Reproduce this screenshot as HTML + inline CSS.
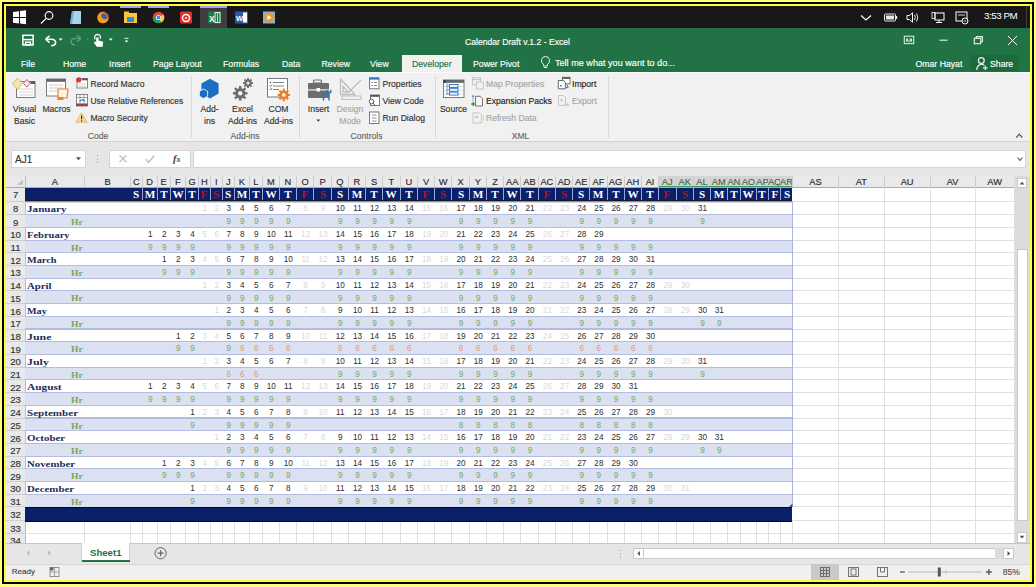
<!DOCTYPE html><html><head><meta charset="utf-8"><style>
html,body{margin:0;padding:0;width:1036px;height:587px;overflow:hidden;background:#fdfd82;position:relative}
div{line-height:1.15}
</style></head><body>
<div style="position:absolute;left:2px;top:2px;width:1032px;height:582px;background:#000"></div>
<div style="position:absolute;left:4px;top:4px;width:1028px;height:578px;background:#fcfc3a"></div>
<div style="position:absolute;left:6px;top:6px;width:1024px;height:574px;background:#f0f0f0;overflow:hidden"></div>
<div style="position:absolute;left:6px;top:6px;width:1024px;height:22px;background:#1a1719"></div>
<div style="position:absolute;left:200px;top:6px;width:27px;height:22px;background:#3f3d42"></div>
<div style="position:absolute;left:120px;top:6px;width:21px;height:1.6px;background:#9ea4e6"></div>
<div style="position:absolute;left:148px;top:6px;width:21px;height:1.6px;background:#9ea4e6"></div>
<div style="position:absolute;left:200px;top:6px;width:27px;height:1.6px;background:#9ea4e6"></div>

<svg style="position:absolute;left:0;top:0" width="1036" height="30">
 <!-- windows logo -->
 <g fill="#fff"><polygon points="13,12 19,11.2 19,17 13,17"/><polygon points="20,11 26,10.2 26,17 20,17"/><polygon points="13,18 19,18 19,23.5 13,22.8"/><polygon points="20,18 26,18 26,24.2 20,23.6"/></g>
 <!-- search -->
 <circle cx="49" cy="15.5" r="3.8" fill="none" stroke="#fff" stroke-width="1.2"/><line x1="46.2" y1="18.3" x2="41" y2="23.5" stroke="#fff" stroke-width="1.2"/>
 <!-- notepad-ish -->
 <polygon points="72,11 81,11 81,24 70,24" fill="#a9d4ea"/><polygon points="72,11 74,11 72,24 70,24" fill="#6aaed0"/>
 <!-- firefox -->
 <circle cx="103" cy="17.5" r="5.8" fill="#e8641c"/><circle cx="103.5" cy="17" r="3.3" fill="#3d5db5"/><path d="M97.5,17 Q99,11 105,11.7 Q101,13 101,16 Q103,21 108.6,18.5 Q107,23.5 102,23.3 Q97,22.5 97.5,17Z" fill="#f39c1e"/>
 <!-- folder -->
 <rect x="124" y="13" width="13" height="10" fill="#f5c842"/><rect x="124" y="11.5" width="5" height="2" fill="#f5c842"/><rect x="127" y="17" width="7" height="5" fill="#2f8fd6"/>
 <!-- chrome -->
 <circle cx="158.5" cy="17.5" r="5.8" fill="#dd4b39"/><path d="M158.5,17.5 L152.7,17.5 A5.8,5.8 0 0,0 161.4,22.5Z" fill="#1ea362"/><path d="M158.5,17.5 L161.4,22.5 A5.8,5.8 0 0,0 163.5,14.6Z" fill="#fcc934"/><circle cx="158.5" cy="17.5" r="2.6" fill="#fff"/><circle cx="158.5" cy="17.5" r="1.9" fill="#4285f4"/>
 <!-- red app -->
 <rect x="180" y="11.5" width="12" height="12" rx="1.5" fill="#e2312a"/><circle cx="186" cy="18" r="3.5" fill="none" stroke="#fff" stroke-width="1.4"/><circle cx="186" cy="18" r="1" fill="#fff"/>
 <!-- excel -->
 <rect x="208" y="11.5" width="13" height="12" fill="#1d7a45"/><text x="209" y="21.5" font-family="Liberation Sans" font-weight="700" font-size="8.5" fill="#fff">X</text><rect x="215" y="12.5" width="5" height="10" fill="none" stroke="#fff" stroke-width="0.9"/><line x1="217.5" y1="12.5" x2="217.5" y2="22.5" stroke="#fff" stroke-width="0.7"/>
 <!-- word -->
 <rect x="235" y="11.5" width="13" height="12" fill="#2b5aa8"/><text x="236" y="21" font-family="Liberation Sans" font-weight="700" font-size="7.5" fill="#fff">W</text><rect x="243" y="12.5" width="4" height="10" fill="#fff"/>
 <!-- media -->
 <rect x="263" y="11.5" width="12" height="12" fill="#8aaecc"/><circle cx="269" cy="17.5" r="4.5" fill="#f39a1d"/><polygon points="267.5,15 267.5,20 271.5,17.5" fill="#fff"/>
 <!-- tray -->
 <polyline points="861,15.5 866,20 871,15.5" fill="none" stroke="#fff" stroke-width="1.2"/>
 <rect x="884.5" y="14" width="11" height="7" rx="1" fill="none" stroke="#e8e8e8" stroke-width="1"/><rect x="886" y="15.5" width="8" height="4" fill="#e8e8e8"/><rect x="896" y="16" width="1.2" height="3" fill="#e8e8e8"/>
 <polygon points="907,15.5 909.5,15.5 912.5,12.8 912.5,22.2 909.5,19.5 907,19.5" fill="none" stroke="#fff" stroke-width="1"/><path d="M914.5,15 Q916,17.5 914.5,20 M916.5,13.5 Q919,17.5 916.5,21.5" fill="none" stroke="#fff" stroke-width="0.9"/>
 <rect x="935" y="13" width="9" height="7" fill="none" stroke="#fff" stroke-width="1"/><line x1="939" y1="20" x2="939" y2="22.5" stroke="#fff"/><line x1="936" y1="22.5" x2="942" y2="22.5" stroke="#fff"/><rect x="932" y="12.5" width="3" height="6" fill="none" stroke="#fff" stroke-width="0.8"/>
 <rect x="956" y="12" width="11" height="9" fill="none" stroke="#fff" stroke-width="1"/><line x1="958" y1="15" x2="965" y2="15" stroke="#fff" stroke-width="0.8"/><circle cx="965" cy="21" r="3" fill="#1a1719" stroke="#fff" stroke-width="1"/><line x1="963.5" y1="21" x2="966.5" y2="21" stroke="#fff" stroke-width="0.8"/>
 <line x1="1026.5" y1="6" x2="1026.5" y2="28" stroke="#555" stroke-width="0.6"/>
</svg>
<div style="position:absolute;left:984px;top:9.9px;white-space:nowrap;font-family:'Liberation Sans';font-size:9.8px;letter-spacing:-0.45px;color:#fff;">3:53 PM</div>
<div style="position:absolute;left:6px;top:28px;width:1024px;height:44px;background:#217346"></div>
<svg style="position:absolute;left:0;top:0" width="1036" height="80">
  <!-- save -->
 <g fill="none" stroke="#fff" stroke-width="1.5"><rect x="22.9" y="35.3" width="10.2" height="9.6"/><line x1="22.9" y1="39.6" x2="33.1" y2="39.6"/><rect x="25.6" y="42.2" width="4.8" height="2.7"/></g>
 <!-- undo -->
 <path d="M45.6,39.2 L49.6,35.8 M45.6,39.2 L49.6,42.6 M45.6,39.2 L51.5,39.2 Q55.6,39.4 55.6,42.6 Q55.3,45.6 51.2,45.6" fill="none" stroke="#fff" stroke-width="1.6"/>
 <polygon points="58.8,38.6 62.6,38.6 60.7,40.8" fill="#fff"/>
 <!-- redo (dim) -->
 <path d="M81,38.5 L77,35.3 M81,38.5 L77,41.7 M81,38.5 L75,38.5 Q71,38.7 71,41.9 Q71.3,44.9 75.2,44.9" fill="none" stroke="#5a9c74" stroke-width="1.5"/>
 <polygon points="86.5,38.6 88.9,38.6 87.7,40.2" fill="#5a9c74"/>
 <!-- touch -->
 <path d="M95,39.3 Q93.8,35 97.3,34.3 Q100.8,34.4 100.4,38.6" fill="none" stroke="#fff" stroke-width="1.3"/><path d="M96.2,37.5 L96.2,42.5 L94.6,41.2 L93.9,42.8 L96.8,46.8 L102.6,46.8 L103.2,41.8 L98.6,40.4 L98.6,37.5Z" fill="#fff"/>
 <polygon points="108.8,38.6 112.6,38.6 110.7,40.8" fill="#fff"/>
 <!-- customize -->
 <line x1="124.5" y1="38.3" x2="128.5" y2="38.3" stroke="#fff" stroke-width="0.9"/><polygon points="124.6,40.5 128.4,40.5 126.5,42.6" fill="#fff"/>
 <!-- window buttons -->
 <rect x="904.3" y="36.2" width="9.4" height="7.4" fill="none" stroke="#d8ecdf" stroke-width="1.1"/><rect x="906" y="38.6" width="6" height="3" fill="#d8ecdf"/><polygon points="907.3,40.6 910.7,40.6 909,38.3" fill="#217346"/>
 <line x1="939.5" y1="40.2" x2="947.5" y2="40.2" stroke="#e8f3ec" stroke-width="1.1"/>
 <rect x="974.3" y="38.3" width="6.4" height="5.4" fill="none" stroke="#e8f3ec" stroke-width="1.1"/><polyline points="976.3,38.3 976.3,36.6 982.4,36.6 982.4,41.8 980.7,41.8" fill="none" stroke="#e8f3ec" stroke-width="1.1"/>
 <path d="M1008,36 L1017,45 M1017,36 L1008,45" stroke="#fff" stroke-width="1"/>
 <!-- lightbulb -->
 <path d="M543.5,66 L543.5,64.5 Q541,62.5 541.5,59.8 Q542.3,56.5 545.5,56.5 Q548.7,56.5 549.5,59.8 Q550,62.5 547.5,64.5 L547.5,66 Z" fill="none" stroke="#fff" stroke-width="0.9"/><line x1="543.8" y1="67.5" x2="547.2" y2="67.5" stroke="#fff" stroke-width="0.9"/>

</svg>
<div style="position:absolute;left:465px;top:37.7px;white-space:nowrap;font-family:'Liberation Sans';-webkit-text-stroke:0.15px currentColor;font-size:8.6px;color:#fff;">Calendar Draft v.1.2 - Excel</div>
<div style="position:absolute;left:402px;top:55px;width:60px;height:17.5px;background:#f1f1f1"></div>
<div style="position:absolute;left:21px;top:58.6px;white-space:nowrap;font-family:'Liberation Sans';-webkit-text-stroke:0.15px currentColor;font-size:8.7px;color:#fff;">File</div>
<div style="position:absolute;left:63px;top:58.6px;white-space:nowrap;font-family:'Liberation Sans';-webkit-text-stroke:0.15px currentColor;font-size:8.7px;color:#fff;">Home</div>
<div style="position:absolute;left:109px;top:58.6px;white-space:nowrap;font-family:'Liberation Sans';-webkit-text-stroke:0.15px currentColor;font-size:8.7px;color:#fff;">Insert</div>
<div style="position:absolute;left:153px;top:58.6px;white-space:nowrap;font-family:'Liberation Sans';-webkit-text-stroke:0.15px currentColor;font-size:8.7px;color:#fff;">Page Layout</div>
<div style="position:absolute;left:223px;top:58.6px;white-space:nowrap;font-family:'Liberation Sans';-webkit-text-stroke:0.15px currentColor;font-size:8.7px;color:#fff;">Formulas</div>
<div style="position:absolute;left:282px;top:58.6px;white-space:nowrap;font-family:'Liberation Sans';-webkit-text-stroke:0.15px currentColor;font-size:8.7px;color:#fff;">Data</div>
<div style="position:absolute;left:321.5px;top:58.6px;white-space:nowrap;font-family:'Liberation Sans';-webkit-text-stroke:0.15px currentColor;font-size:8.7px;color:#fff;">Review</div>
<div style="position:absolute;left:370px;top:58.6px;white-space:nowrap;font-family:'Liberation Sans';-webkit-text-stroke:0.15px currentColor;font-size:8.7px;color:#fff;">View</div>
<div style="position:absolute;left:473px;top:58.6px;white-space:nowrap;font-family:'Liberation Sans';-webkit-text-stroke:0.15px currentColor;font-size:8.7px;color:#fff;">Power Pivot</div>
<div style="position:absolute;left:555px;top:58.4px;white-space:nowrap;font-family:'Liberation Sans';-webkit-text-stroke:0.15px currentColor;font-size:9.1px;color:#fff;">Tell me what you want to do...</div>
<div style="position:absolute;left:412px;top:58.6px;white-space:nowrap;font-family:'Liberation Sans';-webkit-text-stroke:0.15px currentColor;font-size:8.7px;color:#217346;">Developer</div>
<div style="position:absolute;left:915.5px;top:58.6px;white-space:nowrap;font-family:'Liberation Sans';-webkit-text-stroke:0.15px currentColor;font-size:8.7px;color:#fff;">Omar Hayat</div>
<div style="position:absolute;left:971px;top:55px;width:47px;height:16px;background:#1a6a3c"></div>
<div style="position:absolute;left:0;top:0"></div>
<div style="position:absolute;left:990px;top:58.6px;white-space:nowrap;font-family:'Liberation Sans';-webkit-text-stroke:0.15px currentColor;font-size:8.7px;color:#fff;">Share</div>
<svg style="position:absolute;left:0;top:0" width="1036" height="80"><circle cx="981.3" cy="60.6" r="2.9" fill="none" stroke="#e8f3ec" stroke-width="1.3"/><path d="M976.6,69.8 Q977.5,64.8 981.6,64.2 Q983.3,64.4 984.2,65.4" fill="none" stroke="#e8f3ec" stroke-width="1.3"/><path d="M983,67.8 L987.6,67.8 M985.3,65.5 L985.3,70.1" stroke="#e8f3ec" stroke-width="1.2"/></svg>
<div style="position:absolute;left:6px;top:72px;width:1024px;height:69.5px;background:#f1f1f1"></div>
<div style="position:absolute;left:6px;top:72px;width:1024px;height:1px;background:#fafafa"></div>
<div style="position:absolute;left:6px;top:141.3px;width:1024px;height:1px;background:#d4d4d4"></div>
<div style="position:absolute;left:190.8px;top:76px;width:1px;height:62px;background:#dadada"></div>
<div style="position:absolute;left:299.2px;top:76px;width:1px;height:62px;background:#dadada"></div>
<div style="position:absolute;left:434.6px;top:76px;width:1px;height:62px;background:#dadada"></div>
<div style="position:absolute;left:607.7px;top:76px;width:1px;height:62px;background:#dadada"></div>
<div style="position:absolute;left:-5.50px;top:105.3px;width:60px;text-align:center;white-space:nowrap;font-family:'Liberation Sans';-webkit-text-stroke:0.15px currentColor;font-size:8.6px;color:#333;">Visual</div>
<div style="position:absolute;left:-5.50px;top:117.3px;width:60px;text-align:center;white-space:nowrap;font-family:'Liberation Sans';-webkit-text-stroke:0.15px currentColor;font-size:8.6px;color:#333;">Basic</div>
<div style="position:absolute;left:26.50px;top:105.3px;width:60px;text-align:center;white-space:nowrap;font-family:'Liberation Sans';-webkit-text-stroke:0.15px currentColor;font-size:8.6px;color:#333;">Macros</div>
<div style="position:absolute;left:90.5px;top:79.5px;white-space:nowrap;font-family:'Liberation Sans';-webkit-text-stroke:0.15px currentColor;font-size:8.6px;color:#333;">Record Macro</div>
<div style="position:absolute;left:90.5px;top:96.5px;white-space:nowrap;font-family:'Liberation Sans';-webkit-text-stroke:0.15px currentColor;font-size:8.6px;color:#333;font-size:8.4px;">Use Relative References</div>
<div style="position:absolute;left:90.5px;top:113.5px;white-space:nowrap;font-family:'Liberation Sans';-webkit-text-stroke:0.15px currentColor;font-size:8.6px;color:#333;">Macro Security</div>
<div style="position:absolute;left:68.00px;top:131.8px;width:60px;text-align:center;white-space:nowrap;font-family:'Liberation Sans';-webkit-text-stroke:0.15px currentColor;font-size:8.6px;color:#666;">Code</div>
<div style="position:absolute;left:179.50px;top:105.3px;width:60px;text-align:center;white-space:nowrap;font-family:'Liberation Sans';-webkit-text-stroke:0.15px currentColor;font-size:8.6px;color:#333;">Add-</div>
<div style="position:absolute;left:179.50px;top:117.3px;width:60px;text-align:center;white-space:nowrap;font-family:'Liberation Sans';-webkit-text-stroke:0.15px currentColor;font-size:8.6px;color:#333;">ins</div>
<div style="position:absolute;left:212.50px;top:105.3px;width:60px;text-align:center;white-space:nowrap;font-family:'Liberation Sans';-webkit-text-stroke:0.15px currentColor;font-size:8.6px;color:#333;">Excel</div>
<div style="position:absolute;left:212.50px;top:117.3px;width:60px;text-align:center;white-space:nowrap;font-family:'Liberation Sans';-webkit-text-stroke:0.15px currentColor;font-size:8.6px;color:#333;">Add-ins</div>
<div style="position:absolute;left:248.50px;top:105.3px;width:60px;text-align:center;white-space:nowrap;font-family:'Liberation Sans';-webkit-text-stroke:0.15px currentColor;font-size:8.6px;color:#333;">COM</div>
<div style="position:absolute;left:248.50px;top:117.3px;width:60px;text-align:center;white-space:nowrap;font-family:'Liberation Sans';-webkit-text-stroke:0.15px currentColor;font-size:8.6px;color:#333;">Add-ins</div>
<div style="position:absolute;left:215.00px;top:131.8px;width:60px;text-align:center;white-space:nowrap;font-family:'Liberation Sans';-webkit-text-stroke:0.15px currentColor;font-size:8.6px;color:#666;">Add-ins</div>
<div style="position:absolute;left:288.50px;top:105.3px;width:60px;text-align:center;white-space:nowrap;font-family:'Liberation Sans';-webkit-text-stroke:0.15px currentColor;font-size:8.6px;color:#333;">Insert</div>
<div style="position:absolute;left:320.00px;top:105.3px;width:60px;text-align:center;white-space:nowrap;font-family:'Liberation Sans';-webkit-text-stroke:0.15px currentColor;font-size:8.6px;color:#a6a6a6;">Design</div>
<div style="position:absolute;left:320.00px;top:117.3px;width:60px;text-align:center;white-space:nowrap;font-family:'Liberation Sans';-webkit-text-stroke:0.15px currentColor;font-size:8.6px;color:#a6a6a6;">Mode</div>
<div style="position:absolute;left:382.5px;top:79.5px;white-space:nowrap;font-family:'Liberation Sans';-webkit-text-stroke:0.15px currentColor;font-size:8.6px;color:#333;">Properties</div>
<div style="position:absolute;left:382.5px;top:96.5px;white-space:nowrap;font-family:'Liberation Sans';-webkit-text-stroke:0.15px currentColor;font-size:8.6px;color:#333;">View Code</div>
<div style="position:absolute;left:382.5px;top:113.5px;white-space:nowrap;font-family:'Liberation Sans';-webkit-text-stroke:0.15px currentColor;font-size:8.6px;color:#333;">Run Dialog</div>
<div style="position:absolute;left:336.50px;top:131.8px;width:60px;text-align:center;white-space:nowrap;font-family:'Liberation Sans';-webkit-text-stroke:0.15px currentColor;font-size:8.6px;color:#666;">Controls</div>
<div style="position:absolute;left:423.50px;top:105.3px;width:60px;text-align:center;white-space:nowrap;font-family:'Liberation Sans';-webkit-text-stroke:0.15px currentColor;font-size:8.6px;color:#333;">Source</div>
<div style="position:absolute;left:486px;top:79.5px;white-space:nowrap;font-family:'Liberation Sans';-webkit-text-stroke:0.15px currentColor;font-size:8.6px;color:#a6a6a6;">Map Properties</div>
<div style="position:absolute;left:486px;top:96.5px;white-space:nowrap;font-family:'Liberation Sans';-webkit-text-stroke:0.15px currentColor;font-size:8.6px;color:#333;color:#222;">Expansion Packs</div>
<div style="position:absolute;left:486px;top:113.5px;white-space:nowrap;font-family:'Liberation Sans';-webkit-text-stroke:0.15px currentColor;font-size:8.6px;color:#a6a6a6;">Refresh Data</div>
<div style="position:absolute;left:572px;top:80px;white-space:nowrap;font-family:'Liberation Sans';-webkit-text-stroke:0.15px currentColor;font-size:8.6px;color:#333;color:#222;">Import</div>
<div style="position:absolute;left:572px;top:96.5px;white-space:nowrap;font-family:'Liberation Sans';-webkit-text-stroke:0.15px currentColor;font-size:8.6px;color:#a6a6a6;">Export</div>
<div style="position:absolute;left:490.50px;top:131.8px;width:60px;text-align:center;white-space:nowrap;font-family:'Liberation Sans';-webkit-text-stroke:0.15px currentColor;font-size:8.6px;color:#666;">XML</div>
<svg style="position:absolute;left:0;top:0" width="1036" height="150">
 <!-- Visual Basic -->
 <rect x="16.5" y="81.5" width="18.5" height="16" fill="#fff" stroke="#7a7a7a" stroke-width="1"/>
 <rect x="30.5" y="81.5" width="4.5" height="2.5" fill="#555"/>
 <g stroke="#c8c8c8" stroke-width="0.8"><line x1="19" y1="89" x2="33" y2="89"/><line x1="19" y1="92" x2="33" y2="92"/><line x1="19" y1="95" x2="33" y2="95"/></g>
 <polygon points="17.5,78 22.5,83.5 17.5,89.5 12.5,83.5" fill="#f5e3b8" stroke="#e3b85c" stroke-width="1"/>
 <polygon points="26.8,79.5 30.3,83.3 26.8,87.3 23.3,83.3" fill="#fbe0ea" stroke="#d9578a" stroke-width="1"/>
 <!-- Macros -->
 <rect x="46.5" y="79" width="19" height="17" fill="#fff" stroke="#7a7a7a" stroke-width="1"/>
 <rect x="46.5" y="79" width="19" height="2.8" fill="#666"/>
 <g stroke="#bcbcbc" stroke-width="0.8"><line x1="49" y1="85" x2="63" y2="85"/><line x1="49" y1="88" x2="63" y2="88"/><line x1="49" y1="91" x2="57" y2="91"/></g>
 <path d="M58,89 L68,89 L67,98 L58,98 Z" fill="#fff3e6" stroke="#e9852f" stroke-width="1.2"/><rect x="57.5" y="97" width="6" height="3" fill="#e9852f"/>
 <!-- Record Macro -->
 <rect x="77" y="78.5" width="10.5" height="9.5" fill="#fff" stroke="#7a7a7a" stroke-width="0.9"/><rect x="82" y="78.5" width="5.5" height="1.8" fill="#555"/>
 <g stroke="#c0c0c0" stroke-width="0.7"><line x1="78.5" y1="84" x2="86" y2="84"/><line x1="78.5" y1="86.3" x2="86" y2="86.3"/></g>
 <circle cx="78.8" cy="79.8" r="2.6" fill="#d9372a"/>
 <!-- Use relative -->
 <rect x="76.5" y="94.5" width="11" height="11.5" fill="#fff" stroke="#7a7a7a" stroke-width="0.9"/>
 <rect x="76.5" y="103.5" width="11" height="2.5" fill="#a4373a"/>
 <g stroke="#7a7a7a" stroke-width="0.7"><line x1="80" y1="94.5" x2="80" y2="106"/><line x1="84" y1="94.5" x2="84" y2="106"/><line x1="76.5" y1="97.5" x2="87.5" y2="97.5"/></g>
 <path d="M79.5,101.5 Q82,98.5 85,101" fill="none" stroke="#2e75c6" stroke-width="1.1"/>
 <!-- warning -->
 <polygon points="81.5,112.8 87.3,122.3 75.7,122.3" fill="#f3d9a0" stroke="#e2b55a" stroke-width="0.8"/>
 <rect x="81" y="115.5" width="1.2" height="3.8" fill="#333"/><rect x="81" y="120.2" width="1.2" height="1.2" fill="#333"/>
 <!-- Add-ins hexes -->
 <polygon points="210,78.7 218.6,83.5 218.6,93.5 210,98.5 201.4,93.5 201.4,83.5" fill="#1b6ec2"/>
 <polygon points="203.5,89 207.6,91.3 207.6,96.2 203.5,98.5 199.4,96.2 199.4,91.3" fill="#1b6ec2" stroke="#f1f1f1" stroke-width="0.9"/>
 <!-- gears -->
 <g fill="#6d6d6d">
  <circle cx="240.2" cy="93.3" r="5.2"/>
  <g stroke="#6d6d6d" stroke-width="2.4"><line x1="240.2" y1="86" x2="240.2" y2="100.6"/><line x1="232.9" y1="93.3" x2="247.5" y2="93.3"/><line x1="235" y1="88.1" x2="245.4" y2="98.5"/><line x1="245.4" y1="88.1" x2="235" y2="98.5"/></g>
  <circle cx="248" cy="83" r="3.5"/>
  <g stroke="#6d6d6d" stroke-width="1.8"><line x1="248" y1="78" x2="248" y2="88"/><line x1="243" y1="83" x2="253" y2="83"/><line x1="244.5" y1="79.5" x2="251.5" y2="86.5"/><line x1="251.5" y1="79.5" x2="244.5" y2="86.5"/></g>
 </g>
 <circle cx="240.2" cy="93.3" r="2.2" fill="#f1f1f1"/><circle cx="248" cy="83" r="1.5" fill="#f1f1f1"/>
 <!-- COM -->
 <rect x="267.5" y="78.5" width="20" height="18.5" fill="#fff" stroke="#7a7a7a" stroke-width="1"/>
 <g stroke="#666" stroke-width="0.8"><line x1="273" y1="82.5" x2="284" y2="82.5"/><line x1="273" y1="86" x2="284" y2="86"/><line x1="273" y1="89.5" x2="279" y2="89.5"/></g>
 <g fill="none" stroke="#555" stroke-width="0.8"><path d="M269.5,85.5 L270.5,86.5 L272,84.5"/><path d="M269.5,89 L270.5,90 L272,88"/></g><circle cx="270.5" cy="82.5" r="0.8" fill="#555"/>
 <g fill="#e8832a"><circle cx="283.8" cy="94.9" r="4.5"/><g stroke="#e8832a" stroke-width="2.2"><line x1="283.8" y1="88.7" x2="283.8" y2="101.1"/><line x1="277.6" y1="94.9" x2="290" y2="94.9"/><line x1="279.4" y1="90.5" x2="288.2" y2="99.3"/><line x1="288.2" y1="90.5" x2="279.4" y2="99.3"/></g></g>
 <circle cx="283.8" cy="94.9" r="1.8" fill="#fff"/>
 <!-- Insert briefcase -->
 <rect x="313.5" y="80" width="8" height="3" rx="1" fill="none" stroke="#6d6d6d" stroke-width="1.2"/>
 <rect x="308" y="83" width="21" height="15" rx="1" fill="#6d6d6d"/>
 <rect x="308" y="89.3" width="21" height="1.2" fill="#f1f1f1"/>
 <rect x="316.5" y="88" width="3.5" height="3.5" fill="#fff"/>
 <g stroke="#2e75c6" stroke-width="1.5" fill="none"><line x1="323.5" y1="92" x2="323.5" y2="100.5"/><line x1="329" y1="92" x2="329" y2="100.5"/><path d="M327.3,90 L327.3,92.5 L330.7,92.5 L330.7,90"/></g>
 <!-- Design Mode -->
 <g fill="none" stroke="#bdbdbd" stroke-width="1.3"><polygon points="340.5,79 340.5,94.5 355,94.5"/><polygon points="343,86.5 343,92 348.5,92"/><line x1="348" y1="93" x2="361" y2="80"/></g>
 <rect x="342" y="96" width="19" height="3.5" fill="none" stroke="#bdbdbd" stroke-width="1"/>
 <!-- Properties -->
 <rect x="369.5" y="77.8" width="9.5" height="11" fill="#fff" stroke="#6d6d6d" stroke-width="0.9"/><rect x="369.5" y="77.8" width="9.5" height="1.8" fill="#2e75c6"/>
 <g stroke="#666" stroke-width="0.8"><line x1="371.5" y1="82.5" x2="373" y2="82.5"/><line x1="374" y1="82.5" x2="377" y2="82.5"/><line x1="371.5" y1="85.5" x2="373" y2="85.5"/><line x1="374" y1="85.5" x2="377" y2="85.5"/></g>
 <!-- View code -->
 <rect x="370.5" y="95" width="9" height="10.5" fill="#fff" stroke="#6d6d6d" stroke-width="0.9"/><rect x="370.5" y="95" width="9" height="1.8" fill="#555"/>
 <circle cx="371.5" cy="101.5" r="2.3" fill="#fff" stroke="#555" stroke-width="0.9"/><line x1="373.2" y1="103.2" x2="375" y2="105.5" stroke="#555" stroke-width="1"/>
 <!-- Run dialog -->
 <rect x="369.5" y="112" width="9.5" height="11.5" fill="#fff" stroke="#6d6d6d" stroke-width="0.9"/>
 <g stroke="#777" stroke-width="0.8"><line x1="372" y1="115" x2="376.5" y2="115"/><line x1="372" y1="118" x2="376.5" y2="118"/><line x1="372" y1="121" x2="376.5" y2="121"/></g>
 <!-- insert dropdown -->
 <polygon points="316.3,119.6 320.3,119.6 318.3,121.8" fill="#444"/>
 <!-- Source -->
 <rect x="443.5" y="80" width="20.5" height="17.5" fill="#fff" stroke="#7a7a7a" stroke-width="1"/><rect x="443.5" y="80" width="20.5" height="2.8" fill="#666"/><rect x="443.5" y="80" width="2" height="2.8" fill="#333"/>
 <g stroke="#c8c8c8" stroke-width="0.7"><line x1="443.5" y1="86.5" x2="464" y2="86.5"/><line x1="443.5" y1="90.5" x2="464" y2="90.5"/><line x1="443.5" y1="94" x2="464" y2="94"/></g>
 <path d="M447,82.8 L447,95 M447,86 L449.5,86 M447,89.8 L449.5,89.8 M447,93.6 L449.5,93.6" fill="none" stroke="#5b9bd5" stroke-width="0.9"/>
 <g fill="#eaf2fb" stroke="#2e75c6" stroke-width="0.9"><rect x="449.5" y="84.5" width="8.5" height="3"/><rect x="449.5" y="88.3" width="8.5" height="3"/><rect x="449.5" y="92.1" width="8.5" height="3"/></g>
 <!-- Map props (grey) -->
 <g fill="#f1f1f1" stroke="#c0c0c0" stroke-width="0.9"><rect x="472.5" y="77.8" width="8" height="7"/><rect x="476.5" y="82" width="7" height="7"/></g>
 <line x1="472.5" y1="79.6" x2="480.5" y2="79.6" stroke="#c0c0c0" stroke-width="0.9"/>
 <!-- Expansion packs -->
 <path d="M475.5,96.3 L480.3,96.3 L482.5,98.5 L482.5,106 L475.5,106 Z" fill="#f4f4f4" stroke="#666" stroke-width="0.9"/>
 <path d="M473,96.5 L473,101" stroke="#555" stroke-width="0.8" stroke-dasharray="1,0.8"/><rect x="472" y="95.5" width="2" height="1.2" fill="#2e75c6"/>
 <path d="M471.2,104 L475,104 M473.1,102.1 L473.1,105.9" stroke="#2a9a56" stroke-width="1.3"/>
 <!-- Refresh (grey) -->
 <path d="M473,112.8 L479.5,112.8 L481.5,114.8 L481.5,123 L473,123 Z" fill="none" stroke="#c4c4c4" stroke-width="0.9"/><line x1="483.3" y1="115" x2="483.3" y2="121" stroke="#c4c4c4" stroke-width="1" stroke-dasharray="1.2,0.8"/><rect x="475" y="116" width="3" height="2" fill="#c4c4c4"/>
 <!-- Import -->
 <rect x="562.5" y="77.3" width="7.5" height="6.5" fill="#fff" stroke="#666" stroke-width="0.9"/><rect x="562.5" y="77.3" width="7.5" height="1.6" fill="#555"/>
 <path d="M558.3,80.5 L563.5,80.5 L565.3,82.3 L565.3,88.8 L558.3,88.8 Z" fill="#fff" stroke="#666" stroke-width="1"/>
 <rect x="560" y="85" width="1.6" height="1.4" fill="#2e75c6"/>
 <path d="M567.3,84.5 L567.3,88 M565.8,86.6 L567.3,88.2 L568.8,86.6" fill="none" stroke="#2a9a56" stroke-width="1"/>
 <!-- Export (grey) -->
 <path d="M558.5,95.5 L563.5,95.5 L565.5,97.5 L565.5,105.5 L558.5,105.5 Z" fill="none" stroke="#c4c4c4" stroke-width="0.9"/><rect x="560.5" y="99" width="2" height="2" fill="#c8c8c8"/>
 <path d="M564,104.8 L568.5,104.8 M567,103.2 L568.6,104.8 L567,106.4" fill="none" stroke="#c4c4c4" stroke-width="1"/>
 <!-- collapse ribbon -->
 <polyline points="1016.3,137.5 1019.3,134.2 1022.3,137.5" fill="none" stroke="#555" stroke-width="1.2"/>
</svg>
<div style="position:absolute;left:6px;top:142.3px;width:1024px;height:34.2px;background:#e6e6e6"></div>
<div style="position:absolute;left:10.5px;top:149.9px;width:75.5px;height:18.4px;background:#fff;border:1px solid #d6d6d6;box-sizing:border-box"></div>
<div style="position:absolute;left:15px;top:153.5px;white-space:nowrap;font-family:'Liberation Sans';-webkit-text-stroke:0.15px currentColor;font-size:10px;color:#333;">AJ1</div>
<div style="position:absolute;left:109px;top:149.9px;width:82.4px;height:18.4px;background:#fff;border:1px solid #d6d6d6;box-sizing:border-box"></div>
<div style="position:absolute;left:193.1px;top:149.9px;width:833.4px;height:18.4px;background:#fff;border:1px solid #d6d6d6;box-sizing:border-box"></div>
<svg style="position:absolute;left:0;top:0" width="1036" height="180">
 <polygon points="75.9,157.3 81.1,157.3 78.5,160.3" fill="#555"/>
 <g fill="#999"><rect x="97" y="155" width="1" height="1"/><rect x="97" y="158.5" width="1" height="1"/><rect x="97" y="162" width="1" height="1"/></g>
 <path d="M119.5,155.3 L126.5,162.3 M126.5,155.3 L119.5,162.3" stroke="#c4c4c4" stroke-width="1.4"/>
 <polyline points="145.7,159.3 148.6,162.3 154.3,155.6" fill="none" stroke="#c4c4c4" stroke-width="1.6"/>
 <polyline points="1017.5,157.5 1020,160.3 1022.5,157.5" fill="none" stroke="#555" stroke-width="1.1"/>
</svg>
<div style="position:absolute;left:173px;top:152.6px;white-space:nowrap;font-family:'Liberation Serif';font-weight:700;font-size:10.5px;color:#444;"><i>f</i><i style='font-size:8px'>x</i></div>
<div style="position:absolute;left:25.3px;top:187.2px;width:988.9000000000001px;height:355.8px;background:#fff"></div>
<div style="position:absolute;left:6px;top:176.4px;width:1008.2px;height:10.8px;background:#e9e9e9"></div>
<div style="position:absolute;left:658.6px;top:176.4px;width:133.79999999999995px;height:10.8px;background:#d4d4d4"></div>
<div style="position:absolute;left:6px;top:187.2px;width:19.3px;height:355.8px;background:#e9e9e9"></div>
<div style="position:absolute;left:25.30px;top:176.5px;width:59.3px;text-align:center;white-space:nowrap;font-family:'Liberation Sans';-webkit-text-stroke:0.15px currentColor;font-size:9.3px;color:#2a2a2a;">A</div>
<div style="position:absolute;left:84.1px;top:176.4px;width:1px;height:10.8px;background:#cdcdcd"></div>
<div style="position:absolute;left:84.60px;top:176.5px;width:45.80000000000001px;text-align:center;white-space:nowrap;font-family:'Liberation Sans';-webkit-text-stroke:0.15px currentColor;font-size:9.3px;color:#2a2a2a;">B</div>
<div style="position:absolute;left:129.9px;top:176.4px;width:1px;height:10.8px;background:#cdcdcd"></div>
<div style="position:absolute;left:121.30px;top:176.5px;width:30px;text-align:center;white-space:nowrap;font-family:'Liberation Sans';-webkit-text-stroke:0.15px currentColor;font-size:9.3px;color:#2a2a2a;">C</div>
<div style="position:absolute;left:141.7px;top:176.4px;width:1px;height:10.8px;background:#cdcdcd"></div>
<div style="position:absolute;left:134.70px;top:176.5px;width:30px;text-align:center;white-space:nowrap;font-family:'Liberation Sans';-webkit-text-stroke:0.15px currentColor;font-size:9.3px;color:#2a2a2a;">D</div>
<div style="position:absolute;left:156.7px;top:176.4px;width:1px;height:10.8px;background:#cdcdcd"></div>
<div style="position:absolute;left:148.70px;top:176.5px;width:30px;text-align:center;white-space:nowrap;font-family:'Liberation Sans';-webkit-text-stroke:0.15px currentColor;font-size:9.3px;color:#2a2a2a;">E</div>
<div style="position:absolute;left:169.7px;top:176.4px;width:1px;height:10.8px;background:#cdcdcd"></div>
<div style="position:absolute;left:162.90px;top:176.5px;width:30px;text-align:center;white-space:nowrap;font-family:'Liberation Sans';-webkit-text-stroke:0.15px currentColor;font-size:9.3px;color:#2a2a2a;">F</div>
<div style="position:absolute;left:185.1px;top:176.4px;width:1px;height:10.8px;background:#cdcdcd"></div>
<div style="position:absolute;left:177.00px;top:176.5px;width:30px;text-align:center;white-space:nowrap;font-family:'Liberation Sans';-webkit-text-stroke:0.15px currentColor;font-size:9.3px;color:#2a2a2a;">G</div>
<div style="position:absolute;left:197.9px;top:176.4px;width:1px;height:10.8px;background:#cdcdcd"></div>
<div style="position:absolute;left:189.25px;top:176.5px;width:30px;text-align:center;white-space:nowrap;font-family:'Liberation Sans';-webkit-text-stroke:0.15px currentColor;font-size:9.3px;color:#2a2a2a;">H</div>
<div style="position:absolute;left:209.6px;top:176.4px;width:1px;height:10.8px;background:#cdcdcd"></div>
<div style="position:absolute;left:201.25px;top:176.5px;width:30px;text-align:center;white-space:nowrap;font-family:'Liberation Sans';-webkit-text-stroke:0.15px currentColor;font-size:9.3px;color:#2a2a2a;">I</div>
<div style="position:absolute;left:221.9px;top:176.4px;width:1px;height:10.8px;background:#cdcdcd"></div>
<div style="position:absolute;left:213.35px;top:176.5px;width:30px;text-align:center;white-space:nowrap;font-family:'Liberation Sans';-webkit-text-stroke:0.15px currentColor;font-size:9.3px;color:#2a2a2a;">J</div>
<div style="position:absolute;left:233.8px;top:176.4px;width:1px;height:10.8px;background:#cdcdcd"></div>
<div style="position:absolute;left:226.85px;top:176.5px;width:30px;text-align:center;white-space:nowrap;font-family:'Liberation Sans';-webkit-text-stroke:0.15px currentColor;font-size:9.3px;color:#2a2a2a;">K</div>
<div style="position:absolute;left:248.9px;top:176.4px;width:1px;height:10.8px;background:#cdcdcd"></div>
<div style="position:absolute;left:240.85px;top:176.5px;width:30px;text-align:center;white-space:nowrap;font-family:'Liberation Sans';-webkit-text-stroke:0.15px currentColor;font-size:9.3px;color:#2a2a2a;">L</div>
<div style="position:absolute;left:261.8px;top:176.4px;width:1px;height:10.8px;background:#cdcdcd"></div>
<div style="position:absolute;left:255.80px;top:176.5px;width:30px;text-align:center;white-space:nowrap;font-family:'Liberation Sans';-webkit-text-stroke:0.15px currentColor;font-size:9.3px;color:#2a2a2a;">M</div>
<div style="position:absolute;left:278.8px;top:176.4px;width:1px;height:10.8px;background:#cdcdcd"></div>
<div style="position:absolute;left:272.85px;top:176.5px;width:30px;text-align:center;white-space:nowrap;font-family:'Liberation Sans';-webkit-text-stroke:0.15px currentColor;font-size:9.3px;color:#2a2a2a;">N</div>
<div style="position:absolute;left:295.9px;top:176.4px;width:1px;height:10.8px;background:#cdcdcd"></div>
<div style="position:absolute;left:290.15px;top:176.5px;width:30px;text-align:center;white-space:nowrap;font-family:'Liberation Sans';-webkit-text-stroke:0.15px currentColor;font-size:9.3px;color:#2a2a2a;">O</div>
<div style="position:absolute;left:313.4px;top:176.4px;width:1px;height:10.8px;background:#cdcdcd"></div>
<div style="position:absolute;left:307.60px;top:176.5px;width:30px;text-align:center;white-space:nowrap;font-family:'Liberation Sans';-webkit-text-stroke:0.15px currentColor;font-size:9.3px;color:#2a2a2a;">P</div>
<div style="position:absolute;left:330.8px;top:176.4px;width:1px;height:10.8px;background:#cdcdcd"></div>
<div style="position:absolute;left:324.85px;top:176.5px;width:30px;text-align:center;white-space:nowrap;font-family:'Liberation Sans';-webkit-text-stroke:0.15px currentColor;font-size:9.3px;color:#2a2a2a;">Q</div>
<div style="position:absolute;left:347.9px;top:176.4px;width:1px;height:10.8px;background:#cdcdcd"></div>
<div style="position:absolute;left:341.95px;top:176.5px;width:30px;text-align:center;white-space:nowrap;font-family:'Liberation Sans';-webkit-text-stroke:0.15px currentColor;font-size:9.3px;color:#2a2a2a;">R</div>
<div style="position:absolute;left:365.0px;top:176.4px;width:1px;height:10.8px;background:#cdcdcd"></div>
<div style="position:absolute;left:359.10px;top:176.5px;width:30px;text-align:center;white-space:nowrap;font-family:'Liberation Sans';-webkit-text-stroke:0.15px currentColor;font-size:9.3px;color:#2a2a2a;">S</div>
<div style="position:absolute;left:382.2px;top:176.4px;width:1px;height:10.8px;background:#cdcdcd"></div>
<div style="position:absolute;left:376.35px;top:176.5px;width:30px;text-align:center;white-space:nowrap;font-family:'Liberation Sans';-webkit-text-stroke:0.15px currentColor;font-size:9.3px;color:#2a2a2a;">T</div>
<div style="position:absolute;left:399.5px;top:176.4px;width:1px;height:10.8px;background:#cdcdcd"></div>
<div style="position:absolute;left:393.75px;top:176.5px;width:30px;text-align:center;white-space:nowrap;font-family:'Liberation Sans';-webkit-text-stroke:0.15px currentColor;font-size:9.3px;color:#2a2a2a;">U</div>
<div style="position:absolute;left:417.0px;top:176.4px;width:1px;height:10.8px;background:#cdcdcd"></div>
<div style="position:absolute;left:411.00px;top:176.5px;width:30px;text-align:center;white-space:nowrap;font-family:'Liberation Sans';-webkit-text-stroke:0.15px currentColor;font-size:9.3px;color:#2a2a2a;">V</div>
<div style="position:absolute;left:434.0px;top:176.4px;width:1px;height:10.8px;background:#cdcdcd"></div>
<div style="position:absolute;left:428.20px;top:176.5px;width:30px;text-align:center;white-space:nowrap;font-family:'Liberation Sans';-webkit-text-stroke:0.15px currentColor;font-size:9.3px;color:#2a2a2a;">W</div>
<div style="position:absolute;left:451.4px;top:176.4px;width:1px;height:10.8px;background:#cdcdcd"></div>
<div style="position:absolute;left:445.55px;top:176.5px;width:30px;text-align:center;white-space:nowrap;font-family:'Liberation Sans';-webkit-text-stroke:0.15px currentColor;font-size:9.3px;color:#2a2a2a;">X</div>
<div style="position:absolute;left:468.7px;top:176.4px;width:1px;height:10.8px;background:#cdcdcd"></div>
<div style="position:absolute;left:462.80px;top:176.5px;width:30px;text-align:center;white-space:nowrap;font-family:'Liberation Sans';-webkit-text-stroke:0.15px currentColor;font-size:9.3px;color:#2a2a2a;">Y</div>
<div style="position:absolute;left:485.9px;top:176.4px;width:1px;height:10.8px;background:#cdcdcd"></div>
<div style="position:absolute;left:480.00px;top:176.5px;width:30px;text-align:center;white-space:nowrap;font-family:'Liberation Sans';-webkit-text-stroke:0.15px currentColor;font-size:9.3px;color:#2a2a2a;">Z</div>
<div style="position:absolute;left:503.1px;top:176.4px;width:1px;height:10.8px;background:#cdcdcd"></div>
<div style="position:absolute;left:497.20px;top:176.5px;width:30px;text-align:center;white-space:nowrap;font-family:'Liberation Sans';-webkit-text-stroke:0.15px currentColor;font-size:9.3px;color:#2a2a2a;">AA</div>
<div style="position:absolute;left:520.3px;top:176.4px;width:1px;height:10.8px;background:#cdcdcd"></div>
<div style="position:absolute;left:514.50px;top:176.5px;width:30px;text-align:center;white-space:nowrap;font-family:'Liberation Sans';-webkit-text-stroke:0.15px currentColor;font-size:9.3px;color:#2a2a2a;">AB</div>
<div style="position:absolute;left:537.7px;top:176.4px;width:1px;height:10.8px;background:#cdcdcd"></div>
<div style="position:absolute;left:531.90px;top:176.5px;width:30px;text-align:center;white-space:nowrap;font-family:'Liberation Sans';-webkit-text-stroke:0.15px currentColor;font-size:9.3px;color:#2a2a2a;">AC</div>
<div style="position:absolute;left:555.1px;top:176.4px;width:1px;height:10.8px;background:#cdcdcd"></div>
<div style="position:absolute;left:549.15px;top:176.5px;width:30px;text-align:center;white-space:nowrap;font-family:'Liberation Sans';-webkit-text-stroke:0.15px currentColor;font-size:9.3px;color:#2a2a2a;">AD</div>
<div style="position:absolute;left:572.2px;top:176.4px;width:1px;height:10.8px;background:#cdcdcd"></div>
<div style="position:absolute;left:566.25px;top:176.5px;width:30px;text-align:center;white-space:nowrap;font-family:'Liberation Sans';-webkit-text-stroke:0.15px currentColor;font-size:9.3px;color:#2a2a2a;">AE</div>
<div style="position:absolute;left:589.3px;top:176.4px;width:1px;height:10.8px;background:#cdcdcd"></div>
<div style="position:absolute;left:583.40px;top:176.5px;width:30px;text-align:center;white-space:nowrap;font-family:'Liberation Sans';-webkit-text-stroke:0.15px currentColor;font-size:9.3px;color:#2a2a2a;">AF</div>
<div style="position:absolute;left:606.5px;top:176.4px;width:1px;height:10.8px;background:#cdcdcd"></div>
<div style="position:absolute;left:600.55px;top:176.5px;width:30px;text-align:center;white-space:nowrap;font-family:'Liberation Sans';-webkit-text-stroke:0.15px currentColor;font-size:9.3px;color:#2a2a2a;">AG</div>
<div style="position:absolute;left:623.6px;top:176.4px;width:1px;height:10.8px;background:#cdcdcd"></div>
<div style="position:absolute;left:617.80px;top:176.5px;width:30px;text-align:center;white-space:nowrap;font-family:'Liberation Sans';-webkit-text-stroke:0.15px currentColor;font-size:9.3px;color:#2a2a2a;">AH</div>
<div style="position:absolute;left:641.0px;top:176.4px;width:1px;height:10.8px;background:#cdcdcd"></div>
<div style="position:absolute;left:635.05px;top:176.5px;width:30px;text-align:center;white-space:nowrap;font-family:'Liberation Sans';-webkit-text-stroke:0.15px currentColor;font-size:9.3px;color:#2a2a2a;">AI</div>
<div style="position:absolute;left:658.1px;top:176.4px;width:1px;height:10.8px;background:#cdcdcd"></div>
<div style="position:absolute;left:652.30px;top:176.5px;width:30px;text-align:center;white-space:nowrap;font-family:'Liberation Sans';-webkit-text-stroke:0.15px currentColor;font-size:9.3px;color:#3a6b4b;">AJ</div>
<div style="position:absolute;left:675.5px;top:176.4px;width:1px;height:10.8px;background:#cdcdcd"></div>
<div style="position:absolute;left:669.70px;top:176.5px;width:30px;text-align:center;white-space:nowrap;font-family:'Liberation Sans';-webkit-text-stroke:0.15px currentColor;font-size:9.3px;color:#3a6b4b;">AK</div>
<div style="position:absolute;left:692.9px;top:176.4px;width:1px;height:10.8px;background:#cdcdcd"></div>
<div style="position:absolute;left:686.95px;top:176.5px;width:30px;text-align:center;white-space:nowrap;font-family:'Liberation Sans';-webkit-text-stroke:0.15px currentColor;font-size:9.3px;color:#3a6b4b;">AL</div>
<div style="position:absolute;left:710.0px;top:176.4px;width:1px;height:10.8px;background:#cdcdcd"></div>
<div style="position:absolute;left:703.85px;top:176.5px;width:30px;text-align:center;white-space:nowrap;font-family:'Liberation Sans';-webkit-text-stroke:0.15px currentColor;font-size:9.3px;color:#3a6b4b;">AM</div>
<div style="position:absolute;left:726.7px;top:176.4px;width:1px;height:10.8px;background:#cdcdcd"></div>
<div style="position:absolute;left:718.85px;top:176.5px;width:30px;text-align:center;white-space:nowrap;font-family:'Liberation Sans';-webkit-text-stroke:0.15px currentColor;font-size:9.3px;color:#3a6b4b;">AN</div>
<div style="position:absolute;left:740.0px;top:176.4px;width:1px;height:10.8px;background:#cdcdcd"></div>
<div style="position:absolute;left:733.35px;top:176.5px;width:30px;text-align:center;white-space:nowrap;font-family:'Liberation Sans';-webkit-text-stroke:0.15px currentColor;font-size:9.3px;color:#3a6b4b;">AO</div>
<div style="position:absolute;left:755.7px;top:176.4px;width:1px;height:10.8px;background:#cdcdcd"></div>
<div style="position:absolute;left:747.45px;top:176.5px;width:30px;text-align:center;white-space:nowrap;font-family:'Liberation Sans';-webkit-text-stroke:0.15px currentColor;font-size:9.3px;color:#3a6b4b;">AP</div>
<div style="position:absolute;left:768.2px;top:176.4px;width:1px;height:10.8px;background:#cdcdcd"></div>
<div style="position:absolute;left:759.65px;top:176.5px;width:30px;text-align:center;white-space:nowrap;font-family:'Liberation Sans';-webkit-text-stroke:0.15px currentColor;font-size:9.3px;color:#3a6b4b;">AQ</div>
<div style="position:absolute;left:780.1px;top:176.4px;width:1px;height:10.8px;background:#cdcdcd"></div>
<div style="position:absolute;left:771.50px;top:176.5px;width:30px;text-align:center;white-space:nowrap;font-family:'Liberation Sans';-webkit-text-stroke:0.15px currentColor;font-size:9.3px;color:#3a6b4b;">AR</div>
<div style="position:absolute;left:791.9px;top:176.4px;width:1px;height:10.8px;background:#cdcdcd"></div>
<div style="position:absolute;left:792.40px;top:176.5px;width:46.200000000000045px;text-align:center;white-space:nowrap;font-family:'Liberation Sans';-webkit-text-stroke:0.15px currentColor;font-size:9.3px;color:#2a2a2a;">AS</div>
<div style="position:absolute;left:838.1px;top:176.4px;width:1px;height:10.8px;background:#cdcdcd"></div>
<div style="position:absolute;left:838.60px;top:176.5px;width:45.69999999999993px;text-align:center;white-space:nowrap;font-family:'Liberation Sans';-webkit-text-stroke:0.15px currentColor;font-size:9.3px;color:#2a2a2a;">AT</div>
<div style="position:absolute;left:883.8px;top:176.4px;width:1px;height:10.8px;background:#cdcdcd"></div>
<div style="position:absolute;left:884.30px;top:176.5px;width:45.700000000000045px;text-align:center;white-space:nowrap;font-family:'Liberation Sans';-webkit-text-stroke:0.15px currentColor;font-size:9.3px;color:#2a2a2a;">AU</div>
<div style="position:absolute;left:929.5px;top:176.4px;width:1px;height:10.8px;background:#cdcdcd"></div>
<div style="position:absolute;left:930.00px;top:176.5px;width:45.200000000000045px;text-align:center;white-space:nowrap;font-family:'Liberation Sans';-webkit-text-stroke:0.15px currentColor;font-size:9.3px;color:#2a2a2a;">AV</div>
<div style="position:absolute;left:974.7px;top:176.4px;width:1px;height:10.8px;background:#cdcdcd"></div>
<div style="position:absolute;left:975.20px;top:176.5px;width:39.0px;text-align:center;white-space:nowrap;font-family:'Liberation Sans';-webkit-text-stroke:0.15px currentColor;font-size:9.3px;color:#2a2a2a;">AW</div>
<div style="position:absolute;left:1013.7px;top:176.4px;width:1px;height:10.8px;background:#cdcdcd"></div>
<div style="position:absolute;left:24.8px;top:176.4px;width:1px;height:10.8px;background:#bdbdbd"></div>
<div style="position:absolute;left:6px;top:186.7px;width:1008.2px;height:0.9px;background:#ababab"></div>
<div style="position:absolute;left:658.6px;top:185.8px;width:133.79999999999995px;height:1.6px;background:#3c9a63"></div>
<div style="position:absolute;left:24.8px;top:187.2px;width:1px;height:355.8px;background:#bdbdbd"></div>
<svg style="position:absolute;left:0;top:0" width="40" height="190"><polygon points="22.8,179.9 22.8,184.8 17,184.8" fill="#bdbdbd"/></svg>
<div style="position:absolute;left:6px;top:200.7px;width:19.3px;height:1px;background:#cfcfcf"></div>
<div style="position:absolute;left:6.10px;top:189.1px;width:19px;text-align:center;white-space:nowrap;font-family:'Liberation Sans';-webkit-text-stroke:0.15px currentColor;font-size:9.6px;color:#333;">7</div>
<div style="position:absolute;left:6px;top:214.15px;width:19.3px;height:1px;background:#cfcfcf"></div>
<div style="position:absolute;left:6.10px;top:203.1px;width:19px;text-align:center;white-space:nowrap;font-family:'Liberation Sans';-webkit-text-stroke:0.15px currentColor;font-size:9.6px;color:#333;">8</div>
<div style="position:absolute;left:6px;top:226.86px;width:19.3px;height:1px;background:#cfcfcf"></div>
<div style="position:absolute;left:6.10px;top:216.55px;width:19px;text-align:center;white-space:nowrap;font-family:'Liberation Sans';-webkit-text-stroke:0.15px currentColor;font-size:9.6px;color:#333;">9</div>
<div style="position:absolute;left:6px;top:239.57px;width:19.3px;height:1px;background:#cfcfcf"></div>
<div style="position:absolute;left:6.10px;top:229.26000000000002px;width:19px;text-align:center;white-space:nowrap;font-family:'Liberation Sans';-webkit-text-stroke:0.15px currentColor;font-size:9.6px;color:#333;">10</div>
<div style="position:absolute;left:6px;top:252.28px;width:19.3px;height:1px;background:#cfcfcf"></div>
<div style="position:absolute;left:6.10px;top:241.97px;width:19px;text-align:center;white-space:nowrap;font-family:'Liberation Sans';-webkit-text-stroke:0.15px currentColor;font-size:9.6px;color:#333;">11</div>
<div style="position:absolute;left:6px;top:264.99px;width:19.3px;height:1px;background:#cfcfcf"></div>
<div style="position:absolute;left:6.10px;top:254.68px;width:19px;text-align:center;white-space:nowrap;font-family:'Liberation Sans';-webkit-text-stroke:0.15px currentColor;font-size:9.6px;color:#333;">12</div>
<div style="position:absolute;left:6px;top:277.7px;width:19.3px;height:1px;background:#cfcfcf"></div>
<div style="position:absolute;left:6.10px;top:267.39px;width:19px;text-align:center;white-space:nowrap;font-family:'Liberation Sans';-webkit-text-stroke:0.15px currentColor;font-size:9.6px;color:#333;">13</div>
<div style="position:absolute;left:6px;top:290.40999999999997px;width:19.3px;height:1px;background:#cfcfcf"></div>
<div style="position:absolute;left:6.10px;top:280.09999999999997px;width:19px;text-align:center;white-space:nowrap;font-family:'Liberation Sans';-webkit-text-stroke:0.15px currentColor;font-size:9.6px;color:#333;">14</div>
<div style="position:absolute;left:6px;top:303.12px;width:19.3px;height:1px;background:#cfcfcf"></div>
<div style="position:absolute;left:6.10px;top:292.80999999999995px;width:19px;text-align:center;white-space:nowrap;font-family:'Liberation Sans';-webkit-text-stroke:0.15px currentColor;font-size:9.6px;color:#333;">15</div>
<div style="position:absolute;left:6px;top:315.83000000000004px;width:19.3px;height:1px;background:#cfcfcf"></div>
<div style="position:absolute;left:6.10px;top:305.52px;width:19px;text-align:center;white-space:nowrap;font-family:'Liberation Sans';-webkit-text-stroke:0.15px currentColor;font-size:9.6px;color:#333;">16</div>
<div style="position:absolute;left:6px;top:328.54px;width:19.3px;height:1px;background:#cfcfcf"></div>
<div style="position:absolute;left:6.10px;top:318.23px;width:19px;text-align:center;white-space:nowrap;font-family:'Liberation Sans';-webkit-text-stroke:0.15px currentColor;font-size:9.6px;color:#333;">17</div>
<div style="position:absolute;left:6px;top:341.25px;width:19.3px;height:1px;background:#cfcfcf"></div>
<div style="position:absolute;left:6.10px;top:330.94px;width:19px;text-align:center;white-space:nowrap;font-family:'Liberation Sans';-webkit-text-stroke:0.15px currentColor;font-size:9.6px;color:#333;">18</div>
<div style="position:absolute;left:6px;top:353.96000000000004px;width:19.3px;height:1px;background:#cfcfcf"></div>
<div style="position:absolute;left:6.10px;top:343.65px;width:19px;text-align:center;white-space:nowrap;font-family:'Liberation Sans';-webkit-text-stroke:0.15px currentColor;font-size:9.6px;color:#333;">19</div>
<div style="position:absolute;left:6px;top:366.67px;width:19.3px;height:1px;background:#cfcfcf"></div>
<div style="position:absolute;left:6.10px;top:356.36px;width:19px;text-align:center;white-space:nowrap;font-family:'Liberation Sans';-webkit-text-stroke:0.15px currentColor;font-size:9.6px;color:#333;">20</div>
<div style="position:absolute;left:6px;top:379.38px;width:19.3px;height:1px;background:#cfcfcf"></div>
<div style="position:absolute;left:6.10px;top:369.07px;width:19px;text-align:center;white-space:nowrap;font-family:'Liberation Sans';-webkit-text-stroke:0.15px currentColor;font-size:9.6px;color:#333;">21</div>
<div style="position:absolute;left:6px;top:392.09000000000003px;width:19.3px;height:1px;background:#cfcfcf"></div>
<div style="position:absolute;left:6.10px;top:381.78px;width:19px;text-align:center;white-space:nowrap;font-family:'Liberation Sans';-webkit-text-stroke:0.15px currentColor;font-size:9.6px;color:#333;">22</div>
<div style="position:absolute;left:6px;top:404.8px;width:19.3px;height:1px;background:#cfcfcf"></div>
<div style="position:absolute;left:6.10px;top:394.49px;width:19px;text-align:center;white-space:nowrap;font-family:'Liberation Sans';-webkit-text-stroke:0.15px currentColor;font-size:9.6px;color:#333;">23</div>
<div style="position:absolute;left:6px;top:417.51px;width:19.3px;height:1px;background:#cfcfcf"></div>
<div style="position:absolute;left:6.10px;top:407.2px;width:19px;text-align:center;white-space:nowrap;font-family:'Liberation Sans';-webkit-text-stroke:0.15px currentColor;font-size:9.6px;color:#333;">24</div>
<div style="position:absolute;left:6px;top:430.22px;width:19.3px;height:1px;background:#cfcfcf"></div>
<div style="position:absolute;left:6.10px;top:419.90999999999997px;width:19px;text-align:center;white-space:nowrap;font-family:'Liberation Sans';-webkit-text-stroke:0.15px currentColor;font-size:9.6px;color:#333;">25</div>
<div style="position:absolute;left:6px;top:442.93px;width:19.3px;height:1px;background:#cfcfcf"></div>
<div style="position:absolute;left:6.10px;top:432.62px;width:19px;text-align:center;white-space:nowrap;font-family:'Liberation Sans';-webkit-text-stroke:0.15px currentColor;font-size:9.6px;color:#333;">26</div>
<div style="position:absolute;left:6px;top:455.64px;width:19.3px;height:1px;background:#cfcfcf"></div>
<div style="position:absolute;left:6.10px;top:445.33px;width:19px;text-align:center;white-space:nowrap;font-family:'Liberation Sans';-webkit-text-stroke:0.15px currentColor;font-size:9.6px;color:#333;">27</div>
<div style="position:absolute;left:6px;top:468.35px;width:19.3px;height:1px;background:#cfcfcf"></div>
<div style="position:absolute;left:6.10px;top:458.03999999999996px;width:19px;text-align:center;white-space:nowrap;font-family:'Liberation Sans';-webkit-text-stroke:0.15px currentColor;font-size:9.6px;color:#333;">28</div>
<div style="position:absolute;left:6px;top:481.06px;width:19.3px;height:1px;background:#cfcfcf"></div>
<div style="position:absolute;left:6.10px;top:470.75px;width:19px;text-align:center;white-space:nowrap;font-family:'Liberation Sans';-webkit-text-stroke:0.15px currentColor;font-size:9.6px;color:#333;">29</div>
<div style="position:absolute;left:6px;top:493.77000000000004px;width:19.3px;height:1px;background:#cfcfcf"></div>
<div style="position:absolute;left:6.10px;top:483.46px;width:19px;text-align:center;white-space:nowrap;font-family:'Liberation Sans';-webkit-text-stroke:0.15px currentColor;font-size:9.6px;color:#333;">30</div>
<div style="position:absolute;left:6px;top:506.48px;width:19.3px;height:1px;background:#cfcfcf"></div>
<div style="position:absolute;left:6.10px;top:496.17px;width:19px;text-align:center;white-space:nowrap;font-family:'Liberation Sans';-webkit-text-stroke:0.15px currentColor;font-size:9.6px;color:#333;">31</div>
<div style="position:absolute;left:6px;top:520.2px;width:19.3px;height:1px;background:#cfcfcf"></div>
<div style="position:absolute;left:6.10px;top:508.88px;width:19px;text-align:center;white-space:nowrap;font-family:'Liberation Sans';-webkit-text-stroke:0.15px currentColor;font-size:9.6px;color:#333;">32</div>
<div style="position:absolute;left:6px;top:533.0px;width:19.3px;height:1px;background:#cfcfcf"></div>
<div style="position:absolute;left:6.10px;top:522.6px;width:19px;text-align:center;white-space:nowrap;font-family:'Liberation Sans';-webkit-text-stroke:0.15px currentColor;font-size:9.6px;color:#333;">33</div>
<div style="position:absolute;left:6px;top:542.5px;width:19.3px;height:1px;background:#cfcfcf"></div>
<div style="position:absolute;left:6.10px;top:535.4px;width:19px;text-align:center;white-space:nowrap;font-family:'Liberation Sans';-webkit-text-stroke:0.15px currentColor;font-size:9.6px;color:#333;">34</div>
<div style="position:absolute;left:84.1px;top:520.6px;width:1px;height:22.399999999999977px;background:#e0e0e0"></div>
<div style="position:absolute;left:129.9px;top:520.6px;width:1px;height:22.399999999999977px;background:#e0e0e0"></div>
<div style="position:absolute;left:141.7px;top:520.6px;width:1px;height:22.399999999999977px;background:#e0e0e0"></div>
<div style="position:absolute;left:156.7px;top:520.6px;width:1px;height:22.399999999999977px;background:#e0e0e0"></div>
<div style="position:absolute;left:169.7px;top:520.6px;width:1px;height:22.399999999999977px;background:#e0e0e0"></div>
<div style="position:absolute;left:185.1px;top:520.6px;width:1px;height:22.399999999999977px;background:#e0e0e0"></div>
<div style="position:absolute;left:197.9px;top:520.6px;width:1px;height:22.399999999999977px;background:#e0e0e0"></div>
<div style="position:absolute;left:209.6px;top:520.6px;width:1px;height:22.399999999999977px;background:#e0e0e0"></div>
<div style="position:absolute;left:221.9px;top:520.6px;width:1px;height:22.399999999999977px;background:#e0e0e0"></div>
<div style="position:absolute;left:233.8px;top:520.6px;width:1px;height:22.399999999999977px;background:#e0e0e0"></div>
<div style="position:absolute;left:248.9px;top:520.6px;width:1px;height:22.399999999999977px;background:#e0e0e0"></div>
<div style="position:absolute;left:261.8px;top:520.6px;width:1px;height:22.399999999999977px;background:#e0e0e0"></div>
<div style="position:absolute;left:278.8px;top:520.6px;width:1px;height:22.399999999999977px;background:#e0e0e0"></div>
<div style="position:absolute;left:295.9px;top:520.6px;width:1px;height:22.399999999999977px;background:#e0e0e0"></div>
<div style="position:absolute;left:313.4px;top:520.6px;width:1px;height:22.399999999999977px;background:#e0e0e0"></div>
<div style="position:absolute;left:330.8px;top:520.6px;width:1px;height:22.399999999999977px;background:#e0e0e0"></div>
<div style="position:absolute;left:347.9px;top:520.6px;width:1px;height:22.399999999999977px;background:#e0e0e0"></div>
<div style="position:absolute;left:365.0px;top:520.6px;width:1px;height:22.399999999999977px;background:#e0e0e0"></div>
<div style="position:absolute;left:382.2px;top:520.6px;width:1px;height:22.399999999999977px;background:#e0e0e0"></div>
<div style="position:absolute;left:399.5px;top:520.6px;width:1px;height:22.399999999999977px;background:#e0e0e0"></div>
<div style="position:absolute;left:417.0px;top:520.6px;width:1px;height:22.399999999999977px;background:#e0e0e0"></div>
<div style="position:absolute;left:434.0px;top:520.6px;width:1px;height:22.399999999999977px;background:#e0e0e0"></div>
<div style="position:absolute;left:451.4px;top:520.6px;width:1px;height:22.399999999999977px;background:#e0e0e0"></div>
<div style="position:absolute;left:468.7px;top:520.6px;width:1px;height:22.399999999999977px;background:#e0e0e0"></div>
<div style="position:absolute;left:485.9px;top:520.6px;width:1px;height:22.399999999999977px;background:#e0e0e0"></div>
<div style="position:absolute;left:503.1px;top:520.6px;width:1px;height:22.399999999999977px;background:#e0e0e0"></div>
<div style="position:absolute;left:520.3px;top:520.6px;width:1px;height:22.399999999999977px;background:#e0e0e0"></div>
<div style="position:absolute;left:537.7px;top:520.6px;width:1px;height:22.399999999999977px;background:#e0e0e0"></div>
<div style="position:absolute;left:555.1px;top:520.6px;width:1px;height:22.399999999999977px;background:#e0e0e0"></div>
<div style="position:absolute;left:572.2px;top:520.6px;width:1px;height:22.399999999999977px;background:#e0e0e0"></div>
<div style="position:absolute;left:589.3px;top:520.6px;width:1px;height:22.399999999999977px;background:#e0e0e0"></div>
<div style="position:absolute;left:606.5px;top:520.6px;width:1px;height:22.399999999999977px;background:#e0e0e0"></div>
<div style="position:absolute;left:623.6px;top:520.6px;width:1px;height:22.399999999999977px;background:#e0e0e0"></div>
<div style="position:absolute;left:641.0px;top:520.6px;width:1px;height:22.399999999999977px;background:#e0e0e0"></div>
<div style="position:absolute;left:658.1px;top:520.6px;width:1px;height:22.399999999999977px;background:#e0e0e0"></div>
<div style="position:absolute;left:675.5px;top:520.6px;width:1px;height:22.399999999999977px;background:#e0e0e0"></div>
<div style="position:absolute;left:692.9px;top:520.6px;width:1px;height:22.399999999999977px;background:#e0e0e0"></div>
<div style="position:absolute;left:710.0px;top:520.6px;width:1px;height:22.399999999999977px;background:#e0e0e0"></div>
<div style="position:absolute;left:726.7px;top:520.6px;width:1px;height:22.399999999999977px;background:#e0e0e0"></div>
<div style="position:absolute;left:740.0px;top:520.6px;width:1px;height:22.399999999999977px;background:#e0e0e0"></div>
<div style="position:absolute;left:755.7px;top:520.6px;width:1px;height:22.399999999999977px;background:#e0e0e0"></div>
<div style="position:absolute;left:768.2px;top:520.6px;width:1px;height:22.399999999999977px;background:#e0e0e0"></div>
<div style="position:absolute;left:780.1px;top:520.6px;width:1px;height:22.399999999999977px;background:#e0e0e0"></div>
<div style="position:absolute;left:791.9px;top:520.6px;width:1px;height:22.399999999999977px;background:#e0e0e0"></div>
<div style="position:absolute;left:838.1px;top:520.6px;width:1px;height:22.399999999999977px;background:#e0e0e0"></div>
<div style="position:absolute;left:883.8px;top:520.6px;width:1px;height:22.399999999999977px;background:#e0e0e0"></div>
<div style="position:absolute;left:929.5px;top:520.6px;width:1px;height:22.399999999999977px;background:#e0e0e0"></div>
<div style="position:absolute;left:974.7px;top:520.6px;width:1px;height:22.399999999999977px;background:#e0e0e0"></div>
<div style="position:absolute;left:1013.7px;top:520.6px;width:1px;height:22.399999999999977px;background:#e0e0e0"></div>
<div style="position:absolute;left:838.1px;top:187.2px;width:1px;height:333.40000000000003px;background:#e0e0e0"></div>
<div style="position:absolute;left:883.8px;top:187.2px;width:1px;height:333.40000000000003px;background:#e0e0e0"></div>
<div style="position:absolute;left:929.5px;top:187.2px;width:1px;height:333.40000000000003px;background:#e0e0e0"></div>
<div style="position:absolute;left:974.7px;top:187.2px;width:1px;height:333.40000000000003px;background:#e0e0e0"></div>
<div style="position:absolute;left:1013.7px;top:187.2px;width:1px;height:333.40000000000003px;background:#e0e0e0"></div>
<div style="position:absolute;left:792.4px;top:200.7px;width:221.80000000000007px;height:1px;background:#e0e0e0"></div>
<div style="position:absolute;left:792.4px;top:214.15px;width:221.80000000000007px;height:1px;background:#e0e0e0"></div>
<div style="position:absolute;left:792.4px;top:226.86px;width:221.80000000000007px;height:1px;background:#e0e0e0"></div>
<div style="position:absolute;left:792.4px;top:239.57px;width:221.80000000000007px;height:1px;background:#e0e0e0"></div>
<div style="position:absolute;left:792.4px;top:252.28px;width:221.80000000000007px;height:1px;background:#e0e0e0"></div>
<div style="position:absolute;left:792.4px;top:264.99px;width:221.80000000000007px;height:1px;background:#e0e0e0"></div>
<div style="position:absolute;left:792.4px;top:277.7px;width:221.80000000000007px;height:1px;background:#e0e0e0"></div>
<div style="position:absolute;left:792.4px;top:290.40999999999997px;width:221.80000000000007px;height:1px;background:#e0e0e0"></div>
<div style="position:absolute;left:792.4px;top:303.12px;width:221.80000000000007px;height:1px;background:#e0e0e0"></div>
<div style="position:absolute;left:792.4px;top:315.83000000000004px;width:221.80000000000007px;height:1px;background:#e0e0e0"></div>
<div style="position:absolute;left:792.4px;top:328.54px;width:221.80000000000007px;height:1px;background:#e0e0e0"></div>
<div style="position:absolute;left:792.4px;top:341.25px;width:221.80000000000007px;height:1px;background:#e0e0e0"></div>
<div style="position:absolute;left:792.4px;top:353.96000000000004px;width:221.80000000000007px;height:1px;background:#e0e0e0"></div>
<div style="position:absolute;left:792.4px;top:366.67px;width:221.80000000000007px;height:1px;background:#e0e0e0"></div>
<div style="position:absolute;left:792.4px;top:379.38px;width:221.80000000000007px;height:1px;background:#e0e0e0"></div>
<div style="position:absolute;left:792.4px;top:392.09000000000003px;width:221.80000000000007px;height:1px;background:#e0e0e0"></div>
<div style="position:absolute;left:792.4px;top:404.8px;width:221.80000000000007px;height:1px;background:#e0e0e0"></div>
<div style="position:absolute;left:792.4px;top:417.51px;width:221.80000000000007px;height:1px;background:#e0e0e0"></div>
<div style="position:absolute;left:792.4px;top:430.22px;width:221.80000000000007px;height:1px;background:#e0e0e0"></div>
<div style="position:absolute;left:792.4px;top:442.93px;width:221.80000000000007px;height:1px;background:#e0e0e0"></div>
<div style="position:absolute;left:792.4px;top:455.64px;width:221.80000000000007px;height:1px;background:#e0e0e0"></div>
<div style="position:absolute;left:792.4px;top:468.35px;width:221.80000000000007px;height:1px;background:#e0e0e0"></div>
<div style="position:absolute;left:792.4px;top:481.06px;width:221.80000000000007px;height:1px;background:#e0e0e0"></div>
<div style="position:absolute;left:792.4px;top:493.77000000000004px;width:221.80000000000007px;height:1px;background:#e0e0e0"></div>
<div style="position:absolute;left:792.4px;top:506.48px;width:221.80000000000007px;height:1px;background:#e0e0e0"></div>
<div style="position:absolute;left:25.3px;top:520.2px;width:988.9000000000001px;height:1px;background:#e0e0e0"></div>
<div style="position:absolute;left:25.3px;top:533.0px;width:988.9000000000001px;height:1px;background:#e0e0e0"></div>
<div style="position:absolute;left:25.3px;top:542.5px;width:988.9000000000001px;height:1px;background:#e0e0e0"></div>
<div style="position:absolute;left:25.3px;top:187.8px;width:767.1px;height:13.3px;background:#0a2068"></div>
<div style="position:absolute;left:25.3px;top:199.5px;width:767.1px;height:1.2px;background:#14172e"></div>
<div style="position:absolute;left:25.3px;top:200.7px;width:767.1px;height:1.5px;background:#8f8f99"></div>
<div style="position:absolute;left:25.3px;top:202.2px;width:767.1px;height:0.7px;background:#d6d6da"></div>
<div style="position:absolute;left:126.30px;top:189.2px;width:20px;text-align:center;font-family:Liberation Serif;font-weight:700;font-size:10px;color:#fff;transform:scaleX(1.12)">S</div>
<div style="position:absolute;left:139.70px;top:189.2px;width:20px;text-align:center;font-family:Liberation Serif;font-weight:700;font-size:10px;color:#fff;transform:scaleX(1.12)">M</div>
<div style="position:absolute;left:141.7px;top:187.2px;width:1px;height:12.6px;background:#9aa8d6"></div>
<div style="position:absolute;left:153.70px;top:189.2px;width:20px;text-align:center;font-family:Liberation Serif;font-weight:700;font-size:10px;color:#fff;transform:scaleX(1.12)">T</div>
<div style="position:absolute;left:156.7px;top:187.2px;width:1px;height:12.6px;background:#9aa8d6"></div>
<div style="position:absolute;left:167.90px;top:189.2px;width:20px;text-align:center;font-family:Liberation Serif;font-weight:700;font-size:10px;color:#fff;transform:scaleX(1.12)">W</div>
<div style="position:absolute;left:169.7px;top:187.2px;width:1px;height:12.6px;background:#9aa8d6"></div>
<div style="position:absolute;left:182.00px;top:189.2px;width:20px;text-align:center;font-family:Liberation Serif;font-weight:700;font-size:10px;color:#fff;transform:scaleX(1.12)">T</div>
<div style="position:absolute;left:185.1px;top:187.2px;width:1px;height:12.6px;background:#9aa8d6"></div>
<div style="position:absolute;left:194.25px;top:189.2px;width:20px;text-align:center;font-family:Liberation Serif;font-weight:700;font-size:10px;color:#b3141c;transform:scaleX(1.12)">F</div>
<div style="position:absolute;left:197.9px;top:187.2px;width:1px;height:12.6px;background:#9aa8d6"></div>
<div style="position:absolute;left:206.25px;top:189.2px;width:20px;text-align:center;font-family:Liberation Serif;font-weight:700;font-size:10px;color:#b3141c;transform:scaleX(1.12)">S</div>
<div style="position:absolute;left:209.6px;top:187.2px;width:1px;height:12.6px;background:#9aa8d6"></div>
<div style="position:absolute;left:218.35px;top:189.2px;width:20px;text-align:center;font-family:Liberation Serif;font-weight:700;font-size:10px;color:#fff;transform:scaleX(1.12)">S</div>
<div style="position:absolute;left:221.9px;top:187.2px;width:1px;height:12.6px;background:#9aa8d6"></div>
<div style="position:absolute;left:231.85px;top:189.2px;width:20px;text-align:center;font-family:Liberation Serif;font-weight:700;font-size:10px;color:#fff;transform:scaleX(1.12)">M</div>
<div style="position:absolute;left:233.8px;top:187.2px;width:1px;height:12.6px;background:#9aa8d6"></div>
<div style="position:absolute;left:245.85px;top:189.2px;width:20px;text-align:center;font-family:Liberation Serif;font-weight:700;font-size:10px;color:#fff;transform:scaleX(1.12)">T</div>
<div style="position:absolute;left:248.9px;top:187.2px;width:1px;height:12.6px;background:#9aa8d6"></div>
<div style="position:absolute;left:260.80px;top:189.2px;width:20px;text-align:center;font-family:Liberation Serif;font-weight:700;font-size:10px;color:#fff;transform:scaleX(1.12)">W</div>
<div style="position:absolute;left:261.8px;top:187.2px;width:1px;height:12.6px;background:#9aa8d6"></div>
<div style="position:absolute;left:277.85px;top:189.2px;width:20px;text-align:center;font-family:Liberation Serif;font-weight:700;font-size:10px;color:#fff;transform:scaleX(1.12)">T</div>
<div style="position:absolute;left:278.8px;top:187.2px;width:1px;height:12.6px;background:#9aa8d6"></div>
<div style="position:absolute;left:295.15px;top:189.2px;width:20px;text-align:center;font-family:Liberation Serif;font-weight:700;font-size:10px;color:#b3141c;transform:scaleX(1.12)">F</div>
<div style="position:absolute;left:295.9px;top:187.2px;width:1px;height:12.6px;background:#9aa8d6"></div>
<div style="position:absolute;left:312.60px;top:189.2px;width:20px;text-align:center;font-family:Liberation Serif;font-weight:700;font-size:10px;color:#b3141c;transform:scaleX(1.12)">S</div>
<div style="position:absolute;left:313.4px;top:187.2px;width:1px;height:12.6px;background:#9aa8d6"></div>
<div style="position:absolute;left:329.85px;top:189.2px;width:20px;text-align:center;font-family:Liberation Serif;font-weight:700;font-size:10px;color:#fff;transform:scaleX(1.12)">S</div>
<div style="position:absolute;left:330.8px;top:187.2px;width:1px;height:12.6px;background:#9aa8d6"></div>
<div style="position:absolute;left:346.95px;top:189.2px;width:20px;text-align:center;font-family:Liberation Serif;font-weight:700;font-size:10px;color:#fff;transform:scaleX(1.12)">M</div>
<div style="position:absolute;left:347.9px;top:187.2px;width:1px;height:12.6px;background:#9aa8d6"></div>
<div style="position:absolute;left:364.10px;top:189.2px;width:20px;text-align:center;font-family:Liberation Serif;font-weight:700;font-size:10px;color:#fff;transform:scaleX(1.12)">T</div>
<div style="position:absolute;left:365.0px;top:187.2px;width:1px;height:12.6px;background:#9aa8d6"></div>
<div style="position:absolute;left:381.35px;top:189.2px;width:20px;text-align:center;font-family:Liberation Serif;font-weight:700;font-size:10px;color:#fff;transform:scaleX(1.12)">W</div>
<div style="position:absolute;left:382.2px;top:187.2px;width:1px;height:12.6px;background:#9aa8d6"></div>
<div style="position:absolute;left:398.75px;top:189.2px;width:20px;text-align:center;font-family:Liberation Serif;font-weight:700;font-size:10px;color:#fff;transform:scaleX(1.12)">T</div>
<div style="position:absolute;left:399.5px;top:187.2px;width:1px;height:12.6px;background:#9aa8d6"></div>
<div style="position:absolute;left:416.00px;top:189.2px;width:20px;text-align:center;font-family:Liberation Serif;font-weight:700;font-size:10px;color:#b3141c;transform:scaleX(1.12)">F</div>
<div style="position:absolute;left:417.0px;top:187.2px;width:1px;height:12.6px;background:#9aa8d6"></div>
<div style="position:absolute;left:433.20px;top:189.2px;width:20px;text-align:center;font-family:Liberation Serif;font-weight:700;font-size:10px;color:#b3141c;transform:scaleX(1.12)">S</div>
<div style="position:absolute;left:434.0px;top:187.2px;width:1px;height:12.6px;background:#9aa8d6"></div>
<div style="position:absolute;left:450.55px;top:189.2px;width:20px;text-align:center;font-family:Liberation Serif;font-weight:700;font-size:10px;color:#fff;transform:scaleX(1.12)">S</div>
<div style="position:absolute;left:451.4px;top:187.2px;width:1px;height:12.6px;background:#9aa8d6"></div>
<div style="position:absolute;left:467.80px;top:189.2px;width:20px;text-align:center;font-family:Liberation Serif;font-weight:700;font-size:10px;color:#fff;transform:scaleX(1.12)">M</div>
<div style="position:absolute;left:468.7px;top:187.2px;width:1px;height:12.6px;background:#9aa8d6"></div>
<div style="position:absolute;left:485.00px;top:189.2px;width:20px;text-align:center;font-family:Liberation Serif;font-weight:700;font-size:10px;color:#fff;transform:scaleX(1.12)">T</div>
<div style="position:absolute;left:485.9px;top:187.2px;width:1px;height:12.6px;background:#9aa8d6"></div>
<div style="position:absolute;left:502.20px;top:189.2px;width:20px;text-align:center;font-family:Liberation Serif;font-weight:700;font-size:10px;color:#fff;transform:scaleX(1.12)">W</div>
<div style="position:absolute;left:503.1px;top:187.2px;width:1px;height:12.6px;background:#9aa8d6"></div>
<div style="position:absolute;left:519.50px;top:189.2px;width:20px;text-align:center;font-family:Liberation Serif;font-weight:700;font-size:10px;color:#fff;transform:scaleX(1.12)">T</div>
<div style="position:absolute;left:520.3px;top:187.2px;width:1px;height:12.6px;background:#9aa8d6"></div>
<div style="position:absolute;left:536.90px;top:189.2px;width:20px;text-align:center;font-family:Liberation Serif;font-weight:700;font-size:10px;color:#b3141c;transform:scaleX(1.12)">F</div>
<div style="position:absolute;left:537.7px;top:187.2px;width:1px;height:12.6px;background:#9aa8d6"></div>
<div style="position:absolute;left:554.15px;top:189.2px;width:20px;text-align:center;font-family:Liberation Serif;font-weight:700;font-size:10px;color:#b3141c;transform:scaleX(1.12)">S</div>
<div style="position:absolute;left:555.1px;top:187.2px;width:1px;height:12.6px;background:#9aa8d6"></div>
<div style="position:absolute;left:571.25px;top:189.2px;width:20px;text-align:center;font-family:Liberation Serif;font-weight:700;font-size:10px;color:#fff;transform:scaleX(1.12)">S</div>
<div style="position:absolute;left:572.2px;top:187.2px;width:1px;height:12.6px;background:#9aa8d6"></div>
<div style="position:absolute;left:588.40px;top:189.2px;width:20px;text-align:center;font-family:Liberation Serif;font-weight:700;font-size:10px;color:#fff;transform:scaleX(1.12)">M</div>
<div style="position:absolute;left:589.3px;top:187.2px;width:1px;height:12.6px;background:#9aa8d6"></div>
<div style="position:absolute;left:605.55px;top:189.2px;width:20px;text-align:center;font-family:Liberation Serif;font-weight:700;font-size:10px;color:#fff;transform:scaleX(1.12)">T</div>
<div style="position:absolute;left:606.5px;top:187.2px;width:1px;height:12.6px;background:#9aa8d6"></div>
<div style="position:absolute;left:622.80px;top:189.2px;width:20px;text-align:center;font-family:Liberation Serif;font-weight:700;font-size:10px;color:#fff;transform:scaleX(1.12)">W</div>
<div style="position:absolute;left:623.6px;top:187.2px;width:1px;height:12.6px;background:#9aa8d6"></div>
<div style="position:absolute;left:640.05px;top:189.2px;width:20px;text-align:center;font-family:Liberation Serif;font-weight:700;font-size:10px;color:#fff;transform:scaleX(1.12)">T</div>
<div style="position:absolute;left:641.0px;top:187.2px;width:1px;height:12.6px;background:#9aa8d6"></div>
<div style="position:absolute;left:657.30px;top:189.2px;width:20px;text-align:center;font-family:Liberation Serif;font-weight:700;font-size:10px;color:#b3141c;transform:scaleX(1.12)">F</div>
<div style="position:absolute;left:658.1px;top:187.2px;width:1px;height:12.6px;background:#9aa8d6"></div>
<div style="position:absolute;left:674.70px;top:189.2px;width:20px;text-align:center;font-family:Liberation Serif;font-weight:700;font-size:10px;color:#b3141c;transform:scaleX(1.12)">S</div>
<div style="position:absolute;left:675.5px;top:187.2px;width:1px;height:12.6px;background:#9aa8d6"></div>
<div style="position:absolute;left:691.95px;top:189.2px;width:20px;text-align:center;font-family:Liberation Serif;font-weight:700;font-size:10px;color:#fff;transform:scaleX(1.12)">S</div>
<div style="position:absolute;left:692.9px;top:187.2px;width:1px;height:12.6px;background:#9aa8d6"></div>
<div style="position:absolute;left:708.85px;top:189.2px;width:20px;text-align:center;font-family:Liberation Serif;font-weight:700;font-size:10px;color:#fff;transform:scaleX(1.12)">M</div>
<div style="position:absolute;left:710.0px;top:187.2px;width:1px;height:12.6px;background:#9aa8d6"></div>
<div style="position:absolute;left:723.85px;top:189.2px;width:20px;text-align:center;font-family:Liberation Serif;font-weight:700;font-size:10px;color:#fff;transform:scaleX(1.12)">T</div>
<div style="position:absolute;left:726.7px;top:187.2px;width:1px;height:12.6px;background:#9aa8d6"></div>
<div style="position:absolute;left:738.35px;top:189.2px;width:20px;text-align:center;font-family:Liberation Serif;font-weight:700;font-size:10px;color:#fff;transform:scaleX(1.12)">W</div>
<div style="position:absolute;left:740.0px;top:187.2px;width:1px;height:12.6px;background:#9aa8d6"></div>
<div style="position:absolute;left:752.45px;top:189.2px;width:20px;text-align:center;font-family:Liberation Serif;font-weight:700;font-size:10px;color:#fff;transform:scaleX(1.12)">T</div>
<div style="position:absolute;left:755.7px;top:187.2px;width:1px;height:12.6px;background:#9aa8d6"></div>
<div style="position:absolute;left:764.65px;top:189.2px;width:20px;text-align:center;font-family:Liberation Serif;font-weight:700;font-size:10px;color:#fff;transform:scaleX(1.12)">F</div>
<div style="position:absolute;left:768.2px;top:187.2px;width:1px;height:12.6px;background:#9aa8d6"></div>
<div style="position:absolute;left:776.50px;top:189.2px;width:20px;text-align:center;font-family:Liberation Serif;font-weight:700;font-size:10px;color:#fff;transform:scaleX(1.12)">S</div>
<div style="position:absolute;left:780.1px;top:187.2px;width:1px;height:12.6px;background:#9aa8d6"></div>
<div style="position:absolute;left:25.3px;top:214.65px;width:767.1px;height:12.710000000000008px;background:#dbe1f1"></div>
<div style="position:absolute;left:25.3px;top:214.1px;width:767.1px;height:1.1px;background:#b3bde2"></div>
<div style="position:absolute;left:25.3px;top:226.81px;width:767.1px;height:1.1px;background:#b3bde2"></div>
<div style="position:absolute;left:26.9px;top:203.80px;white-space:nowrap;font-family:'Liberation Serif';font-weight:700;font-size:9.2px;color:#1d2b5c;transform:scaleX(1.213);transform-origin:0 0">January</div>
<div style="position:absolute;left:70.7px;top:217.15px;white-space:nowrap;font-family:'Liberation Serif';font-weight:700;font-size:9px;color:#78a85a;transform:scaleX(1.06);transform-origin:0 0">Hr</div>
<div style="position:absolute;left:192.75px;top:203.79999999999998px;width:24px;text-align:center;white-space:nowrap;font-family:'Liberation Sans';font-size:8.2px;color:#d9d9d9;">1</div>
<div style="position:absolute;left:204.75px;top:203.79999999999998px;width:24px;text-align:center;white-space:nowrap;font-family:'Liberation Sans';font-size:8.2px;color:#d9d9d9;">2</div>
<div style="position:absolute;left:216.85px;top:203.79999999999998px;width:24px;text-align:center;white-space:nowrap;font-family:'Liberation Sans';font-size:8.2px;color:#2e2e2e;">3</div>
<div style="position:absolute;left:230.35px;top:203.79999999999998px;width:24px;text-align:center;white-space:nowrap;font-family:'Liberation Sans';font-size:8.2px;color:#2e2e2e;">4</div>
<div style="position:absolute;left:244.35px;top:203.79999999999998px;width:24px;text-align:center;white-space:nowrap;font-family:'Liberation Sans';font-size:8.2px;color:#2e2e2e;">5</div>
<div style="position:absolute;left:259.30px;top:203.79999999999998px;width:24px;text-align:center;white-space:nowrap;font-family:'Liberation Sans';font-size:8.2px;color:#2e2e2e;">6</div>
<div style="position:absolute;left:276.35px;top:203.79999999999998px;width:24px;text-align:center;white-space:nowrap;font-family:'Liberation Sans';font-size:8.2px;color:#2e2e2e;">7</div>
<div style="position:absolute;left:293.65px;top:203.79999999999998px;width:24px;text-align:center;white-space:nowrap;font-family:'Liberation Sans';font-size:8.2px;color:#d9d9d9;">8</div>
<div style="position:absolute;left:311.10px;top:203.79999999999998px;width:24px;text-align:center;white-space:nowrap;font-family:'Liberation Sans';font-size:8.2px;color:#d9d9d9;">9</div>
<div style="position:absolute;left:328.35px;top:203.79999999999998px;width:24px;text-align:center;white-space:nowrap;font-family:'Liberation Sans';font-size:8.2px;color:#2e2e2e;">10</div>
<div style="position:absolute;left:345.45px;top:203.79999999999998px;width:24px;text-align:center;white-space:nowrap;font-family:'Liberation Sans';font-size:8.2px;color:#2e2e2e;">11</div>
<div style="position:absolute;left:362.60px;top:203.79999999999998px;width:24px;text-align:center;white-space:nowrap;font-family:'Liberation Sans';font-size:8.2px;color:#2e2e2e;">12</div>
<div style="position:absolute;left:379.85px;top:203.79999999999998px;width:24px;text-align:center;white-space:nowrap;font-family:'Liberation Sans';font-size:8.2px;color:#2e2e2e;">13</div>
<div style="position:absolute;left:397.25px;top:203.79999999999998px;width:24px;text-align:center;white-space:nowrap;font-family:'Liberation Sans';font-size:8.2px;color:#2e2e2e;">14</div>
<div style="position:absolute;left:414.50px;top:203.79999999999998px;width:24px;text-align:center;white-space:nowrap;font-family:'Liberation Sans';font-size:8.2px;color:#d9d9d9;">15</div>
<div style="position:absolute;left:431.70px;top:203.79999999999998px;width:24px;text-align:center;white-space:nowrap;font-family:'Liberation Sans';font-size:8.2px;color:#d9d9d9;">16</div>
<div style="position:absolute;left:449.05px;top:203.79999999999998px;width:24px;text-align:center;white-space:nowrap;font-family:'Liberation Sans';font-size:8.2px;color:#2e2e2e;">17</div>
<div style="position:absolute;left:466.30px;top:203.79999999999998px;width:24px;text-align:center;white-space:nowrap;font-family:'Liberation Sans';font-size:8.2px;color:#2e2e2e;">18</div>
<div style="position:absolute;left:483.50px;top:203.79999999999998px;width:24px;text-align:center;white-space:nowrap;font-family:'Liberation Sans';font-size:8.2px;color:#2e2e2e;">19</div>
<div style="position:absolute;left:500.70px;top:203.79999999999998px;width:24px;text-align:center;white-space:nowrap;font-family:'Liberation Sans';font-size:8.2px;color:#2e2e2e;">20</div>
<div style="position:absolute;left:518.00px;top:203.79999999999998px;width:24px;text-align:center;white-space:nowrap;font-family:'Liberation Sans';font-size:8.2px;color:#2e2e2e;">21</div>
<div style="position:absolute;left:535.40px;top:203.79999999999998px;width:24px;text-align:center;white-space:nowrap;font-family:'Liberation Sans';font-size:8.2px;color:#d9d9d9;">22</div>
<div style="position:absolute;left:552.65px;top:203.79999999999998px;width:24px;text-align:center;white-space:nowrap;font-family:'Liberation Sans';font-size:8.2px;color:#d9d9d9;">23</div>
<div style="position:absolute;left:569.75px;top:203.79999999999998px;width:24px;text-align:center;white-space:nowrap;font-family:'Liberation Sans';font-size:8.2px;color:#2e2e2e;">24</div>
<div style="position:absolute;left:586.90px;top:203.79999999999998px;width:24px;text-align:center;white-space:nowrap;font-family:'Liberation Sans';font-size:8.2px;color:#2e2e2e;">25</div>
<div style="position:absolute;left:604.05px;top:203.79999999999998px;width:24px;text-align:center;white-space:nowrap;font-family:'Liberation Sans';font-size:8.2px;color:#2e2e2e;">26</div>
<div style="position:absolute;left:621.30px;top:203.79999999999998px;width:24px;text-align:center;white-space:nowrap;font-family:'Liberation Sans';font-size:8.2px;color:#2e2e2e;">27</div>
<div style="position:absolute;left:638.55px;top:203.79999999999998px;width:24px;text-align:center;white-space:nowrap;font-family:'Liberation Sans';font-size:8.2px;color:#2e2e2e;">28</div>
<div style="position:absolute;left:655.80px;top:203.79999999999998px;width:24px;text-align:center;white-space:nowrap;font-family:'Liberation Sans';font-size:8.2px;color:#d9d9d9;">29</div>
<div style="position:absolute;left:673.20px;top:203.79999999999998px;width:24px;text-align:center;white-space:nowrap;font-family:'Liberation Sans';font-size:8.2px;color:#d9d9d9;">30</div>
<div style="position:absolute;left:690.45px;top:203.79999999999998px;width:24px;text-align:center;white-space:nowrap;font-family:'Liberation Sans';font-size:8.2px;color:#2e2e2e;">31</div>
<div style="position:absolute;left:216.85px;top:217.25px;width:24px;text-align:center;white-space:nowrap;font-family:'Liberation Sans';font-size:8.2px;color:#74aa64;">9</div>
<div style="position:absolute;left:230.35px;top:217.25px;width:24px;text-align:center;white-space:nowrap;font-family:'Liberation Sans';font-size:8.2px;color:#74aa64;">9</div>
<div style="position:absolute;left:244.35px;top:217.25px;width:24px;text-align:center;white-space:nowrap;font-family:'Liberation Sans';font-size:8.2px;color:#74aa64;">9</div>
<div style="position:absolute;left:259.30px;top:217.25px;width:24px;text-align:center;white-space:nowrap;font-family:'Liberation Sans';font-size:8.2px;color:#74aa64;">9</div>
<div style="position:absolute;left:276.35px;top:217.25px;width:24px;text-align:center;white-space:nowrap;font-family:'Liberation Sans';font-size:8.2px;color:#74aa64;">9</div>
<div style="position:absolute;left:328.35px;top:217.25px;width:24px;text-align:center;white-space:nowrap;font-family:'Liberation Sans';font-size:8.2px;color:#74aa64;">9</div>
<div style="position:absolute;left:345.45px;top:217.25px;width:24px;text-align:center;white-space:nowrap;font-family:'Liberation Sans';font-size:8.2px;color:#74aa64;">9</div>
<div style="position:absolute;left:362.60px;top:217.25px;width:24px;text-align:center;white-space:nowrap;font-family:'Liberation Sans';font-size:8.2px;color:#74aa64;">9</div>
<div style="position:absolute;left:379.85px;top:217.25px;width:24px;text-align:center;white-space:nowrap;font-family:'Liberation Sans';font-size:8.2px;color:#74aa64;">9</div>
<div style="position:absolute;left:397.25px;top:217.25px;width:24px;text-align:center;white-space:nowrap;font-family:'Liberation Sans';font-size:8.2px;color:#74aa64;">9</div>
<div style="position:absolute;left:449.05px;top:217.25px;width:24px;text-align:center;white-space:nowrap;font-family:'Liberation Sans';font-size:8.2px;color:#74aa64;">9</div>
<div style="position:absolute;left:466.30px;top:217.25px;width:24px;text-align:center;white-space:nowrap;font-family:'Liberation Sans';font-size:8.2px;color:#74aa64;">9</div>
<div style="position:absolute;left:483.50px;top:217.25px;width:24px;text-align:center;white-space:nowrap;font-family:'Liberation Sans';font-size:8.2px;color:#74aa64;">9</div>
<div style="position:absolute;left:500.70px;top:217.25px;width:24px;text-align:center;white-space:nowrap;font-family:'Liberation Sans';font-size:8.2px;color:#74aa64;">9</div>
<div style="position:absolute;left:518.00px;top:217.25px;width:24px;text-align:center;white-space:nowrap;font-family:'Liberation Sans';font-size:8.2px;color:#74aa64;">9</div>
<div style="position:absolute;left:569.75px;top:217.25px;width:24px;text-align:center;white-space:nowrap;font-family:'Liberation Sans';font-size:8.2px;color:#74aa64;">9</div>
<div style="position:absolute;left:586.90px;top:217.25px;width:24px;text-align:center;white-space:nowrap;font-family:'Liberation Sans';font-size:8.2px;color:#74aa64;">9</div>
<div style="position:absolute;left:604.05px;top:217.25px;width:24px;text-align:center;white-space:nowrap;font-family:'Liberation Sans';font-size:8.2px;color:#74aa64;">9</div>
<div style="position:absolute;left:621.30px;top:217.25px;width:24px;text-align:center;white-space:nowrap;font-family:'Liberation Sans';font-size:8.2px;color:#74aa64;">9</div>
<div style="position:absolute;left:638.55px;top:217.25px;width:24px;text-align:center;white-space:nowrap;font-family:'Liberation Sans';font-size:8.2px;color:#74aa64;">9</div>
<div style="position:absolute;left:690.45px;top:217.25px;width:24px;text-align:center;white-space:nowrap;font-family:'Liberation Sans';font-size:8.2px;color:#74aa64;">9</div>
<div style="position:absolute;left:25.3px;top:240.07px;width:767.1px;height:12.710000000000008px;background:#dbe1f1"></div>
<div style="position:absolute;left:25.3px;top:239.51999999999998px;width:767.1px;height:1.1px;background:#b3bde2"></div>
<div style="position:absolute;left:25.3px;top:252.23px;width:767.1px;height:1.1px;background:#b3bde2"></div>
<div style="position:absolute;left:26.9px;top:229.96px;white-space:nowrap;font-family:'Liberation Serif';font-weight:700;font-size:9.2px;color:#1d2b5c;transform:scaleX(1.144);transform-origin:0 0">February</div>
<div style="position:absolute;left:70.7px;top:242.57px;white-space:nowrap;font-family:'Liberation Serif';font-weight:700;font-size:9px;color:#78a85a;transform:scaleX(1.06);transform-origin:0 0">Hr</div>
<div style="position:absolute;left:138.20px;top:229.96px;width:24px;text-align:center;white-space:nowrap;font-family:'Liberation Sans';font-size:8.2px;color:#2e2e2e;">1</div>
<div style="position:absolute;left:152.20px;top:229.96px;width:24px;text-align:center;white-space:nowrap;font-family:'Liberation Sans';font-size:8.2px;color:#2e2e2e;">2</div>
<div style="position:absolute;left:166.40px;top:229.96px;width:24px;text-align:center;white-space:nowrap;font-family:'Liberation Sans';font-size:8.2px;color:#2e2e2e;">3</div>
<div style="position:absolute;left:180.50px;top:229.96px;width:24px;text-align:center;white-space:nowrap;font-family:'Liberation Sans';font-size:8.2px;color:#2e2e2e;">4</div>
<div style="position:absolute;left:192.75px;top:229.96px;width:24px;text-align:center;white-space:nowrap;font-family:'Liberation Sans';font-size:8.2px;color:#d9d9d9;">5</div>
<div style="position:absolute;left:204.75px;top:229.96px;width:24px;text-align:center;white-space:nowrap;font-family:'Liberation Sans';font-size:8.2px;color:#d9d9d9;">6</div>
<div style="position:absolute;left:216.85px;top:229.96px;width:24px;text-align:center;white-space:nowrap;font-family:'Liberation Sans';font-size:8.2px;color:#2e2e2e;">7</div>
<div style="position:absolute;left:230.35px;top:229.96px;width:24px;text-align:center;white-space:nowrap;font-family:'Liberation Sans';font-size:8.2px;color:#2e2e2e;">8</div>
<div style="position:absolute;left:244.35px;top:229.96px;width:24px;text-align:center;white-space:nowrap;font-family:'Liberation Sans';font-size:8.2px;color:#2e2e2e;">9</div>
<div style="position:absolute;left:259.30px;top:229.96px;width:24px;text-align:center;white-space:nowrap;font-family:'Liberation Sans';font-size:8.2px;color:#2e2e2e;">10</div>
<div style="position:absolute;left:276.35px;top:229.96px;width:24px;text-align:center;white-space:nowrap;font-family:'Liberation Sans';font-size:8.2px;color:#2e2e2e;">11</div>
<div style="position:absolute;left:293.65px;top:229.96px;width:24px;text-align:center;white-space:nowrap;font-family:'Liberation Sans';font-size:8.2px;color:#d9d9d9;">12</div>
<div style="position:absolute;left:311.10px;top:229.96px;width:24px;text-align:center;white-space:nowrap;font-family:'Liberation Sans';font-size:8.2px;color:#d9d9d9;">13</div>
<div style="position:absolute;left:328.35px;top:229.96px;width:24px;text-align:center;white-space:nowrap;font-family:'Liberation Sans';font-size:8.2px;color:#2e2e2e;">14</div>
<div style="position:absolute;left:345.45px;top:229.96px;width:24px;text-align:center;white-space:nowrap;font-family:'Liberation Sans';font-size:8.2px;color:#2e2e2e;">15</div>
<div style="position:absolute;left:362.60px;top:229.96px;width:24px;text-align:center;white-space:nowrap;font-family:'Liberation Sans';font-size:8.2px;color:#2e2e2e;">16</div>
<div style="position:absolute;left:379.85px;top:229.96px;width:24px;text-align:center;white-space:nowrap;font-family:'Liberation Sans';font-size:8.2px;color:#2e2e2e;">17</div>
<div style="position:absolute;left:397.25px;top:229.96px;width:24px;text-align:center;white-space:nowrap;font-family:'Liberation Sans';font-size:8.2px;color:#2e2e2e;">18</div>
<div style="position:absolute;left:414.50px;top:229.96px;width:24px;text-align:center;white-space:nowrap;font-family:'Liberation Sans';font-size:8.2px;color:#d9d9d9;">19</div>
<div style="position:absolute;left:431.70px;top:229.96px;width:24px;text-align:center;white-space:nowrap;font-family:'Liberation Sans';font-size:8.2px;color:#d9d9d9;">20</div>
<div style="position:absolute;left:449.05px;top:229.96px;width:24px;text-align:center;white-space:nowrap;font-family:'Liberation Sans';font-size:8.2px;color:#2e2e2e;">21</div>
<div style="position:absolute;left:466.30px;top:229.96px;width:24px;text-align:center;white-space:nowrap;font-family:'Liberation Sans';font-size:8.2px;color:#2e2e2e;">22</div>
<div style="position:absolute;left:483.50px;top:229.96px;width:24px;text-align:center;white-space:nowrap;font-family:'Liberation Sans';font-size:8.2px;color:#2e2e2e;">23</div>
<div style="position:absolute;left:500.70px;top:229.96px;width:24px;text-align:center;white-space:nowrap;font-family:'Liberation Sans';font-size:8.2px;color:#2e2e2e;">24</div>
<div style="position:absolute;left:518.00px;top:229.96px;width:24px;text-align:center;white-space:nowrap;font-family:'Liberation Sans';font-size:8.2px;color:#2e2e2e;">25</div>
<div style="position:absolute;left:535.40px;top:229.96px;width:24px;text-align:center;white-space:nowrap;font-family:'Liberation Sans';font-size:8.2px;color:#d9d9d9;">26</div>
<div style="position:absolute;left:552.65px;top:229.96px;width:24px;text-align:center;white-space:nowrap;font-family:'Liberation Sans';font-size:8.2px;color:#d9d9d9;">27</div>
<div style="position:absolute;left:569.75px;top:229.96px;width:24px;text-align:center;white-space:nowrap;font-family:'Liberation Sans';font-size:8.2px;color:#2e2e2e;">28</div>
<div style="position:absolute;left:586.90px;top:229.96px;width:24px;text-align:center;white-space:nowrap;font-family:'Liberation Sans';font-size:8.2px;color:#2e2e2e;">29</div>
<div style="position:absolute;left:138.20px;top:242.67px;width:24px;text-align:center;white-space:nowrap;font-family:'Liberation Sans';font-size:8.2px;color:#74aa64;">9</div>
<div style="position:absolute;left:152.20px;top:242.67px;width:24px;text-align:center;white-space:nowrap;font-family:'Liberation Sans';font-size:8.2px;color:#74aa64;">9</div>
<div style="position:absolute;left:166.40px;top:242.67px;width:24px;text-align:center;white-space:nowrap;font-family:'Liberation Sans';font-size:8.2px;color:#74aa64;">9</div>
<div style="position:absolute;left:180.50px;top:242.67px;width:24px;text-align:center;white-space:nowrap;font-family:'Liberation Sans';font-size:8.2px;color:#74aa64;">9</div>
<div style="position:absolute;left:216.85px;top:242.67px;width:24px;text-align:center;white-space:nowrap;font-family:'Liberation Sans';font-size:8.2px;color:#74aa64;">9</div>
<div style="position:absolute;left:230.35px;top:242.67px;width:24px;text-align:center;white-space:nowrap;font-family:'Liberation Sans';font-size:8.2px;color:#74aa64;">9</div>
<div style="position:absolute;left:244.35px;top:242.67px;width:24px;text-align:center;white-space:nowrap;font-family:'Liberation Sans';font-size:8.2px;color:#74aa64;">9</div>
<div style="position:absolute;left:259.30px;top:242.67px;width:24px;text-align:center;white-space:nowrap;font-family:'Liberation Sans';font-size:8.2px;color:#74aa64;">9</div>
<div style="position:absolute;left:276.35px;top:242.67px;width:24px;text-align:center;white-space:nowrap;font-family:'Liberation Sans';font-size:8.2px;color:#74aa64;">9</div>
<div style="position:absolute;left:328.35px;top:242.67px;width:24px;text-align:center;white-space:nowrap;font-family:'Liberation Sans';font-size:8.2px;color:#74aa64;">9</div>
<div style="position:absolute;left:345.45px;top:242.67px;width:24px;text-align:center;white-space:nowrap;font-family:'Liberation Sans';font-size:8.2px;color:#74aa64;">9</div>
<div style="position:absolute;left:362.60px;top:242.67px;width:24px;text-align:center;white-space:nowrap;font-family:'Liberation Sans';font-size:8.2px;color:#74aa64;">9</div>
<div style="position:absolute;left:379.85px;top:242.67px;width:24px;text-align:center;white-space:nowrap;font-family:'Liberation Sans';font-size:8.2px;color:#74aa64;">9</div>
<div style="position:absolute;left:397.25px;top:242.67px;width:24px;text-align:center;white-space:nowrap;font-family:'Liberation Sans';font-size:8.2px;color:#74aa64;">9</div>
<div style="position:absolute;left:449.05px;top:242.67px;width:24px;text-align:center;white-space:nowrap;font-family:'Liberation Sans';font-size:8.2px;color:#74aa64;">9</div>
<div style="position:absolute;left:466.30px;top:242.67px;width:24px;text-align:center;white-space:nowrap;font-family:'Liberation Sans';font-size:8.2px;color:#74aa64;">9</div>
<div style="position:absolute;left:483.50px;top:242.67px;width:24px;text-align:center;white-space:nowrap;font-family:'Liberation Sans';font-size:8.2px;color:#74aa64;">9</div>
<div style="position:absolute;left:500.70px;top:242.67px;width:24px;text-align:center;white-space:nowrap;font-family:'Liberation Sans';font-size:8.2px;color:#74aa64;">9</div>
<div style="position:absolute;left:518.00px;top:242.67px;width:24px;text-align:center;white-space:nowrap;font-family:'Liberation Sans';font-size:8.2px;color:#74aa64;">9</div>
<div style="position:absolute;left:569.75px;top:242.67px;width:24px;text-align:center;white-space:nowrap;font-family:'Liberation Sans';font-size:8.2px;color:#74aa64;">9</div>
<div style="position:absolute;left:586.90px;top:242.67px;width:24px;text-align:center;white-space:nowrap;font-family:'Liberation Sans';font-size:8.2px;color:#74aa64;">9</div>
<div style="position:absolute;left:604.05px;top:242.67px;width:24px;text-align:center;white-space:nowrap;font-family:'Liberation Sans';font-size:8.2px;color:#74aa64;">9</div>
<div style="position:absolute;left:621.30px;top:242.67px;width:24px;text-align:center;white-space:nowrap;font-family:'Liberation Sans';font-size:8.2px;color:#74aa64;">9</div>
<div style="position:absolute;left:638.55px;top:242.67px;width:24px;text-align:center;white-space:nowrap;font-family:'Liberation Sans';font-size:8.2px;color:#74aa64;">9</div>
<div style="position:absolute;left:25.3px;top:265.49px;width:767.1px;height:12.70999999999998px;background:#dbe1f1"></div>
<div style="position:absolute;left:25.3px;top:264.94px;width:767.1px;height:1.1px;background:#b3bde2"></div>
<div style="position:absolute;left:25.3px;top:277.65px;width:767.1px;height:1.1px;background:#b3bde2"></div>
<div style="position:absolute;left:26.9px;top:255.38px;white-space:nowrap;font-family:'Liberation Serif';font-weight:700;font-size:9.2px;color:#1d2b5c;transform:scaleX(1.121);transform-origin:0 0">March</div>
<div style="position:absolute;left:70.7px;top:267.99px;white-space:nowrap;font-family:'Liberation Serif';font-weight:700;font-size:9px;color:#78a85a;transform:scaleX(1.06);transform-origin:0 0">Hr</div>
<div style="position:absolute;left:152.20px;top:255.38px;width:24px;text-align:center;white-space:nowrap;font-family:'Liberation Sans';font-size:8.2px;color:#2e2e2e;">1</div>
<div style="position:absolute;left:166.40px;top:255.38px;width:24px;text-align:center;white-space:nowrap;font-family:'Liberation Sans';font-size:8.2px;color:#2e2e2e;">2</div>
<div style="position:absolute;left:180.50px;top:255.38px;width:24px;text-align:center;white-space:nowrap;font-family:'Liberation Sans';font-size:8.2px;color:#2e2e2e;">3</div>
<div style="position:absolute;left:192.75px;top:255.38px;width:24px;text-align:center;white-space:nowrap;font-family:'Liberation Sans';font-size:8.2px;color:#d9d9d9;">4</div>
<div style="position:absolute;left:204.75px;top:255.38px;width:24px;text-align:center;white-space:nowrap;font-family:'Liberation Sans';font-size:8.2px;color:#d9d9d9;">5</div>
<div style="position:absolute;left:216.85px;top:255.38px;width:24px;text-align:center;white-space:nowrap;font-family:'Liberation Sans';font-size:8.2px;color:#2e2e2e;">6</div>
<div style="position:absolute;left:230.35px;top:255.38px;width:24px;text-align:center;white-space:nowrap;font-family:'Liberation Sans';font-size:8.2px;color:#2e2e2e;">7</div>
<div style="position:absolute;left:244.35px;top:255.38px;width:24px;text-align:center;white-space:nowrap;font-family:'Liberation Sans';font-size:8.2px;color:#2e2e2e;">8</div>
<div style="position:absolute;left:259.30px;top:255.38px;width:24px;text-align:center;white-space:nowrap;font-family:'Liberation Sans';font-size:8.2px;color:#2e2e2e;">9</div>
<div style="position:absolute;left:276.35px;top:255.38px;width:24px;text-align:center;white-space:nowrap;font-family:'Liberation Sans';font-size:8.2px;color:#2e2e2e;">10</div>
<div style="position:absolute;left:293.65px;top:255.38px;width:24px;text-align:center;white-space:nowrap;font-family:'Liberation Sans';font-size:8.2px;color:#d9d9d9;">11</div>
<div style="position:absolute;left:311.10px;top:255.38px;width:24px;text-align:center;white-space:nowrap;font-family:'Liberation Sans';font-size:8.2px;color:#d9d9d9;">12</div>
<div style="position:absolute;left:328.35px;top:255.38px;width:24px;text-align:center;white-space:nowrap;font-family:'Liberation Sans';font-size:8.2px;color:#2e2e2e;">13</div>
<div style="position:absolute;left:345.45px;top:255.38px;width:24px;text-align:center;white-space:nowrap;font-family:'Liberation Sans';font-size:8.2px;color:#2e2e2e;">14</div>
<div style="position:absolute;left:362.60px;top:255.38px;width:24px;text-align:center;white-space:nowrap;font-family:'Liberation Sans';font-size:8.2px;color:#2e2e2e;">15</div>
<div style="position:absolute;left:379.85px;top:255.38px;width:24px;text-align:center;white-space:nowrap;font-family:'Liberation Sans';font-size:8.2px;color:#2e2e2e;">16</div>
<div style="position:absolute;left:397.25px;top:255.38px;width:24px;text-align:center;white-space:nowrap;font-family:'Liberation Sans';font-size:8.2px;color:#2e2e2e;">17</div>
<div style="position:absolute;left:414.50px;top:255.38px;width:24px;text-align:center;white-space:nowrap;font-family:'Liberation Sans';font-size:8.2px;color:#d9d9d9;">18</div>
<div style="position:absolute;left:431.70px;top:255.38px;width:24px;text-align:center;white-space:nowrap;font-family:'Liberation Sans';font-size:8.2px;color:#d9d9d9;">19</div>
<div style="position:absolute;left:449.05px;top:255.38px;width:24px;text-align:center;white-space:nowrap;font-family:'Liberation Sans';font-size:8.2px;color:#2e2e2e;">20</div>
<div style="position:absolute;left:466.30px;top:255.38px;width:24px;text-align:center;white-space:nowrap;font-family:'Liberation Sans';font-size:8.2px;color:#2e2e2e;">21</div>
<div style="position:absolute;left:483.50px;top:255.38px;width:24px;text-align:center;white-space:nowrap;font-family:'Liberation Sans';font-size:8.2px;color:#2e2e2e;">22</div>
<div style="position:absolute;left:500.70px;top:255.38px;width:24px;text-align:center;white-space:nowrap;font-family:'Liberation Sans';font-size:8.2px;color:#2e2e2e;">23</div>
<div style="position:absolute;left:518.00px;top:255.38px;width:24px;text-align:center;white-space:nowrap;font-family:'Liberation Sans';font-size:8.2px;color:#2e2e2e;">24</div>
<div style="position:absolute;left:535.40px;top:255.38px;width:24px;text-align:center;white-space:nowrap;font-family:'Liberation Sans';font-size:8.2px;color:#d9d9d9;">25</div>
<div style="position:absolute;left:552.65px;top:255.38px;width:24px;text-align:center;white-space:nowrap;font-family:'Liberation Sans';font-size:8.2px;color:#d9d9d9;">26</div>
<div style="position:absolute;left:569.75px;top:255.38px;width:24px;text-align:center;white-space:nowrap;font-family:'Liberation Sans';font-size:8.2px;color:#2e2e2e;">27</div>
<div style="position:absolute;left:586.90px;top:255.38px;width:24px;text-align:center;white-space:nowrap;font-family:'Liberation Sans';font-size:8.2px;color:#2e2e2e;">28</div>
<div style="position:absolute;left:604.05px;top:255.38px;width:24px;text-align:center;white-space:nowrap;font-family:'Liberation Sans';font-size:8.2px;color:#2e2e2e;">29</div>
<div style="position:absolute;left:621.30px;top:255.38px;width:24px;text-align:center;white-space:nowrap;font-family:'Liberation Sans';font-size:8.2px;color:#2e2e2e;">30</div>
<div style="position:absolute;left:638.55px;top:255.38px;width:24px;text-align:center;white-space:nowrap;font-family:'Liberation Sans';font-size:8.2px;color:#2e2e2e;">31</div>
<div style="position:absolute;left:152.20px;top:268.09000000000003px;width:24px;text-align:center;white-space:nowrap;font-family:'Liberation Sans';font-size:8.2px;color:#74aa64;">9</div>
<div style="position:absolute;left:166.40px;top:268.09000000000003px;width:24px;text-align:center;white-space:nowrap;font-family:'Liberation Sans';font-size:8.2px;color:#74aa64;">9</div>
<div style="position:absolute;left:180.50px;top:268.09000000000003px;width:24px;text-align:center;white-space:nowrap;font-family:'Liberation Sans';font-size:8.2px;color:#74aa64;">9</div>
<div style="position:absolute;left:216.85px;top:268.09000000000003px;width:24px;text-align:center;white-space:nowrap;font-family:'Liberation Sans';font-size:8.2px;color:#74aa64;">9</div>
<div style="position:absolute;left:230.35px;top:268.09000000000003px;width:24px;text-align:center;white-space:nowrap;font-family:'Liberation Sans';font-size:8.2px;color:#74aa64;">9</div>
<div style="position:absolute;left:244.35px;top:268.09000000000003px;width:24px;text-align:center;white-space:nowrap;font-family:'Liberation Sans';font-size:8.2px;color:#74aa64;">9</div>
<div style="position:absolute;left:259.30px;top:268.09000000000003px;width:24px;text-align:center;white-space:nowrap;font-family:'Liberation Sans';font-size:8.2px;color:#74aa64;">9</div>
<div style="position:absolute;left:276.35px;top:268.09000000000003px;width:24px;text-align:center;white-space:nowrap;font-family:'Liberation Sans';font-size:8.2px;color:#74aa64;">9</div>
<div style="position:absolute;left:328.35px;top:268.09000000000003px;width:24px;text-align:center;white-space:nowrap;font-family:'Liberation Sans';font-size:8.2px;color:#74aa64;">9</div>
<div style="position:absolute;left:345.45px;top:268.09000000000003px;width:24px;text-align:center;white-space:nowrap;font-family:'Liberation Sans';font-size:8.2px;color:#74aa64;">9</div>
<div style="position:absolute;left:362.60px;top:268.09000000000003px;width:24px;text-align:center;white-space:nowrap;font-family:'Liberation Sans';font-size:8.2px;color:#74aa64;">9</div>
<div style="position:absolute;left:379.85px;top:268.09000000000003px;width:24px;text-align:center;white-space:nowrap;font-family:'Liberation Sans';font-size:8.2px;color:#74aa64;">9</div>
<div style="position:absolute;left:397.25px;top:268.09000000000003px;width:24px;text-align:center;white-space:nowrap;font-family:'Liberation Sans';font-size:8.2px;color:#74aa64;">9</div>
<div style="position:absolute;left:449.05px;top:268.09000000000003px;width:24px;text-align:center;white-space:nowrap;font-family:'Liberation Sans';font-size:8.2px;color:#74aa64;">9</div>
<div style="position:absolute;left:466.30px;top:268.09000000000003px;width:24px;text-align:center;white-space:nowrap;font-family:'Liberation Sans';font-size:8.2px;color:#74aa64;">9</div>
<div style="position:absolute;left:483.50px;top:268.09000000000003px;width:24px;text-align:center;white-space:nowrap;font-family:'Liberation Sans';font-size:8.2px;color:#74aa64;">9</div>
<div style="position:absolute;left:500.70px;top:268.09000000000003px;width:24px;text-align:center;white-space:nowrap;font-family:'Liberation Sans';font-size:8.2px;color:#74aa64;">9</div>
<div style="position:absolute;left:518.00px;top:268.09000000000003px;width:24px;text-align:center;white-space:nowrap;font-family:'Liberation Sans';font-size:8.2px;color:#74aa64;">9</div>
<div style="position:absolute;left:569.75px;top:268.09000000000003px;width:24px;text-align:center;white-space:nowrap;font-family:'Liberation Sans';font-size:8.2px;color:#74aa64;">9</div>
<div style="position:absolute;left:586.90px;top:268.09000000000003px;width:24px;text-align:center;white-space:nowrap;font-family:'Liberation Sans';font-size:8.2px;color:#74aa64;">9</div>
<div style="position:absolute;left:604.05px;top:268.09000000000003px;width:24px;text-align:center;white-space:nowrap;font-family:'Liberation Sans';font-size:8.2px;color:#74aa64;">9</div>
<div style="position:absolute;left:621.30px;top:268.09000000000003px;width:24px;text-align:center;white-space:nowrap;font-family:'Liberation Sans';font-size:8.2px;color:#74aa64;">9</div>
<div style="position:absolute;left:638.55px;top:268.09000000000003px;width:24px;text-align:center;white-space:nowrap;font-family:'Liberation Sans';font-size:8.2px;color:#74aa64;">9</div>
<div style="position:absolute;left:25.3px;top:290.90999999999997px;width:767.1px;height:12.710000000000036px;background:#dbe1f1"></div>
<div style="position:absolute;left:25.3px;top:290.35999999999996px;width:767.1px;height:1.1px;background:#b3bde2"></div>
<div style="position:absolute;left:25.3px;top:303.07px;width:767.1px;height:1.1px;background:#b3bde2"></div>
<div style="position:absolute;left:26.9px;top:280.80px;white-space:nowrap;font-family:'Liberation Serif';font-weight:700;font-size:9.2px;color:#1d2b5c;transform:scaleX(1.168);transform-origin:0 0">April</div>
<div style="position:absolute;left:70.7px;top:293.41px;white-space:nowrap;font-family:'Liberation Serif';font-weight:700;font-size:9px;color:#78a85a;transform:scaleX(1.06);transform-origin:0 0">Hr</div>
<div style="position:absolute;left:192.75px;top:280.8px;width:24px;text-align:center;white-space:nowrap;font-family:'Liberation Sans';font-size:8.2px;color:#d9d9d9;">1</div>
<div style="position:absolute;left:204.75px;top:280.8px;width:24px;text-align:center;white-space:nowrap;font-family:'Liberation Sans';font-size:8.2px;color:#d9d9d9;">2</div>
<div style="position:absolute;left:216.85px;top:280.8px;width:24px;text-align:center;white-space:nowrap;font-family:'Liberation Sans';font-size:8.2px;color:#2e2e2e;">3</div>
<div style="position:absolute;left:230.35px;top:280.8px;width:24px;text-align:center;white-space:nowrap;font-family:'Liberation Sans';font-size:8.2px;color:#2e2e2e;">4</div>
<div style="position:absolute;left:244.35px;top:280.8px;width:24px;text-align:center;white-space:nowrap;font-family:'Liberation Sans';font-size:8.2px;color:#2e2e2e;">5</div>
<div style="position:absolute;left:259.30px;top:280.8px;width:24px;text-align:center;white-space:nowrap;font-family:'Liberation Sans';font-size:8.2px;color:#2e2e2e;">6</div>
<div style="position:absolute;left:276.35px;top:280.8px;width:24px;text-align:center;white-space:nowrap;font-family:'Liberation Sans';font-size:8.2px;color:#2e2e2e;">7</div>
<div style="position:absolute;left:293.65px;top:280.8px;width:24px;text-align:center;white-space:nowrap;font-family:'Liberation Sans';font-size:8.2px;color:#d9d9d9;">8</div>
<div style="position:absolute;left:311.10px;top:280.8px;width:24px;text-align:center;white-space:nowrap;font-family:'Liberation Sans';font-size:8.2px;color:#d9d9d9;">9</div>
<div style="position:absolute;left:328.35px;top:280.8px;width:24px;text-align:center;white-space:nowrap;font-family:'Liberation Sans';font-size:8.2px;color:#2e2e2e;">10</div>
<div style="position:absolute;left:345.45px;top:280.8px;width:24px;text-align:center;white-space:nowrap;font-family:'Liberation Sans';font-size:8.2px;color:#2e2e2e;">11</div>
<div style="position:absolute;left:362.60px;top:280.8px;width:24px;text-align:center;white-space:nowrap;font-family:'Liberation Sans';font-size:8.2px;color:#2e2e2e;">12</div>
<div style="position:absolute;left:379.85px;top:280.8px;width:24px;text-align:center;white-space:nowrap;font-family:'Liberation Sans';font-size:8.2px;color:#2e2e2e;">13</div>
<div style="position:absolute;left:397.25px;top:280.8px;width:24px;text-align:center;white-space:nowrap;font-family:'Liberation Sans';font-size:8.2px;color:#2e2e2e;">14</div>
<div style="position:absolute;left:414.50px;top:280.8px;width:24px;text-align:center;white-space:nowrap;font-family:'Liberation Sans';font-size:8.2px;color:#d9d9d9;">15</div>
<div style="position:absolute;left:431.70px;top:280.8px;width:24px;text-align:center;white-space:nowrap;font-family:'Liberation Sans';font-size:8.2px;color:#d9d9d9;">16</div>
<div style="position:absolute;left:449.05px;top:280.8px;width:24px;text-align:center;white-space:nowrap;font-family:'Liberation Sans';font-size:8.2px;color:#2e2e2e;">17</div>
<div style="position:absolute;left:466.30px;top:280.8px;width:24px;text-align:center;white-space:nowrap;font-family:'Liberation Sans';font-size:8.2px;color:#2e2e2e;">18</div>
<div style="position:absolute;left:483.50px;top:280.8px;width:24px;text-align:center;white-space:nowrap;font-family:'Liberation Sans';font-size:8.2px;color:#2e2e2e;">19</div>
<div style="position:absolute;left:500.70px;top:280.8px;width:24px;text-align:center;white-space:nowrap;font-family:'Liberation Sans';font-size:8.2px;color:#2e2e2e;">20</div>
<div style="position:absolute;left:518.00px;top:280.8px;width:24px;text-align:center;white-space:nowrap;font-family:'Liberation Sans';font-size:8.2px;color:#2e2e2e;">21</div>
<div style="position:absolute;left:535.40px;top:280.8px;width:24px;text-align:center;white-space:nowrap;font-family:'Liberation Sans';font-size:8.2px;color:#d9d9d9;">22</div>
<div style="position:absolute;left:552.65px;top:280.8px;width:24px;text-align:center;white-space:nowrap;font-family:'Liberation Sans';font-size:8.2px;color:#d9d9d9;">23</div>
<div style="position:absolute;left:569.75px;top:280.8px;width:24px;text-align:center;white-space:nowrap;font-family:'Liberation Sans';font-size:8.2px;color:#2e2e2e;">24</div>
<div style="position:absolute;left:586.90px;top:280.8px;width:24px;text-align:center;white-space:nowrap;font-family:'Liberation Sans';font-size:8.2px;color:#2e2e2e;">25</div>
<div style="position:absolute;left:604.05px;top:280.8px;width:24px;text-align:center;white-space:nowrap;font-family:'Liberation Sans';font-size:8.2px;color:#2e2e2e;">26</div>
<div style="position:absolute;left:621.30px;top:280.8px;width:24px;text-align:center;white-space:nowrap;font-family:'Liberation Sans';font-size:8.2px;color:#2e2e2e;">27</div>
<div style="position:absolute;left:638.55px;top:280.8px;width:24px;text-align:center;white-space:nowrap;font-family:'Liberation Sans';font-size:8.2px;color:#2e2e2e;">28</div>
<div style="position:absolute;left:655.80px;top:280.8px;width:24px;text-align:center;white-space:nowrap;font-family:'Liberation Sans';font-size:8.2px;color:#d9d9d9;">29</div>
<div style="position:absolute;left:673.20px;top:280.8px;width:24px;text-align:center;white-space:nowrap;font-family:'Liberation Sans';font-size:8.2px;color:#d9d9d9;">30</div>
<div style="position:absolute;left:216.85px;top:293.51px;width:24px;text-align:center;white-space:nowrap;font-family:'Liberation Sans';font-size:8.2px;color:#74aa64;">9</div>
<div style="position:absolute;left:230.35px;top:293.51px;width:24px;text-align:center;white-space:nowrap;font-family:'Liberation Sans';font-size:8.2px;color:#74aa64;">9</div>
<div style="position:absolute;left:244.35px;top:293.51px;width:24px;text-align:center;white-space:nowrap;font-family:'Liberation Sans';font-size:8.2px;color:#74aa64;">9</div>
<div style="position:absolute;left:259.30px;top:293.51px;width:24px;text-align:center;white-space:nowrap;font-family:'Liberation Sans';font-size:8.2px;color:#74aa64;">9</div>
<div style="position:absolute;left:276.35px;top:293.51px;width:24px;text-align:center;white-space:nowrap;font-family:'Liberation Sans';font-size:8.2px;color:#74aa64;">9</div>
<div style="position:absolute;left:328.35px;top:293.51px;width:24px;text-align:center;white-space:nowrap;font-family:'Liberation Sans';font-size:8.2px;color:#74aa64;">9</div>
<div style="position:absolute;left:345.45px;top:293.51px;width:24px;text-align:center;white-space:nowrap;font-family:'Liberation Sans';font-size:8.2px;color:#74aa64;">9</div>
<div style="position:absolute;left:362.60px;top:293.51px;width:24px;text-align:center;white-space:nowrap;font-family:'Liberation Sans';font-size:8.2px;color:#74aa64;">9</div>
<div style="position:absolute;left:379.85px;top:293.51px;width:24px;text-align:center;white-space:nowrap;font-family:'Liberation Sans';font-size:8.2px;color:#74aa64;">9</div>
<div style="position:absolute;left:397.25px;top:293.51px;width:24px;text-align:center;white-space:nowrap;font-family:'Liberation Sans';font-size:8.2px;color:#74aa64;">9</div>
<div style="position:absolute;left:449.05px;top:293.51px;width:24px;text-align:center;white-space:nowrap;font-family:'Liberation Sans';font-size:8.2px;color:#74aa64;">9</div>
<div style="position:absolute;left:466.30px;top:293.51px;width:24px;text-align:center;white-space:nowrap;font-family:'Liberation Sans';font-size:8.2px;color:#74aa64;">9</div>
<div style="position:absolute;left:483.50px;top:293.51px;width:24px;text-align:center;white-space:nowrap;font-family:'Liberation Sans';font-size:8.2px;color:#74aa64;">9</div>
<div style="position:absolute;left:500.70px;top:293.51px;width:24px;text-align:center;white-space:nowrap;font-family:'Liberation Sans';font-size:8.2px;color:#74aa64;">9</div>
<div style="position:absolute;left:518.00px;top:293.51px;width:24px;text-align:center;white-space:nowrap;font-family:'Liberation Sans';font-size:8.2px;color:#74aa64;">9</div>
<div style="position:absolute;left:569.75px;top:293.51px;width:24px;text-align:center;white-space:nowrap;font-family:'Liberation Sans';font-size:8.2px;color:#74aa64;">9</div>
<div style="position:absolute;left:586.90px;top:293.51px;width:24px;text-align:center;white-space:nowrap;font-family:'Liberation Sans';font-size:8.2px;color:#74aa64;">9</div>
<div style="position:absolute;left:604.05px;top:293.51px;width:24px;text-align:center;white-space:nowrap;font-family:'Liberation Sans';font-size:8.2px;color:#74aa64;">9</div>
<div style="position:absolute;left:621.30px;top:293.51px;width:24px;text-align:center;white-space:nowrap;font-family:'Liberation Sans';font-size:8.2px;color:#74aa64;">9</div>
<div style="position:absolute;left:638.55px;top:293.51px;width:24px;text-align:center;white-space:nowrap;font-family:'Liberation Sans';font-size:8.2px;color:#74aa64;">9</div>
<div style="position:absolute;left:25.3px;top:316.33000000000004px;width:767.1px;height:12.70999999999998px;background:#dbe1f1"></div>
<div style="position:absolute;left:25.3px;top:315.78000000000003px;width:767.1px;height:1.1px;background:#b3bde2"></div>
<div style="position:absolute;left:25.3px;top:328.49px;width:767.1px;height:1.1px;background:#b3bde2"></div>
<div style="position:absolute;left:26.9px;top:306.22px;white-space:nowrap;font-family:'Liberation Serif';font-weight:700;font-size:9.2px;color:#1d2b5c;transform:scaleX(1.107);transform-origin:0 0">May</div>
<div style="position:absolute;left:70.7px;top:318.83px;white-space:nowrap;font-family:'Liberation Serif';font-weight:700;font-size:9px;color:#78a85a;transform:scaleX(1.06);transform-origin:0 0">Hr</div>
<div style="position:absolute;left:204.75px;top:306.22px;width:24px;text-align:center;white-space:nowrap;font-family:'Liberation Sans';font-size:8.2px;color:#d9d9d9;">1</div>
<div style="position:absolute;left:216.85px;top:306.22px;width:24px;text-align:center;white-space:nowrap;font-family:'Liberation Sans';font-size:8.2px;color:#2e2e2e;">2</div>
<div style="position:absolute;left:230.35px;top:306.22px;width:24px;text-align:center;white-space:nowrap;font-family:'Liberation Sans';font-size:8.2px;color:#2e2e2e;">3</div>
<div style="position:absolute;left:244.35px;top:306.22px;width:24px;text-align:center;white-space:nowrap;font-family:'Liberation Sans';font-size:8.2px;color:#2e2e2e;">4</div>
<div style="position:absolute;left:259.30px;top:306.22px;width:24px;text-align:center;white-space:nowrap;font-family:'Liberation Sans';font-size:8.2px;color:#2e2e2e;">5</div>
<div style="position:absolute;left:276.35px;top:306.22px;width:24px;text-align:center;white-space:nowrap;font-family:'Liberation Sans';font-size:8.2px;color:#2e2e2e;">6</div>
<div style="position:absolute;left:293.65px;top:306.22px;width:24px;text-align:center;white-space:nowrap;font-family:'Liberation Sans';font-size:8.2px;color:#d9d9d9;">7</div>
<div style="position:absolute;left:311.10px;top:306.22px;width:24px;text-align:center;white-space:nowrap;font-family:'Liberation Sans';font-size:8.2px;color:#d9d9d9;">8</div>
<div style="position:absolute;left:328.35px;top:306.22px;width:24px;text-align:center;white-space:nowrap;font-family:'Liberation Sans';font-size:8.2px;color:#2e2e2e;">9</div>
<div style="position:absolute;left:345.45px;top:306.22px;width:24px;text-align:center;white-space:nowrap;font-family:'Liberation Sans';font-size:8.2px;color:#2e2e2e;">10</div>
<div style="position:absolute;left:362.60px;top:306.22px;width:24px;text-align:center;white-space:nowrap;font-family:'Liberation Sans';font-size:8.2px;color:#2e2e2e;">11</div>
<div style="position:absolute;left:379.85px;top:306.22px;width:24px;text-align:center;white-space:nowrap;font-family:'Liberation Sans';font-size:8.2px;color:#2e2e2e;">12</div>
<div style="position:absolute;left:397.25px;top:306.22px;width:24px;text-align:center;white-space:nowrap;font-family:'Liberation Sans';font-size:8.2px;color:#2e2e2e;">13</div>
<div style="position:absolute;left:414.50px;top:306.22px;width:24px;text-align:center;white-space:nowrap;font-family:'Liberation Sans';font-size:8.2px;color:#d9d9d9;">14</div>
<div style="position:absolute;left:431.70px;top:306.22px;width:24px;text-align:center;white-space:nowrap;font-family:'Liberation Sans';font-size:8.2px;color:#d9d9d9;">15</div>
<div style="position:absolute;left:449.05px;top:306.22px;width:24px;text-align:center;white-space:nowrap;font-family:'Liberation Sans';font-size:8.2px;color:#2e2e2e;">16</div>
<div style="position:absolute;left:466.30px;top:306.22px;width:24px;text-align:center;white-space:nowrap;font-family:'Liberation Sans';font-size:8.2px;color:#2e2e2e;">17</div>
<div style="position:absolute;left:483.50px;top:306.22px;width:24px;text-align:center;white-space:nowrap;font-family:'Liberation Sans';font-size:8.2px;color:#2e2e2e;">18</div>
<div style="position:absolute;left:500.70px;top:306.22px;width:24px;text-align:center;white-space:nowrap;font-family:'Liberation Sans';font-size:8.2px;color:#2e2e2e;">19</div>
<div style="position:absolute;left:518.00px;top:306.22px;width:24px;text-align:center;white-space:nowrap;font-family:'Liberation Sans';font-size:8.2px;color:#2e2e2e;">20</div>
<div style="position:absolute;left:535.40px;top:306.22px;width:24px;text-align:center;white-space:nowrap;font-family:'Liberation Sans';font-size:8.2px;color:#d9d9d9;">21</div>
<div style="position:absolute;left:552.65px;top:306.22px;width:24px;text-align:center;white-space:nowrap;font-family:'Liberation Sans';font-size:8.2px;color:#d9d9d9;">22</div>
<div style="position:absolute;left:569.75px;top:306.22px;width:24px;text-align:center;white-space:nowrap;font-family:'Liberation Sans';font-size:8.2px;color:#2e2e2e;">23</div>
<div style="position:absolute;left:586.90px;top:306.22px;width:24px;text-align:center;white-space:nowrap;font-family:'Liberation Sans';font-size:8.2px;color:#2e2e2e;">24</div>
<div style="position:absolute;left:604.05px;top:306.22px;width:24px;text-align:center;white-space:nowrap;font-family:'Liberation Sans';font-size:8.2px;color:#2e2e2e;">25</div>
<div style="position:absolute;left:621.30px;top:306.22px;width:24px;text-align:center;white-space:nowrap;font-family:'Liberation Sans';font-size:8.2px;color:#2e2e2e;">26</div>
<div style="position:absolute;left:638.55px;top:306.22px;width:24px;text-align:center;white-space:nowrap;font-family:'Liberation Sans';font-size:8.2px;color:#2e2e2e;">27</div>
<div style="position:absolute;left:655.80px;top:306.22px;width:24px;text-align:center;white-space:nowrap;font-family:'Liberation Sans';font-size:8.2px;color:#d9d9d9;">28</div>
<div style="position:absolute;left:673.20px;top:306.22px;width:24px;text-align:center;white-space:nowrap;font-family:'Liberation Sans';font-size:8.2px;color:#d9d9d9;">29</div>
<div style="position:absolute;left:690.45px;top:306.22px;width:24px;text-align:center;white-space:nowrap;font-family:'Liberation Sans';font-size:8.2px;color:#2e2e2e;">30</div>
<div style="position:absolute;left:707.35px;top:306.22px;width:24px;text-align:center;white-space:nowrap;font-family:'Liberation Sans';font-size:8.2px;color:#2e2e2e;">31</div>
<div style="position:absolute;left:216.85px;top:318.93000000000006px;width:24px;text-align:center;white-space:nowrap;font-family:'Liberation Sans';font-size:8.2px;color:#74aa64;">9</div>
<div style="position:absolute;left:230.35px;top:318.93000000000006px;width:24px;text-align:center;white-space:nowrap;font-family:'Liberation Sans';font-size:8.2px;color:#74aa64;">9</div>
<div style="position:absolute;left:244.35px;top:318.93000000000006px;width:24px;text-align:center;white-space:nowrap;font-family:'Liberation Sans';font-size:8.2px;color:#74aa64;">9</div>
<div style="position:absolute;left:259.30px;top:318.93000000000006px;width:24px;text-align:center;white-space:nowrap;font-family:'Liberation Sans';font-size:8.2px;color:#74aa64;">9</div>
<div style="position:absolute;left:276.35px;top:318.93000000000006px;width:24px;text-align:center;white-space:nowrap;font-family:'Liberation Sans';font-size:8.2px;color:#74aa64;">9</div>
<div style="position:absolute;left:328.35px;top:318.93000000000006px;width:24px;text-align:center;white-space:nowrap;font-family:'Liberation Sans';font-size:8.2px;color:#74aa64;">9</div>
<div style="position:absolute;left:345.45px;top:318.93000000000006px;width:24px;text-align:center;white-space:nowrap;font-family:'Liberation Sans';font-size:8.2px;color:#74aa64;">9</div>
<div style="position:absolute;left:362.60px;top:318.93000000000006px;width:24px;text-align:center;white-space:nowrap;font-family:'Liberation Sans';font-size:8.2px;color:#74aa64;">9</div>
<div style="position:absolute;left:379.85px;top:318.93000000000006px;width:24px;text-align:center;white-space:nowrap;font-family:'Liberation Sans';font-size:8.2px;color:#74aa64;">9</div>
<div style="position:absolute;left:397.25px;top:318.93000000000006px;width:24px;text-align:center;white-space:nowrap;font-family:'Liberation Sans';font-size:8.2px;color:#74aa64;">9</div>
<div style="position:absolute;left:449.05px;top:318.93000000000006px;width:24px;text-align:center;white-space:nowrap;font-family:'Liberation Sans';font-size:8.2px;color:#74aa64;">9</div>
<div style="position:absolute;left:466.30px;top:318.93000000000006px;width:24px;text-align:center;white-space:nowrap;font-family:'Liberation Sans';font-size:8.2px;color:#74aa64;">9</div>
<div style="position:absolute;left:483.50px;top:318.93000000000006px;width:24px;text-align:center;white-space:nowrap;font-family:'Liberation Sans';font-size:8.2px;color:#74aa64;">9</div>
<div style="position:absolute;left:500.70px;top:318.93000000000006px;width:24px;text-align:center;white-space:nowrap;font-family:'Liberation Sans';font-size:8.2px;color:#74aa64;">9</div>
<div style="position:absolute;left:518.00px;top:318.93000000000006px;width:24px;text-align:center;white-space:nowrap;font-family:'Liberation Sans';font-size:8.2px;color:#74aa64;">9</div>
<div style="position:absolute;left:569.75px;top:318.93000000000006px;width:24px;text-align:center;white-space:nowrap;font-family:'Liberation Sans';font-size:8.2px;color:#74aa64;">9</div>
<div style="position:absolute;left:586.90px;top:318.93000000000006px;width:24px;text-align:center;white-space:nowrap;font-family:'Liberation Sans';font-size:8.2px;color:#74aa64;">9</div>
<div style="position:absolute;left:604.05px;top:318.93000000000006px;width:24px;text-align:center;white-space:nowrap;font-family:'Liberation Sans';font-size:8.2px;color:#74aa64;">9</div>
<div style="position:absolute;left:621.30px;top:318.93000000000006px;width:24px;text-align:center;white-space:nowrap;font-family:'Liberation Sans';font-size:8.2px;color:#74aa64;">9</div>
<div style="position:absolute;left:638.55px;top:318.93000000000006px;width:24px;text-align:center;white-space:nowrap;font-family:'Liberation Sans';font-size:8.2px;color:#74aa64;">9</div>
<div style="position:absolute;left:690.45px;top:318.93000000000006px;width:24px;text-align:center;white-space:nowrap;font-family:'Liberation Sans';font-size:8.2px;color:#74aa64;">9</div>
<div style="position:absolute;left:707.35px;top:318.93000000000006px;width:24px;text-align:center;white-space:nowrap;font-family:'Liberation Sans';font-size:8.2px;color:#74aa64;">9</div>
<div style="position:absolute;left:25.3px;top:341.75px;width:767.1px;height:12.710000000000036px;background:#dbe1f1"></div>
<div style="position:absolute;left:25.3px;top:341.2px;width:767.1px;height:1.1px;background:#b3bde2"></div>
<div style="position:absolute;left:25.3px;top:353.91px;width:767.1px;height:1.1px;background:#b3bde2"></div>
<div style="position:absolute;left:26.9px;top:331.64px;white-space:nowrap;font-family:'Liberation Serif';font-weight:700;font-size:9.2px;color:#1d2b5c;transform:scaleX(1.294);transform-origin:0 0">June</div>
<div style="position:absolute;left:70.7px;top:344.25px;white-space:nowrap;font-family:'Liberation Serif';font-weight:700;font-size:9px;color:#78a85a;transform:scaleX(1.06);transform-origin:0 0">Hr</div>
<div style="position:absolute;left:166.40px;top:331.64000000000004px;width:24px;text-align:center;white-space:nowrap;font-family:'Liberation Sans';font-size:8.2px;color:#2e2e2e;">1</div>
<div style="position:absolute;left:180.50px;top:331.64000000000004px;width:24px;text-align:center;white-space:nowrap;font-family:'Liberation Sans';font-size:8.2px;color:#2e2e2e;">2</div>
<div style="position:absolute;left:192.75px;top:331.64000000000004px;width:24px;text-align:center;white-space:nowrap;font-family:'Liberation Sans';font-size:8.2px;color:#d9d9d9;">3</div>
<div style="position:absolute;left:204.75px;top:331.64000000000004px;width:24px;text-align:center;white-space:nowrap;font-family:'Liberation Sans';font-size:8.2px;color:#d9d9d9;">4</div>
<div style="position:absolute;left:216.85px;top:331.64000000000004px;width:24px;text-align:center;white-space:nowrap;font-family:'Liberation Sans';font-size:8.2px;color:#2e2e2e;">5</div>
<div style="position:absolute;left:230.35px;top:331.64000000000004px;width:24px;text-align:center;white-space:nowrap;font-family:'Liberation Sans';font-size:8.2px;color:#2e2e2e;">6</div>
<div style="position:absolute;left:244.35px;top:331.64000000000004px;width:24px;text-align:center;white-space:nowrap;font-family:'Liberation Sans';font-size:8.2px;color:#2e2e2e;">7</div>
<div style="position:absolute;left:259.30px;top:331.64000000000004px;width:24px;text-align:center;white-space:nowrap;font-family:'Liberation Sans';font-size:8.2px;color:#2e2e2e;">8</div>
<div style="position:absolute;left:276.35px;top:331.64000000000004px;width:24px;text-align:center;white-space:nowrap;font-family:'Liberation Sans';font-size:8.2px;color:#2e2e2e;">9</div>
<div style="position:absolute;left:293.65px;top:331.64000000000004px;width:24px;text-align:center;white-space:nowrap;font-family:'Liberation Sans';font-size:8.2px;color:#d9d9d9;">10</div>
<div style="position:absolute;left:311.10px;top:331.64000000000004px;width:24px;text-align:center;white-space:nowrap;font-family:'Liberation Sans';font-size:8.2px;color:#d9d9d9;">11</div>
<div style="position:absolute;left:328.35px;top:331.64000000000004px;width:24px;text-align:center;white-space:nowrap;font-family:'Liberation Sans';font-size:8.2px;color:#2e2e2e;">12</div>
<div style="position:absolute;left:345.45px;top:331.64000000000004px;width:24px;text-align:center;white-space:nowrap;font-family:'Liberation Sans';font-size:8.2px;color:#2e2e2e;">13</div>
<div style="position:absolute;left:362.60px;top:331.64000000000004px;width:24px;text-align:center;white-space:nowrap;font-family:'Liberation Sans';font-size:8.2px;color:#2e2e2e;">14</div>
<div style="position:absolute;left:379.85px;top:331.64000000000004px;width:24px;text-align:center;white-space:nowrap;font-family:'Liberation Sans';font-size:8.2px;color:#2e2e2e;">15</div>
<div style="position:absolute;left:397.25px;top:331.64000000000004px;width:24px;text-align:center;white-space:nowrap;font-family:'Liberation Sans';font-size:8.2px;color:#2e2e2e;">16</div>
<div style="position:absolute;left:414.50px;top:331.64000000000004px;width:24px;text-align:center;white-space:nowrap;font-family:'Liberation Sans';font-size:8.2px;color:#d9d9d9;">17</div>
<div style="position:absolute;left:431.70px;top:331.64000000000004px;width:24px;text-align:center;white-space:nowrap;font-family:'Liberation Sans';font-size:8.2px;color:#d9d9d9;">18</div>
<div style="position:absolute;left:449.05px;top:331.64000000000004px;width:24px;text-align:center;white-space:nowrap;font-family:'Liberation Sans';font-size:8.2px;color:#2e2e2e;">19</div>
<div style="position:absolute;left:466.30px;top:331.64000000000004px;width:24px;text-align:center;white-space:nowrap;font-family:'Liberation Sans';font-size:8.2px;color:#2e2e2e;">20</div>
<div style="position:absolute;left:483.50px;top:331.64000000000004px;width:24px;text-align:center;white-space:nowrap;font-family:'Liberation Sans';font-size:8.2px;color:#2e2e2e;">21</div>
<div style="position:absolute;left:500.70px;top:331.64000000000004px;width:24px;text-align:center;white-space:nowrap;font-family:'Liberation Sans';font-size:8.2px;color:#2e2e2e;">22</div>
<div style="position:absolute;left:518.00px;top:331.64000000000004px;width:24px;text-align:center;white-space:nowrap;font-family:'Liberation Sans';font-size:8.2px;color:#2e2e2e;">23</div>
<div style="position:absolute;left:535.40px;top:331.64000000000004px;width:24px;text-align:center;white-space:nowrap;font-family:'Liberation Sans';font-size:8.2px;color:#d9d9d9;">24</div>
<div style="position:absolute;left:552.65px;top:331.64000000000004px;width:24px;text-align:center;white-space:nowrap;font-family:'Liberation Sans';font-size:8.2px;color:#d9d9d9;">25</div>
<div style="position:absolute;left:569.75px;top:331.64000000000004px;width:24px;text-align:center;white-space:nowrap;font-family:'Liberation Sans';font-size:8.2px;color:#2e2e2e;">26</div>
<div style="position:absolute;left:586.90px;top:331.64000000000004px;width:24px;text-align:center;white-space:nowrap;font-family:'Liberation Sans';font-size:8.2px;color:#2e2e2e;">27</div>
<div style="position:absolute;left:604.05px;top:331.64000000000004px;width:24px;text-align:center;white-space:nowrap;font-family:'Liberation Sans';font-size:8.2px;color:#2e2e2e;">28</div>
<div style="position:absolute;left:621.30px;top:331.64000000000004px;width:24px;text-align:center;white-space:nowrap;font-family:'Liberation Sans';font-size:8.2px;color:#2e2e2e;">29</div>
<div style="position:absolute;left:638.55px;top:331.64000000000004px;width:24px;text-align:center;white-space:nowrap;font-family:'Liberation Sans';font-size:8.2px;color:#2e2e2e;">30</div>
<div style="position:absolute;left:166.40px;top:344.35px;width:24px;text-align:center;white-space:nowrap;font-family:'Liberation Sans';font-size:8.2px;color:#74aa64;">9</div>
<div style="position:absolute;left:180.50px;top:344.35px;width:24px;text-align:center;white-space:nowrap;font-family:'Liberation Sans';font-size:8.2px;color:#74aa64;">9</div>
<div style="position:absolute;left:216.85px;top:344.35px;width:24px;text-align:center;white-space:nowrap;font-family:'Liberation Sans';font-size:8.2px;color:#74aa64;">9</div>
<div style="position:absolute;left:230.35px;top:344.35px;width:24px;text-align:center;white-space:nowrap;font-family:'Liberation Sans';font-size:8.2px;color:#e69470;">6</div>
<div style="position:absolute;left:244.35px;top:344.35px;width:24px;text-align:center;white-space:nowrap;font-family:'Liberation Sans';font-size:8.2px;color:#e69470;">6</div>
<div style="position:absolute;left:259.30px;top:344.35px;width:24px;text-align:center;white-space:nowrap;font-family:'Liberation Sans';font-size:8.2px;color:#e69470;">6</div>
<div style="position:absolute;left:276.35px;top:344.35px;width:24px;text-align:center;white-space:nowrap;font-family:'Liberation Sans';font-size:8.2px;color:#e69470;">6</div>
<div style="position:absolute;left:328.35px;top:344.35px;width:24px;text-align:center;white-space:nowrap;font-family:'Liberation Sans';font-size:8.2px;color:#e69470;">6</div>
<div style="position:absolute;left:345.45px;top:344.35px;width:24px;text-align:center;white-space:nowrap;font-family:'Liberation Sans';font-size:8.2px;color:#e69470;">6</div>
<div style="position:absolute;left:362.60px;top:344.35px;width:24px;text-align:center;white-space:nowrap;font-family:'Liberation Sans';font-size:8.2px;color:#e69470;">6</div>
<div style="position:absolute;left:379.85px;top:344.35px;width:24px;text-align:center;white-space:nowrap;font-family:'Liberation Sans';font-size:8.2px;color:#e69470;">6</div>
<div style="position:absolute;left:397.25px;top:344.35px;width:24px;text-align:center;white-space:nowrap;font-family:'Liberation Sans';font-size:8.2px;color:#e69470;">6</div>
<div style="position:absolute;left:449.05px;top:344.35px;width:24px;text-align:center;white-space:nowrap;font-family:'Liberation Sans';font-size:8.2px;color:#e69470;">6</div>
<div style="position:absolute;left:466.30px;top:344.35px;width:24px;text-align:center;white-space:nowrap;font-family:'Liberation Sans';font-size:8.2px;color:#e69470;">6</div>
<div style="position:absolute;left:483.50px;top:344.35px;width:24px;text-align:center;white-space:nowrap;font-family:'Liberation Sans';font-size:8.2px;color:#e69470;">6</div>
<div style="position:absolute;left:500.70px;top:344.35px;width:24px;text-align:center;white-space:nowrap;font-family:'Liberation Sans';font-size:8.2px;color:#e69470;">6</div>
<div style="position:absolute;left:518.00px;top:344.35px;width:24px;text-align:center;white-space:nowrap;font-family:'Liberation Sans';font-size:8.2px;color:#e69470;">6</div>
<div style="position:absolute;left:569.75px;top:344.35px;width:24px;text-align:center;white-space:nowrap;font-family:'Liberation Sans';font-size:8.2px;color:#e69470;">6</div>
<div style="position:absolute;left:586.90px;top:344.35px;width:24px;text-align:center;white-space:nowrap;font-family:'Liberation Sans';font-size:8.2px;color:#e69470;">6</div>
<div style="position:absolute;left:604.05px;top:344.35px;width:24px;text-align:center;white-space:nowrap;font-family:'Liberation Sans';font-size:8.2px;color:#e69470;">6</div>
<div style="position:absolute;left:621.30px;top:344.35px;width:24px;text-align:center;white-space:nowrap;font-family:'Liberation Sans';font-size:8.2px;color:#e69470;">6</div>
<div style="position:absolute;left:638.55px;top:344.35px;width:24px;text-align:center;white-space:nowrap;font-family:'Liberation Sans';font-size:8.2px;color:#e69470;">6</div>
<div style="position:absolute;left:25.3px;top:367.17px;width:767.1px;height:12.70999999999998px;background:#dbe1f1"></div>
<div style="position:absolute;left:25.3px;top:366.62px;width:767.1px;height:1.1px;background:#b3bde2"></div>
<div style="position:absolute;left:25.3px;top:379.33px;width:767.1px;height:1.1px;background:#b3bde2"></div>
<div style="position:absolute;left:26.9px;top:357.06px;white-space:nowrap;font-family:'Liberation Serif';font-weight:700;font-size:9.2px;color:#1d2b5c;transform:scaleX(1.297);transform-origin:0 0">July</div>
<div style="position:absolute;left:70.7px;top:369.67px;white-space:nowrap;font-family:'Liberation Serif';font-weight:700;font-size:9px;color:#78a85a;transform:scaleX(1.06);transform-origin:0 0">Hr</div>
<div style="position:absolute;left:192.75px;top:357.06000000000006px;width:24px;text-align:center;white-space:nowrap;font-family:'Liberation Sans';font-size:8.2px;color:#d9d9d9;">1</div>
<div style="position:absolute;left:204.75px;top:357.06000000000006px;width:24px;text-align:center;white-space:nowrap;font-family:'Liberation Sans';font-size:8.2px;color:#d9d9d9;">2</div>
<div style="position:absolute;left:216.85px;top:357.06000000000006px;width:24px;text-align:center;white-space:nowrap;font-family:'Liberation Sans';font-size:8.2px;color:#2e2e2e;">3</div>
<div style="position:absolute;left:230.35px;top:357.06000000000006px;width:24px;text-align:center;white-space:nowrap;font-family:'Liberation Sans';font-size:8.2px;color:#2e2e2e;">4</div>
<div style="position:absolute;left:244.35px;top:357.06000000000006px;width:24px;text-align:center;white-space:nowrap;font-family:'Liberation Sans';font-size:8.2px;color:#2e2e2e;">5</div>
<div style="position:absolute;left:259.30px;top:357.06000000000006px;width:24px;text-align:center;white-space:nowrap;font-family:'Liberation Sans';font-size:8.2px;color:#2e2e2e;">6</div>
<div style="position:absolute;left:276.35px;top:357.06000000000006px;width:24px;text-align:center;white-space:nowrap;font-family:'Liberation Sans';font-size:8.2px;color:#2e2e2e;">7</div>
<div style="position:absolute;left:293.65px;top:357.06000000000006px;width:24px;text-align:center;white-space:nowrap;font-family:'Liberation Sans';font-size:8.2px;color:#d9d9d9;">8</div>
<div style="position:absolute;left:311.10px;top:357.06000000000006px;width:24px;text-align:center;white-space:nowrap;font-family:'Liberation Sans';font-size:8.2px;color:#d9d9d9;">9</div>
<div style="position:absolute;left:328.35px;top:357.06000000000006px;width:24px;text-align:center;white-space:nowrap;font-family:'Liberation Sans';font-size:8.2px;color:#2e2e2e;">10</div>
<div style="position:absolute;left:345.45px;top:357.06000000000006px;width:24px;text-align:center;white-space:nowrap;font-family:'Liberation Sans';font-size:8.2px;color:#2e2e2e;">11</div>
<div style="position:absolute;left:362.60px;top:357.06000000000006px;width:24px;text-align:center;white-space:nowrap;font-family:'Liberation Sans';font-size:8.2px;color:#2e2e2e;">12</div>
<div style="position:absolute;left:379.85px;top:357.06000000000006px;width:24px;text-align:center;white-space:nowrap;font-family:'Liberation Sans';font-size:8.2px;color:#2e2e2e;">13</div>
<div style="position:absolute;left:397.25px;top:357.06000000000006px;width:24px;text-align:center;white-space:nowrap;font-family:'Liberation Sans';font-size:8.2px;color:#2e2e2e;">14</div>
<div style="position:absolute;left:414.50px;top:357.06000000000006px;width:24px;text-align:center;white-space:nowrap;font-family:'Liberation Sans';font-size:8.2px;color:#d9d9d9;">15</div>
<div style="position:absolute;left:431.70px;top:357.06000000000006px;width:24px;text-align:center;white-space:nowrap;font-family:'Liberation Sans';font-size:8.2px;color:#d9d9d9;">16</div>
<div style="position:absolute;left:449.05px;top:357.06000000000006px;width:24px;text-align:center;white-space:nowrap;font-family:'Liberation Sans';font-size:8.2px;color:#2e2e2e;">17</div>
<div style="position:absolute;left:466.30px;top:357.06000000000006px;width:24px;text-align:center;white-space:nowrap;font-family:'Liberation Sans';font-size:8.2px;color:#2e2e2e;">18</div>
<div style="position:absolute;left:483.50px;top:357.06000000000006px;width:24px;text-align:center;white-space:nowrap;font-family:'Liberation Sans';font-size:8.2px;color:#2e2e2e;">19</div>
<div style="position:absolute;left:500.70px;top:357.06000000000006px;width:24px;text-align:center;white-space:nowrap;font-family:'Liberation Sans';font-size:8.2px;color:#2e2e2e;">20</div>
<div style="position:absolute;left:518.00px;top:357.06000000000006px;width:24px;text-align:center;white-space:nowrap;font-family:'Liberation Sans';font-size:8.2px;color:#2e2e2e;">21</div>
<div style="position:absolute;left:535.40px;top:357.06000000000006px;width:24px;text-align:center;white-space:nowrap;font-family:'Liberation Sans';font-size:8.2px;color:#d9d9d9;">22</div>
<div style="position:absolute;left:552.65px;top:357.06000000000006px;width:24px;text-align:center;white-space:nowrap;font-family:'Liberation Sans';font-size:8.2px;color:#d9d9d9;">23</div>
<div style="position:absolute;left:569.75px;top:357.06000000000006px;width:24px;text-align:center;white-space:nowrap;font-family:'Liberation Sans';font-size:8.2px;color:#2e2e2e;">24</div>
<div style="position:absolute;left:586.90px;top:357.06000000000006px;width:24px;text-align:center;white-space:nowrap;font-family:'Liberation Sans';font-size:8.2px;color:#2e2e2e;">25</div>
<div style="position:absolute;left:604.05px;top:357.06000000000006px;width:24px;text-align:center;white-space:nowrap;font-family:'Liberation Sans';font-size:8.2px;color:#2e2e2e;">26</div>
<div style="position:absolute;left:621.30px;top:357.06000000000006px;width:24px;text-align:center;white-space:nowrap;font-family:'Liberation Sans';font-size:8.2px;color:#2e2e2e;">27</div>
<div style="position:absolute;left:638.55px;top:357.06000000000006px;width:24px;text-align:center;white-space:nowrap;font-family:'Liberation Sans';font-size:8.2px;color:#2e2e2e;">28</div>
<div style="position:absolute;left:655.80px;top:357.06000000000006px;width:24px;text-align:center;white-space:nowrap;font-family:'Liberation Sans';font-size:8.2px;color:#d9d9d9;">29</div>
<div style="position:absolute;left:673.20px;top:357.06000000000006px;width:24px;text-align:center;white-space:nowrap;font-family:'Liberation Sans';font-size:8.2px;color:#d9d9d9;">30</div>
<div style="position:absolute;left:690.45px;top:357.06000000000006px;width:24px;text-align:center;white-space:nowrap;font-family:'Liberation Sans';font-size:8.2px;color:#2e2e2e;">31</div>
<div style="position:absolute;left:216.85px;top:369.77000000000004px;width:24px;text-align:center;white-space:nowrap;font-family:'Liberation Sans';font-size:8.2px;color:#e69470;">6</div>
<div style="position:absolute;left:230.35px;top:369.77000000000004px;width:24px;text-align:center;white-space:nowrap;font-family:'Liberation Sans';font-size:8.2px;color:#e69470;">6</div>
<div style="position:absolute;left:244.35px;top:369.77000000000004px;width:24px;text-align:center;white-space:nowrap;font-family:'Liberation Sans';font-size:8.2px;color:#e69470;">6</div>
<div style="position:absolute;left:328.35px;top:369.77000000000004px;width:24px;text-align:center;white-space:nowrap;font-family:'Liberation Sans';font-size:8.2px;color:#74aa64;">9</div>
<div style="position:absolute;left:345.45px;top:369.77000000000004px;width:24px;text-align:center;white-space:nowrap;font-family:'Liberation Sans';font-size:8.2px;color:#74aa64;">9</div>
<div style="position:absolute;left:362.60px;top:369.77000000000004px;width:24px;text-align:center;white-space:nowrap;font-family:'Liberation Sans';font-size:8.2px;color:#74aa64;">9</div>
<div style="position:absolute;left:379.85px;top:369.77000000000004px;width:24px;text-align:center;white-space:nowrap;font-family:'Liberation Sans';font-size:8.2px;color:#74aa64;">9</div>
<div style="position:absolute;left:397.25px;top:369.77000000000004px;width:24px;text-align:center;white-space:nowrap;font-family:'Liberation Sans';font-size:8.2px;color:#74aa64;">9</div>
<div style="position:absolute;left:449.05px;top:369.77000000000004px;width:24px;text-align:center;white-space:nowrap;font-family:'Liberation Sans';font-size:8.2px;color:#74aa64;">9</div>
<div style="position:absolute;left:466.30px;top:369.77000000000004px;width:24px;text-align:center;white-space:nowrap;font-family:'Liberation Sans';font-size:8.2px;color:#74aa64;">9</div>
<div style="position:absolute;left:483.50px;top:369.77000000000004px;width:24px;text-align:center;white-space:nowrap;font-family:'Liberation Sans';font-size:8.2px;color:#74aa64;">9</div>
<div style="position:absolute;left:500.70px;top:369.77000000000004px;width:24px;text-align:center;white-space:nowrap;font-family:'Liberation Sans';font-size:8.2px;color:#74aa64;">9</div>
<div style="position:absolute;left:518.00px;top:369.77000000000004px;width:24px;text-align:center;white-space:nowrap;font-family:'Liberation Sans';font-size:8.2px;color:#74aa64;">9</div>
<div style="position:absolute;left:569.75px;top:369.77000000000004px;width:24px;text-align:center;white-space:nowrap;font-family:'Liberation Sans';font-size:8.2px;color:#74aa64;">9</div>
<div style="position:absolute;left:586.90px;top:369.77000000000004px;width:24px;text-align:center;white-space:nowrap;font-family:'Liberation Sans';font-size:8.2px;color:#74aa64;">9</div>
<div style="position:absolute;left:604.05px;top:369.77000000000004px;width:24px;text-align:center;white-space:nowrap;font-family:'Liberation Sans';font-size:8.2px;color:#74aa64;">9</div>
<div style="position:absolute;left:621.30px;top:369.77000000000004px;width:24px;text-align:center;white-space:nowrap;font-family:'Liberation Sans';font-size:8.2px;color:#74aa64;">9</div>
<div style="position:absolute;left:638.55px;top:369.77000000000004px;width:24px;text-align:center;white-space:nowrap;font-family:'Liberation Sans';font-size:8.2px;color:#74aa64;">9</div>
<div style="position:absolute;left:690.45px;top:369.77000000000004px;width:24px;text-align:center;white-space:nowrap;font-family:'Liberation Sans';font-size:8.2px;color:#74aa64;">9</div>
<div style="position:absolute;left:25.3px;top:392.59000000000003px;width:767.1px;height:12.70999999999998px;background:#dbe1f1"></div>
<div style="position:absolute;left:25.3px;top:392.04px;width:767.1px;height:1.1px;background:#b3bde2"></div>
<div style="position:absolute;left:25.3px;top:404.75px;width:767.1px;height:1.1px;background:#b3bde2"></div>
<div style="position:absolute;left:26.9px;top:382.48px;white-space:nowrap;font-family:'Liberation Serif';font-weight:700;font-size:9.2px;color:#1d2b5c;transform:scaleX(1.233);transform-origin:0 0">August</div>
<div style="position:absolute;left:70.7px;top:395.09px;white-space:nowrap;font-family:'Liberation Serif';font-weight:700;font-size:9px;color:#78a85a;transform:scaleX(1.06);transform-origin:0 0">Hr</div>
<div style="position:absolute;left:138.20px;top:382.48px;width:24px;text-align:center;white-space:nowrap;font-family:'Liberation Sans';font-size:8.2px;color:#2e2e2e;">1</div>
<div style="position:absolute;left:152.20px;top:382.48px;width:24px;text-align:center;white-space:nowrap;font-family:'Liberation Sans';font-size:8.2px;color:#2e2e2e;">2</div>
<div style="position:absolute;left:166.40px;top:382.48px;width:24px;text-align:center;white-space:nowrap;font-family:'Liberation Sans';font-size:8.2px;color:#2e2e2e;">3</div>
<div style="position:absolute;left:180.50px;top:382.48px;width:24px;text-align:center;white-space:nowrap;font-family:'Liberation Sans';font-size:8.2px;color:#2e2e2e;">4</div>
<div style="position:absolute;left:192.75px;top:382.48px;width:24px;text-align:center;white-space:nowrap;font-family:'Liberation Sans';font-size:8.2px;color:#d9d9d9;">5</div>
<div style="position:absolute;left:204.75px;top:382.48px;width:24px;text-align:center;white-space:nowrap;font-family:'Liberation Sans';font-size:8.2px;color:#d9d9d9;">6</div>
<div style="position:absolute;left:216.85px;top:382.48px;width:24px;text-align:center;white-space:nowrap;font-family:'Liberation Sans';font-size:8.2px;color:#2e2e2e;">7</div>
<div style="position:absolute;left:230.35px;top:382.48px;width:24px;text-align:center;white-space:nowrap;font-family:'Liberation Sans';font-size:8.2px;color:#2e2e2e;">8</div>
<div style="position:absolute;left:244.35px;top:382.48px;width:24px;text-align:center;white-space:nowrap;font-family:'Liberation Sans';font-size:8.2px;color:#2e2e2e;">9</div>
<div style="position:absolute;left:259.30px;top:382.48px;width:24px;text-align:center;white-space:nowrap;font-family:'Liberation Sans';font-size:8.2px;color:#2e2e2e;">10</div>
<div style="position:absolute;left:276.35px;top:382.48px;width:24px;text-align:center;white-space:nowrap;font-family:'Liberation Sans';font-size:8.2px;color:#2e2e2e;">11</div>
<div style="position:absolute;left:293.65px;top:382.48px;width:24px;text-align:center;white-space:nowrap;font-family:'Liberation Sans';font-size:8.2px;color:#d9d9d9;">12</div>
<div style="position:absolute;left:311.10px;top:382.48px;width:24px;text-align:center;white-space:nowrap;font-family:'Liberation Sans';font-size:8.2px;color:#d9d9d9;">13</div>
<div style="position:absolute;left:328.35px;top:382.48px;width:24px;text-align:center;white-space:nowrap;font-family:'Liberation Sans';font-size:8.2px;color:#2e2e2e;">14</div>
<div style="position:absolute;left:345.45px;top:382.48px;width:24px;text-align:center;white-space:nowrap;font-family:'Liberation Sans';font-size:8.2px;color:#2e2e2e;">15</div>
<div style="position:absolute;left:362.60px;top:382.48px;width:24px;text-align:center;white-space:nowrap;font-family:'Liberation Sans';font-size:8.2px;color:#2e2e2e;">16</div>
<div style="position:absolute;left:379.85px;top:382.48px;width:24px;text-align:center;white-space:nowrap;font-family:'Liberation Sans';font-size:8.2px;color:#2e2e2e;">17</div>
<div style="position:absolute;left:397.25px;top:382.48px;width:24px;text-align:center;white-space:nowrap;font-family:'Liberation Sans';font-size:8.2px;color:#2e2e2e;">18</div>
<div style="position:absolute;left:414.50px;top:382.48px;width:24px;text-align:center;white-space:nowrap;font-family:'Liberation Sans';font-size:8.2px;color:#d9d9d9;">19</div>
<div style="position:absolute;left:431.70px;top:382.48px;width:24px;text-align:center;white-space:nowrap;font-family:'Liberation Sans';font-size:8.2px;color:#d9d9d9;">20</div>
<div style="position:absolute;left:449.05px;top:382.48px;width:24px;text-align:center;white-space:nowrap;font-family:'Liberation Sans';font-size:8.2px;color:#2e2e2e;">21</div>
<div style="position:absolute;left:466.30px;top:382.48px;width:24px;text-align:center;white-space:nowrap;font-family:'Liberation Sans';font-size:8.2px;color:#2e2e2e;">22</div>
<div style="position:absolute;left:483.50px;top:382.48px;width:24px;text-align:center;white-space:nowrap;font-family:'Liberation Sans';font-size:8.2px;color:#2e2e2e;">23</div>
<div style="position:absolute;left:500.70px;top:382.48px;width:24px;text-align:center;white-space:nowrap;font-family:'Liberation Sans';font-size:8.2px;color:#2e2e2e;">24</div>
<div style="position:absolute;left:518.00px;top:382.48px;width:24px;text-align:center;white-space:nowrap;font-family:'Liberation Sans';font-size:8.2px;color:#2e2e2e;">25</div>
<div style="position:absolute;left:535.40px;top:382.48px;width:24px;text-align:center;white-space:nowrap;font-family:'Liberation Sans';font-size:8.2px;color:#d9d9d9;">26</div>
<div style="position:absolute;left:552.65px;top:382.48px;width:24px;text-align:center;white-space:nowrap;font-family:'Liberation Sans';font-size:8.2px;color:#d9d9d9;">27</div>
<div style="position:absolute;left:569.75px;top:382.48px;width:24px;text-align:center;white-space:nowrap;font-family:'Liberation Sans';font-size:8.2px;color:#2e2e2e;">28</div>
<div style="position:absolute;left:586.90px;top:382.48px;width:24px;text-align:center;white-space:nowrap;font-family:'Liberation Sans';font-size:8.2px;color:#2e2e2e;">29</div>
<div style="position:absolute;left:604.05px;top:382.48px;width:24px;text-align:center;white-space:nowrap;font-family:'Liberation Sans';font-size:8.2px;color:#2e2e2e;">30</div>
<div style="position:absolute;left:621.30px;top:382.48px;width:24px;text-align:center;white-space:nowrap;font-family:'Liberation Sans';font-size:8.2px;color:#2e2e2e;">31</div>
<div style="position:absolute;left:138.20px;top:395.19000000000005px;width:24px;text-align:center;white-space:nowrap;font-family:'Liberation Sans';font-size:8.2px;color:#74aa64;">9</div>
<div style="position:absolute;left:152.20px;top:395.19000000000005px;width:24px;text-align:center;white-space:nowrap;font-family:'Liberation Sans';font-size:8.2px;color:#74aa64;">9</div>
<div style="position:absolute;left:166.40px;top:395.19000000000005px;width:24px;text-align:center;white-space:nowrap;font-family:'Liberation Sans';font-size:8.2px;color:#74aa64;">9</div>
<div style="position:absolute;left:180.50px;top:395.19000000000005px;width:24px;text-align:center;white-space:nowrap;font-family:'Liberation Sans';font-size:8.2px;color:#74aa64;">9</div>
<div style="position:absolute;left:216.85px;top:395.19000000000005px;width:24px;text-align:center;white-space:nowrap;font-family:'Liberation Sans';font-size:8.2px;color:#74aa64;">9</div>
<div style="position:absolute;left:230.35px;top:395.19000000000005px;width:24px;text-align:center;white-space:nowrap;font-family:'Liberation Sans';font-size:8.2px;color:#74aa64;">9</div>
<div style="position:absolute;left:244.35px;top:395.19000000000005px;width:24px;text-align:center;white-space:nowrap;font-family:'Liberation Sans';font-size:8.2px;color:#74aa64;">9</div>
<div style="position:absolute;left:259.30px;top:395.19000000000005px;width:24px;text-align:center;white-space:nowrap;font-family:'Liberation Sans';font-size:8.2px;color:#74aa64;">9</div>
<div style="position:absolute;left:276.35px;top:395.19000000000005px;width:24px;text-align:center;white-space:nowrap;font-family:'Liberation Sans';font-size:8.2px;color:#74aa64;">9</div>
<div style="position:absolute;left:328.35px;top:395.19000000000005px;width:24px;text-align:center;white-space:nowrap;font-family:'Liberation Sans';font-size:8.2px;color:#74aa64;">9</div>
<div style="position:absolute;left:345.45px;top:395.19000000000005px;width:24px;text-align:center;white-space:nowrap;font-family:'Liberation Sans';font-size:8.2px;color:#74aa64;">9</div>
<div style="position:absolute;left:362.60px;top:395.19000000000005px;width:24px;text-align:center;white-space:nowrap;font-family:'Liberation Sans';font-size:8.2px;color:#74aa64;">9</div>
<div style="position:absolute;left:379.85px;top:395.19000000000005px;width:24px;text-align:center;white-space:nowrap;font-family:'Liberation Sans';font-size:8.2px;color:#74aa64;">9</div>
<div style="position:absolute;left:397.25px;top:395.19000000000005px;width:24px;text-align:center;white-space:nowrap;font-family:'Liberation Sans';font-size:8.2px;color:#74aa64;">9</div>
<div style="position:absolute;left:449.05px;top:395.19000000000005px;width:24px;text-align:center;white-space:nowrap;font-family:'Liberation Sans';font-size:8.2px;color:#74aa64;">9</div>
<div style="position:absolute;left:466.30px;top:395.19000000000005px;width:24px;text-align:center;white-space:nowrap;font-family:'Liberation Sans';font-size:8.2px;color:#74aa64;">9</div>
<div style="position:absolute;left:483.50px;top:395.19000000000005px;width:24px;text-align:center;white-space:nowrap;font-family:'Liberation Sans';font-size:8.2px;color:#74aa64;">9</div>
<div style="position:absolute;left:500.70px;top:395.19000000000005px;width:24px;text-align:center;white-space:nowrap;font-family:'Liberation Sans';font-size:8.2px;color:#74aa64;">9</div>
<div style="position:absolute;left:518.00px;top:395.19000000000005px;width:24px;text-align:center;white-space:nowrap;font-family:'Liberation Sans';font-size:8.2px;color:#74aa64;">9</div>
<div style="position:absolute;left:569.75px;top:395.19000000000005px;width:24px;text-align:center;white-space:nowrap;font-family:'Liberation Sans';font-size:8.2px;color:#74aa64;">9</div>
<div style="position:absolute;left:586.90px;top:395.19000000000005px;width:24px;text-align:center;white-space:nowrap;font-family:'Liberation Sans';font-size:8.2px;color:#74aa64;">9</div>
<div style="position:absolute;left:604.05px;top:395.19000000000005px;width:24px;text-align:center;white-space:nowrap;font-family:'Liberation Sans';font-size:8.2px;color:#74aa64;">9</div>
<div style="position:absolute;left:621.30px;top:395.19000000000005px;width:24px;text-align:center;white-space:nowrap;font-family:'Liberation Sans';font-size:8.2px;color:#74aa64;">9</div>
<div style="position:absolute;left:638.55px;top:395.19000000000005px;width:24px;text-align:center;white-space:nowrap;font-family:'Liberation Sans';font-size:8.2px;color:#74aa64;">9</div>
<div style="position:absolute;left:25.3px;top:418.01px;width:767.1px;height:12.710000000000036px;background:#dbe1f1"></div>
<div style="position:absolute;left:25.3px;top:417.46px;width:767.1px;height:1.1px;background:#b3bde2"></div>
<div style="position:absolute;left:25.3px;top:430.17px;width:767.1px;height:1.1px;background:#b3bde2"></div>
<div style="position:absolute;left:26.9px;top:407.90px;white-space:nowrap;font-family:'Liberation Serif';font-weight:700;font-size:9.2px;color:#1d2b5c;transform:scaleX(1.207);transform-origin:0 0">September</div>
<div style="position:absolute;left:70.7px;top:420.51px;white-space:nowrap;font-family:'Liberation Serif';font-weight:700;font-size:9px;color:#78a85a;transform:scaleX(1.06);transform-origin:0 0">Hr</div>
<div style="position:absolute;left:180.50px;top:407.90000000000003px;width:24px;text-align:center;white-space:nowrap;font-family:'Liberation Sans';font-size:8.2px;color:#2e2e2e;">1</div>
<div style="position:absolute;left:192.75px;top:407.90000000000003px;width:24px;text-align:center;white-space:nowrap;font-family:'Liberation Sans';font-size:8.2px;color:#d9d9d9;">2</div>
<div style="position:absolute;left:204.75px;top:407.90000000000003px;width:24px;text-align:center;white-space:nowrap;font-family:'Liberation Sans';font-size:8.2px;color:#d9d9d9;">3</div>
<div style="position:absolute;left:216.85px;top:407.90000000000003px;width:24px;text-align:center;white-space:nowrap;font-family:'Liberation Sans';font-size:8.2px;color:#2e2e2e;">4</div>
<div style="position:absolute;left:230.35px;top:407.90000000000003px;width:24px;text-align:center;white-space:nowrap;font-family:'Liberation Sans';font-size:8.2px;color:#2e2e2e;">5</div>
<div style="position:absolute;left:244.35px;top:407.90000000000003px;width:24px;text-align:center;white-space:nowrap;font-family:'Liberation Sans';font-size:8.2px;color:#2e2e2e;">6</div>
<div style="position:absolute;left:259.30px;top:407.90000000000003px;width:24px;text-align:center;white-space:nowrap;font-family:'Liberation Sans';font-size:8.2px;color:#2e2e2e;">7</div>
<div style="position:absolute;left:276.35px;top:407.90000000000003px;width:24px;text-align:center;white-space:nowrap;font-family:'Liberation Sans';font-size:8.2px;color:#2e2e2e;">8</div>
<div style="position:absolute;left:293.65px;top:407.90000000000003px;width:24px;text-align:center;white-space:nowrap;font-family:'Liberation Sans';font-size:8.2px;color:#d9d9d9;">9</div>
<div style="position:absolute;left:311.10px;top:407.90000000000003px;width:24px;text-align:center;white-space:nowrap;font-family:'Liberation Sans';font-size:8.2px;color:#d9d9d9;">10</div>
<div style="position:absolute;left:328.35px;top:407.90000000000003px;width:24px;text-align:center;white-space:nowrap;font-family:'Liberation Sans';font-size:8.2px;color:#2e2e2e;">11</div>
<div style="position:absolute;left:345.45px;top:407.90000000000003px;width:24px;text-align:center;white-space:nowrap;font-family:'Liberation Sans';font-size:8.2px;color:#2e2e2e;">12</div>
<div style="position:absolute;left:362.60px;top:407.90000000000003px;width:24px;text-align:center;white-space:nowrap;font-family:'Liberation Sans';font-size:8.2px;color:#2e2e2e;">13</div>
<div style="position:absolute;left:379.85px;top:407.90000000000003px;width:24px;text-align:center;white-space:nowrap;font-family:'Liberation Sans';font-size:8.2px;color:#2e2e2e;">14</div>
<div style="position:absolute;left:397.25px;top:407.90000000000003px;width:24px;text-align:center;white-space:nowrap;font-family:'Liberation Sans';font-size:8.2px;color:#2e2e2e;">15</div>
<div style="position:absolute;left:414.50px;top:407.90000000000003px;width:24px;text-align:center;white-space:nowrap;font-family:'Liberation Sans';font-size:8.2px;color:#d9d9d9;">16</div>
<div style="position:absolute;left:431.70px;top:407.90000000000003px;width:24px;text-align:center;white-space:nowrap;font-family:'Liberation Sans';font-size:8.2px;color:#d9d9d9;">17</div>
<div style="position:absolute;left:449.05px;top:407.90000000000003px;width:24px;text-align:center;white-space:nowrap;font-family:'Liberation Sans';font-size:8.2px;color:#2e2e2e;">18</div>
<div style="position:absolute;left:466.30px;top:407.90000000000003px;width:24px;text-align:center;white-space:nowrap;font-family:'Liberation Sans';font-size:8.2px;color:#2e2e2e;">19</div>
<div style="position:absolute;left:483.50px;top:407.90000000000003px;width:24px;text-align:center;white-space:nowrap;font-family:'Liberation Sans';font-size:8.2px;color:#2e2e2e;">20</div>
<div style="position:absolute;left:500.70px;top:407.90000000000003px;width:24px;text-align:center;white-space:nowrap;font-family:'Liberation Sans';font-size:8.2px;color:#2e2e2e;">21</div>
<div style="position:absolute;left:518.00px;top:407.90000000000003px;width:24px;text-align:center;white-space:nowrap;font-family:'Liberation Sans';font-size:8.2px;color:#2e2e2e;">22</div>
<div style="position:absolute;left:535.40px;top:407.90000000000003px;width:24px;text-align:center;white-space:nowrap;font-family:'Liberation Sans';font-size:8.2px;color:#d9d9d9;">23</div>
<div style="position:absolute;left:552.65px;top:407.90000000000003px;width:24px;text-align:center;white-space:nowrap;font-family:'Liberation Sans';font-size:8.2px;color:#d9d9d9;">24</div>
<div style="position:absolute;left:569.75px;top:407.90000000000003px;width:24px;text-align:center;white-space:nowrap;font-family:'Liberation Sans';font-size:8.2px;color:#2e2e2e;">25</div>
<div style="position:absolute;left:586.90px;top:407.90000000000003px;width:24px;text-align:center;white-space:nowrap;font-family:'Liberation Sans';font-size:8.2px;color:#2e2e2e;">26</div>
<div style="position:absolute;left:604.05px;top:407.90000000000003px;width:24px;text-align:center;white-space:nowrap;font-family:'Liberation Sans';font-size:8.2px;color:#2e2e2e;">27</div>
<div style="position:absolute;left:621.30px;top:407.90000000000003px;width:24px;text-align:center;white-space:nowrap;font-family:'Liberation Sans';font-size:8.2px;color:#2e2e2e;">28</div>
<div style="position:absolute;left:638.55px;top:407.90000000000003px;width:24px;text-align:center;white-space:nowrap;font-family:'Liberation Sans';font-size:8.2px;color:#2e2e2e;">29</div>
<div style="position:absolute;left:655.80px;top:407.90000000000003px;width:24px;text-align:center;white-space:nowrap;font-family:'Liberation Sans';font-size:8.2px;color:#d9d9d9;">30</div>
<div style="position:absolute;left:180.50px;top:420.61px;width:24px;text-align:center;white-space:nowrap;font-family:'Liberation Sans';font-size:8.2px;color:#74aa64;">9</div>
<div style="position:absolute;left:216.85px;top:420.61px;width:24px;text-align:center;white-space:nowrap;font-family:'Liberation Sans';font-size:8.2px;color:#74aa64;">9</div>
<div style="position:absolute;left:230.35px;top:420.61px;width:24px;text-align:center;white-space:nowrap;font-family:'Liberation Sans';font-size:8.2px;color:#74aa64;">9</div>
<div style="position:absolute;left:244.35px;top:420.61px;width:24px;text-align:center;white-space:nowrap;font-family:'Liberation Sans';font-size:8.2px;color:#74aa64;">9</div>
<div style="position:absolute;left:259.30px;top:420.61px;width:24px;text-align:center;white-space:nowrap;font-family:'Liberation Sans';font-size:8.2px;color:#74aa64;">9</div>
<div style="position:absolute;left:276.35px;top:420.61px;width:24px;text-align:center;white-space:nowrap;font-family:'Liberation Sans';font-size:8.2px;color:#74aa64;">9</div>
<div style="position:absolute;left:449.05px;top:420.61px;width:24px;text-align:center;white-space:nowrap;font-family:'Liberation Sans';font-size:8.2px;color:#74aa64;">8</div>
<div style="position:absolute;left:466.30px;top:420.61px;width:24px;text-align:center;white-space:nowrap;font-family:'Liberation Sans';font-size:8.2px;color:#74aa64;">8</div>
<div style="position:absolute;left:483.50px;top:420.61px;width:24px;text-align:center;white-space:nowrap;font-family:'Liberation Sans';font-size:8.2px;color:#74aa64;">8</div>
<div style="position:absolute;left:500.70px;top:420.61px;width:24px;text-align:center;white-space:nowrap;font-family:'Liberation Sans';font-size:8.2px;color:#74aa64;">8</div>
<div style="position:absolute;left:518.00px;top:420.61px;width:24px;text-align:center;white-space:nowrap;font-family:'Liberation Sans';font-size:8.2px;color:#74aa64;">8</div>
<div style="position:absolute;left:569.75px;top:420.61px;width:24px;text-align:center;white-space:nowrap;font-family:'Liberation Sans';font-size:8.2px;color:#74aa64;">8</div>
<div style="position:absolute;left:586.90px;top:420.61px;width:24px;text-align:center;white-space:nowrap;font-family:'Liberation Sans';font-size:8.2px;color:#74aa64;">8</div>
<div style="position:absolute;left:604.05px;top:420.61px;width:24px;text-align:center;white-space:nowrap;font-family:'Liberation Sans';font-size:8.2px;color:#74aa64;">8</div>
<div style="position:absolute;left:621.30px;top:420.61px;width:24px;text-align:center;white-space:nowrap;font-family:'Liberation Sans';font-size:8.2px;color:#74aa64;">8</div>
<div style="position:absolute;left:638.55px;top:420.61px;width:24px;text-align:center;white-space:nowrap;font-family:'Liberation Sans';font-size:8.2px;color:#74aa64;">8</div>
<div style="position:absolute;left:25.3px;top:443.43px;width:767.1px;height:12.70999999999998px;background:#dbe1f1"></div>
<div style="position:absolute;left:25.3px;top:442.88px;width:767.1px;height:1.1px;background:#b3bde2"></div>
<div style="position:absolute;left:25.3px;top:455.59px;width:767.1px;height:1.1px;background:#b3bde2"></div>
<div style="position:absolute;left:26.9px;top:433.32px;white-space:nowrap;font-family:'Liberation Serif';font-weight:700;font-size:9.2px;color:#1d2b5c;transform:scaleX(1.189);transform-origin:0 0">October</div>
<div style="position:absolute;left:70.7px;top:445.93px;white-space:nowrap;font-family:'Liberation Serif';font-weight:700;font-size:9px;color:#78a85a;transform:scaleX(1.06);transform-origin:0 0">Hr</div>
<div style="position:absolute;left:204.75px;top:433.32000000000005px;width:24px;text-align:center;white-space:nowrap;font-family:'Liberation Sans';font-size:8.2px;color:#d9d9d9;">1</div>
<div style="position:absolute;left:216.85px;top:433.32000000000005px;width:24px;text-align:center;white-space:nowrap;font-family:'Liberation Sans';font-size:8.2px;color:#2e2e2e;">2</div>
<div style="position:absolute;left:230.35px;top:433.32000000000005px;width:24px;text-align:center;white-space:nowrap;font-family:'Liberation Sans';font-size:8.2px;color:#2e2e2e;">3</div>
<div style="position:absolute;left:244.35px;top:433.32000000000005px;width:24px;text-align:center;white-space:nowrap;font-family:'Liberation Sans';font-size:8.2px;color:#2e2e2e;">4</div>
<div style="position:absolute;left:259.30px;top:433.32000000000005px;width:24px;text-align:center;white-space:nowrap;font-family:'Liberation Sans';font-size:8.2px;color:#2e2e2e;">5</div>
<div style="position:absolute;left:276.35px;top:433.32000000000005px;width:24px;text-align:center;white-space:nowrap;font-family:'Liberation Sans';font-size:8.2px;color:#2e2e2e;">6</div>
<div style="position:absolute;left:293.65px;top:433.32000000000005px;width:24px;text-align:center;white-space:nowrap;font-family:'Liberation Sans';font-size:8.2px;color:#d9d9d9;">7</div>
<div style="position:absolute;left:311.10px;top:433.32000000000005px;width:24px;text-align:center;white-space:nowrap;font-family:'Liberation Sans';font-size:8.2px;color:#d9d9d9;">8</div>
<div style="position:absolute;left:328.35px;top:433.32000000000005px;width:24px;text-align:center;white-space:nowrap;font-family:'Liberation Sans';font-size:8.2px;color:#2e2e2e;">9</div>
<div style="position:absolute;left:345.45px;top:433.32000000000005px;width:24px;text-align:center;white-space:nowrap;font-family:'Liberation Sans';font-size:8.2px;color:#2e2e2e;">10</div>
<div style="position:absolute;left:362.60px;top:433.32000000000005px;width:24px;text-align:center;white-space:nowrap;font-family:'Liberation Sans';font-size:8.2px;color:#2e2e2e;">11</div>
<div style="position:absolute;left:379.85px;top:433.32000000000005px;width:24px;text-align:center;white-space:nowrap;font-family:'Liberation Sans';font-size:8.2px;color:#2e2e2e;">12</div>
<div style="position:absolute;left:397.25px;top:433.32000000000005px;width:24px;text-align:center;white-space:nowrap;font-family:'Liberation Sans';font-size:8.2px;color:#2e2e2e;">13</div>
<div style="position:absolute;left:414.50px;top:433.32000000000005px;width:24px;text-align:center;white-space:nowrap;font-family:'Liberation Sans';font-size:8.2px;color:#d9d9d9;">14</div>
<div style="position:absolute;left:431.70px;top:433.32000000000005px;width:24px;text-align:center;white-space:nowrap;font-family:'Liberation Sans';font-size:8.2px;color:#d9d9d9;">15</div>
<div style="position:absolute;left:449.05px;top:433.32000000000005px;width:24px;text-align:center;white-space:nowrap;font-family:'Liberation Sans';font-size:8.2px;color:#2e2e2e;">16</div>
<div style="position:absolute;left:466.30px;top:433.32000000000005px;width:24px;text-align:center;white-space:nowrap;font-family:'Liberation Sans';font-size:8.2px;color:#2e2e2e;">17</div>
<div style="position:absolute;left:483.50px;top:433.32000000000005px;width:24px;text-align:center;white-space:nowrap;font-family:'Liberation Sans';font-size:8.2px;color:#2e2e2e;">18</div>
<div style="position:absolute;left:500.70px;top:433.32000000000005px;width:24px;text-align:center;white-space:nowrap;font-family:'Liberation Sans';font-size:8.2px;color:#2e2e2e;">19</div>
<div style="position:absolute;left:518.00px;top:433.32000000000005px;width:24px;text-align:center;white-space:nowrap;font-family:'Liberation Sans';font-size:8.2px;color:#2e2e2e;">20</div>
<div style="position:absolute;left:535.40px;top:433.32000000000005px;width:24px;text-align:center;white-space:nowrap;font-family:'Liberation Sans';font-size:8.2px;color:#d9d9d9;">21</div>
<div style="position:absolute;left:552.65px;top:433.32000000000005px;width:24px;text-align:center;white-space:nowrap;font-family:'Liberation Sans';font-size:8.2px;color:#d9d9d9;">22</div>
<div style="position:absolute;left:569.75px;top:433.32000000000005px;width:24px;text-align:center;white-space:nowrap;font-family:'Liberation Sans';font-size:8.2px;color:#2e2e2e;">23</div>
<div style="position:absolute;left:586.90px;top:433.32000000000005px;width:24px;text-align:center;white-space:nowrap;font-family:'Liberation Sans';font-size:8.2px;color:#2e2e2e;">24</div>
<div style="position:absolute;left:604.05px;top:433.32000000000005px;width:24px;text-align:center;white-space:nowrap;font-family:'Liberation Sans';font-size:8.2px;color:#2e2e2e;">25</div>
<div style="position:absolute;left:621.30px;top:433.32000000000005px;width:24px;text-align:center;white-space:nowrap;font-family:'Liberation Sans';font-size:8.2px;color:#2e2e2e;">26</div>
<div style="position:absolute;left:638.55px;top:433.32000000000005px;width:24px;text-align:center;white-space:nowrap;font-family:'Liberation Sans';font-size:8.2px;color:#2e2e2e;">27</div>
<div style="position:absolute;left:655.80px;top:433.32000000000005px;width:24px;text-align:center;white-space:nowrap;font-family:'Liberation Sans';font-size:8.2px;color:#d9d9d9;">28</div>
<div style="position:absolute;left:673.20px;top:433.32000000000005px;width:24px;text-align:center;white-space:nowrap;font-family:'Liberation Sans';font-size:8.2px;color:#d9d9d9;">29</div>
<div style="position:absolute;left:690.45px;top:433.32000000000005px;width:24px;text-align:center;white-space:nowrap;font-family:'Liberation Sans';font-size:8.2px;color:#2e2e2e;">30</div>
<div style="position:absolute;left:707.35px;top:433.32000000000005px;width:24px;text-align:center;white-space:nowrap;font-family:'Liberation Sans';font-size:8.2px;color:#2e2e2e;">31</div>
<div style="position:absolute;left:216.85px;top:446.03000000000003px;width:24px;text-align:center;white-space:nowrap;font-family:'Liberation Sans';font-size:8.2px;color:#74aa64;">9</div>
<div style="position:absolute;left:230.35px;top:446.03000000000003px;width:24px;text-align:center;white-space:nowrap;font-family:'Liberation Sans';font-size:8.2px;color:#74aa64;">9</div>
<div style="position:absolute;left:244.35px;top:446.03000000000003px;width:24px;text-align:center;white-space:nowrap;font-family:'Liberation Sans';font-size:8.2px;color:#74aa64;">9</div>
<div style="position:absolute;left:259.30px;top:446.03000000000003px;width:24px;text-align:center;white-space:nowrap;font-family:'Liberation Sans';font-size:8.2px;color:#74aa64;">9</div>
<div style="position:absolute;left:276.35px;top:446.03000000000003px;width:24px;text-align:center;white-space:nowrap;font-family:'Liberation Sans';font-size:8.2px;color:#74aa64;">9</div>
<div style="position:absolute;left:328.35px;top:446.03000000000003px;width:24px;text-align:center;white-space:nowrap;font-family:'Liberation Sans';font-size:8.2px;color:#74aa64;">9</div>
<div style="position:absolute;left:345.45px;top:446.03000000000003px;width:24px;text-align:center;white-space:nowrap;font-family:'Liberation Sans';font-size:8.2px;color:#74aa64;">9</div>
<div style="position:absolute;left:362.60px;top:446.03000000000003px;width:24px;text-align:center;white-space:nowrap;font-family:'Liberation Sans';font-size:8.2px;color:#74aa64;">9</div>
<div style="position:absolute;left:379.85px;top:446.03000000000003px;width:24px;text-align:center;white-space:nowrap;font-family:'Liberation Sans';font-size:8.2px;color:#74aa64;">9</div>
<div style="position:absolute;left:397.25px;top:446.03000000000003px;width:24px;text-align:center;white-space:nowrap;font-family:'Liberation Sans';font-size:8.2px;color:#74aa64;">9</div>
<div style="position:absolute;left:449.05px;top:446.03000000000003px;width:24px;text-align:center;white-space:nowrap;font-family:'Liberation Sans';font-size:8.2px;color:#74aa64;">9</div>
<div style="position:absolute;left:466.30px;top:446.03000000000003px;width:24px;text-align:center;white-space:nowrap;font-family:'Liberation Sans';font-size:8.2px;color:#74aa64;">9</div>
<div style="position:absolute;left:483.50px;top:446.03000000000003px;width:24px;text-align:center;white-space:nowrap;font-family:'Liberation Sans';font-size:8.2px;color:#74aa64;">9</div>
<div style="position:absolute;left:500.70px;top:446.03000000000003px;width:24px;text-align:center;white-space:nowrap;font-family:'Liberation Sans';font-size:8.2px;color:#74aa64;">9</div>
<div style="position:absolute;left:518.00px;top:446.03000000000003px;width:24px;text-align:center;white-space:nowrap;font-family:'Liberation Sans';font-size:8.2px;color:#74aa64;">9</div>
<div style="position:absolute;left:569.75px;top:446.03000000000003px;width:24px;text-align:center;white-space:nowrap;font-family:'Liberation Sans';font-size:8.2px;color:#74aa64;">9</div>
<div style="position:absolute;left:586.90px;top:446.03000000000003px;width:24px;text-align:center;white-space:nowrap;font-family:'Liberation Sans';font-size:8.2px;color:#74aa64;">9</div>
<div style="position:absolute;left:604.05px;top:446.03000000000003px;width:24px;text-align:center;white-space:nowrap;font-family:'Liberation Sans';font-size:8.2px;color:#74aa64;">9</div>
<div style="position:absolute;left:621.30px;top:446.03000000000003px;width:24px;text-align:center;white-space:nowrap;font-family:'Liberation Sans';font-size:8.2px;color:#74aa64;">9</div>
<div style="position:absolute;left:638.55px;top:446.03000000000003px;width:24px;text-align:center;white-space:nowrap;font-family:'Liberation Sans';font-size:8.2px;color:#74aa64;">9</div>
<div style="position:absolute;left:690.45px;top:446.03000000000003px;width:24px;text-align:center;white-space:nowrap;font-family:'Liberation Sans';font-size:8.2px;color:#74aa64;">9</div>
<div style="position:absolute;left:707.35px;top:446.03000000000003px;width:24px;text-align:center;white-space:nowrap;font-family:'Liberation Sans';font-size:8.2px;color:#74aa64;">9</div>
<div style="position:absolute;left:25.3px;top:468.85px;width:767.1px;height:12.70999999999998px;background:#dbe1f1"></div>
<div style="position:absolute;left:25.3px;top:468.3px;width:767.1px;height:1.1px;background:#b3bde2"></div>
<div style="position:absolute;left:25.3px;top:481.01px;width:767.1px;height:1.1px;background:#b3bde2"></div>
<div style="position:absolute;left:26.9px;top:458.74px;white-space:nowrap;font-family:'Liberation Serif';font-weight:700;font-size:9.2px;color:#1d2b5c;transform:scaleX(1.176);transform-origin:0 0">November</div>
<div style="position:absolute;left:70.7px;top:471.35px;white-space:nowrap;font-family:'Liberation Serif';font-weight:700;font-size:9px;color:#78a85a;transform:scaleX(1.06);transform-origin:0 0">Hr</div>
<div style="position:absolute;left:152.20px;top:458.74px;width:24px;text-align:center;white-space:nowrap;font-family:'Liberation Sans';font-size:8.2px;color:#2e2e2e;">1</div>
<div style="position:absolute;left:166.40px;top:458.74px;width:24px;text-align:center;white-space:nowrap;font-family:'Liberation Sans';font-size:8.2px;color:#2e2e2e;">2</div>
<div style="position:absolute;left:180.50px;top:458.74px;width:24px;text-align:center;white-space:nowrap;font-family:'Liberation Sans';font-size:8.2px;color:#2e2e2e;">3</div>
<div style="position:absolute;left:192.75px;top:458.74px;width:24px;text-align:center;white-space:nowrap;font-family:'Liberation Sans';font-size:8.2px;color:#d9d9d9;">4</div>
<div style="position:absolute;left:204.75px;top:458.74px;width:24px;text-align:center;white-space:nowrap;font-family:'Liberation Sans';font-size:8.2px;color:#d9d9d9;">5</div>
<div style="position:absolute;left:216.85px;top:458.74px;width:24px;text-align:center;white-space:nowrap;font-family:'Liberation Sans';font-size:8.2px;color:#2e2e2e;">6</div>
<div style="position:absolute;left:230.35px;top:458.74px;width:24px;text-align:center;white-space:nowrap;font-family:'Liberation Sans';font-size:8.2px;color:#2e2e2e;">7</div>
<div style="position:absolute;left:244.35px;top:458.74px;width:24px;text-align:center;white-space:nowrap;font-family:'Liberation Sans';font-size:8.2px;color:#2e2e2e;">8</div>
<div style="position:absolute;left:259.30px;top:458.74px;width:24px;text-align:center;white-space:nowrap;font-family:'Liberation Sans';font-size:8.2px;color:#2e2e2e;">9</div>
<div style="position:absolute;left:276.35px;top:458.74px;width:24px;text-align:center;white-space:nowrap;font-family:'Liberation Sans';font-size:8.2px;color:#2e2e2e;">10</div>
<div style="position:absolute;left:293.65px;top:458.74px;width:24px;text-align:center;white-space:nowrap;font-family:'Liberation Sans';font-size:8.2px;color:#d9d9d9;">11</div>
<div style="position:absolute;left:311.10px;top:458.74px;width:24px;text-align:center;white-space:nowrap;font-family:'Liberation Sans';font-size:8.2px;color:#d9d9d9;">12</div>
<div style="position:absolute;left:328.35px;top:458.74px;width:24px;text-align:center;white-space:nowrap;font-family:'Liberation Sans';font-size:8.2px;color:#2e2e2e;">13</div>
<div style="position:absolute;left:345.45px;top:458.74px;width:24px;text-align:center;white-space:nowrap;font-family:'Liberation Sans';font-size:8.2px;color:#2e2e2e;">14</div>
<div style="position:absolute;left:362.60px;top:458.74px;width:24px;text-align:center;white-space:nowrap;font-family:'Liberation Sans';font-size:8.2px;color:#2e2e2e;">15</div>
<div style="position:absolute;left:379.85px;top:458.74px;width:24px;text-align:center;white-space:nowrap;font-family:'Liberation Sans';font-size:8.2px;color:#2e2e2e;">16</div>
<div style="position:absolute;left:397.25px;top:458.74px;width:24px;text-align:center;white-space:nowrap;font-family:'Liberation Sans';font-size:8.2px;color:#2e2e2e;">17</div>
<div style="position:absolute;left:414.50px;top:458.74px;width:24px;text-align:center;white-space:nowrap;font-family:'Liberation Sans';font-size:8.2px;color:#d9d9d9;">18</div>
<div style="position:absolute;left:431.70px;top:458.74px;width:24px;text-align:center;white-space:nowrap;font-family:'Liberation Sans';font-size:8.2px;color:#d9d9d9;">19</div>
<div style="position:absolute;left:449.05px;top:458.74px;width:24px;text-align:center;white-space:nowrap;font-family:'Liberation Sans';font-size:8.2px;color:#2e2e2e;">20</div>
<div style="position:absolute;left:466.30px;top:458.74px;width:24px;text-align:center;white-space:nowrap;font-family:'Liberation Sans';font-size:8.2px;color:#2e2e2e;">21</div>
<div style="position:absolute;left:483.50px;top:458.74px;width:24px;text-align:center;white-space:nowrap;font-family:'Liberation Sans';font-size:8.2px;color:#2e2e2e;">22</div>
<div style="position:absolute;left:500.70px;top:458.74px;width:24px;text-align:center;white-space:nowrap;font-family:'Liberation Sans';font-size:8.2px;color:#2e2e2e;">23</div>
<div style="position:absolute;left:518.00px;top:458.74px;width:24px;text-align:center;white-space:nowrap;font-family:'Liberation Sans';font-size:8.2px;color:#2e2e2e;">24</div>
<div style="position:absolute;left:535.40px;top:458.74px;width:24px;text-align:center;white-space:nowrap;font-family:'Liberation Sans';font-size:8.2px;color:#d9d9d9;">25</div>
<div style="position:absolute;left:552.65px;top:458.74px;width:24px;text-align:center;white-space:nowrap;font-family:'Liberation Sans';font-size:8.2px;color:#d9d9d9;">26</div>
<div style="position:absolute;left:569.75px;top:458.74px;width:24px;text-align:center;white-space:nowrap;font-family:'Liberation Sans';font-size:8.2px;color:#2e2e2e;">27</div>
<div style="position:absolute;left:586.90px;top:458.74px;width:24px;text-align:center;white-space:nowrap;font-family:'Liberation Sans';font-size:8.2px;color:#2e2e2e;">28</div>
<div style="position:absolute;left:604.05px;top:458.74px;width:24px;text-align:center;white-space:nowrap;font-family:'Liberation Sans';font-size:8.2px;color:#2e2e2e;">29</div>
<div style="position:absolute;left:621.30px;top:458.74px;width:24px;text-align:center;white-space:nowrap;font-family:'Liberation Sans';font-size:8.2px;color:#2e2e2e;">30</div>
<div style="position:absolute;left:152.20px;top:471.45000000000005px;width:24px;text-align:center;white-space:nowrap;font-family:'Liberation Sans';font-size:8.2px;color:#74aa64;">9</div>
<div style="position:absolute;left:166.40px;top:471.45000000000005px;width:24px;text-align:center;white-space:nowrap;font-family:'Liberation Sans';font-size:8.2px;color:#74aa64;">9</div>
<div style="position:absolute;left:180.50px;top:471.45000000000005px;width:24px;text-align:center;white-space:nowrap;font-family:'Liberation Sans';font-size:8.2px;color:#74aa64;">9</div>
<div style="position:absolute;left:216.85px;top:471.45000000000005px;width:24px;text-align:center;white-space:nowrap;font-family:'Liberation Sans';font-size:8.2px;color:#74aa64;">9</div>
<div style="position:absolute;left:230.35px;top:471.45000000000005px;width:24px;text-align:center;white-space:nowrap;font-family:'Liberation Sans';font-size:8.2px;color:#74aa64;">9</div>
<div style="position:absolute;left:244.35px;top:471.45000000000005px;width:24px;text-align:center;white-space:nowrap;font-family:'Liberation Sans';font-size:8.2px;color:#74aa64;">9</div>
<div style="position:absolute;left:259.30px;top:471.45000000000005px;width:24px;text-align:center;white-space:nowrap;font-family:'Liberation Sans';font-size:8.2px;color:#74aa64;">9</div>
<div style="position:absolute;left:276.35px;top:471.45000000000005px;width:24px;text-align:center;white-space:nowrap;font-family:'Liberation Sans';font-size:8.2px;color:#74aa64;">9</div>
<div style="position:absolute;left:328.35px;top:471.45000000000005px;width:24px;text-align:center;white-space:nowrap;font-family:'Liberation Sans';font-size:8.2px;color:#74aa64;">9</div>
<div style="position:absolute;left:345.45px;top:471.45000000000005px;width:24px;text-align:center;white-space:nowrap;font-family:'Liberation Sans';font-size:8.2px;color:#74aa64;">9</div>
<div style="position:absolute;left:362.60px;top:471.45000000000005px;width:24px;text-align:center;white-space:nowrap;font-family:'Liberation Sans';font-size:8.2px;color:#74aa64;">9</div>
<div style="position:absolute;left:379.85px;top:471.45000000000005px;width:24px;text-align:center;white-space:nowrap;font-family:'Liberation Sans';font-size:8.2px;color:#74aa64;">9</div>
<div style="position:absolute;left:397.25px;top:471.45000000000005px;width:24px;text-align:center;white-space:nowrap;font-family:'Liberation Sans';font-size:8.2px;color:#74aa64;">9</div>
<div style="position:absolute;left:449.05px;top:471.45000000000005px;width:24px;text-align:center;white-space:nowrap;font-family:'Liberation Sans';font-size:8.2px;color:#74aa64;">9</div>
<div style="position:absolute;left:466.30px;top:471.45000000000005px;width:24px;text-align:center;white-space:nowrap;font-family:'Liberation Sans';font-size:8.2px;color:#74aa64;">9</div>
<div style="position:absolute;left:483.50px;top:471.45000000000005px;width:24px;text-align:center;white-space:nowrap;font-family:'Liberation Sans';font-size:8.2px;color:#74aa64;">9</div>
<div style="position:absolute;left:500.70px;top:471.45000000000005px;width:24px;text-align:center;white-space:nowrap;font-family:'Liberation Sans';font-size:8.2px;color:#74aa64;">9</div>
<div style="position:absolute;left:518.00px;top:471.45000000000005px;width:24px;text-align:center;white-space:nowrap;font-family:'Liberation Sans';font-size:8.2px;color:#74aa64;">9</div>
<div style="position:absolute;left:569.75px;top:471.45000000000005px;width:24px;text-align:center;white-space:nowrap;font-family:'Liberation Sans';font-size:8.2px;color:#74aa64;">9</div>
<div style="position:absolute;left:586.90px;top:471.45000000000005px;width:24px;text-align:center;white-space:nowrap;font-family:'Liberation Sans';font-size:8.2px;color:#74aa64;">9</div>
<div style="position:absolute;left:604.05px;top:471.45000000000005px;width:24px;text-align:center;white-space:nowrap;font-family:'Liberation Sans';font-size:8.2px;color:#74aa64;">9</div>
<div style="position:absolute;left:621.30px;top:471.45000000000005px;width:24px;text-align:center;white-space:nowrap;font-family:'Liberation Sans';font-size:8.2px;color:#74aa64;">9</div>
<div style="position:absolute;left:638.55px;top:471.45000000000005px;width:24px;text-align:center;white-space:nowrap;font-family:'Liberation Sans';font-size:8.2px;color:#74aa64;">9</div>
<div style="position:absolute;left:25.3px;top:494.27000000000004px;width:767.1px;height:12.70999999999998px;background:#dbe1f1"></div>
<div style="position:absolute;left:25.3px;top:493.72px;width:767.1px;height:1.1px;background:#b3bde2"></div>
<div style="position:absolute;left:26.9px;top:484.16px;white-space:nowrap;font-family:'Liberation Serif';font-weight:700;font-size:9.2px;color:#1d2b5c;transform:scaleX(1.185);transform-origin:0 0">December</div>
<div style="position:absolute;left:70.7px;top:496.77px;white-space:nowrap;font-family:'Liberation Serif';font-weight:700;font-size:9px;color:#78a85a;transform:scaleX(1.06);transform-origin:0 0">Hr</div>
<div style="position:absolute;left:180.50px;top:484.16px;width:24px;text-align:center;white-space:nowrap;font-family:'Liberation Sans';font-size:8.2px;color:#2e2e2e;">1</div>
<div style="position:absolute;left:192.75px;top:484.16px;width:24px;text-align:center;white-space:nowrap;font-family:'Liberation Sans';font-size:8.2px;color:#d9d9d9;">2</div>
<div style="position:absolute;left:204.75px;top:484.16px;width:24px;text-align:center;white-space:nowrap;font-family:'Liberation Sans';font-size:8.2px;color:#d9d9d9;">3</div>
<div style="position:absolute;left:216.85px;top:484.16px;width:24px;text-align:center;white-space:nowrap;font-family:'Liberation Sans';font-size:8.2px;color:#2e2e2e;">4</div>
<div style="position:absolute;left:230.35px;top:484.16px;width:24px;text-align:center;white-space:nowrap;font-family:'Liberation Sans';font-size:8.2px;color:#2e2e2e;">5</div>
<div style="position:absolute;left:244.35px;top:484.16px;width:24px;text-align:center;white-space:nowrap;font-family:'Liberation Sans';font-size:8.2px;color:#2e2e2e;">6</div>
<div style="position:absolute;left:259.30px;top:484.16px;width:24px;text-align:center;white-space:nowrap;font-family:'Liberation Sans';font-size:8.2px;color:#2e2e2e;">7</div>
<div style="position:absolute;left:276.35px;top:484.16px;width:24px;text-align:center;white-space:nowrap;font-family:'Liberation Sans';font-size:8.2px;color:#2e2e2e;">8</div>
<div style="position:absolute;left:293.65px;top:484.16px;width:24px;text-align:center;white-space:nowrap;font-family:'Liberation Sans';font-size:8.2px;color:#d9d9d9;">9</div>
<div style="position:absolute;left:311.10px;top:484.16px;width:24px;text-align:center;white-space:nowrap;font-family:'Liberation Sans';font-size:8.2px;color:#d9d9d9;">10</div>
<div style="position:absolute;left:328.35px;top:484.16px;width:24px;text-align:center;white-space:nowrap;font-family:'Liberation Sans';font-size:8.2px;color:#2e2e2e;">11</div>
<div style="position:absolute;left:345.45px;top:484.16px;width:24px;text-align:center;white-space:nowrap;font-family:'Liberation Sans';font-size:8.2px;color:#2e2e2e;">12</div>
<div style="position:absolute;left:362.60px;top:484.16px;width:24px;text-align:center;white-space:nowrap;font-family:'Liberation Sans';font-size:8.2px;color:#2e2e2e;">13</div>
<div style="position:absolute;left:379.85px;top:484.16px;width:24px;text-align:center;white-space:nowrap;font-family:'Liberation Sans';font-size:8.2px;color:#2e2e2e;">14</div>
<div style="position:absolute;left:397.25px;top:484.16px;width:24px;text-align:center;white-space:nowrap;font-family:'Liberation Sans';font-size:8.2px;color:#2e2e2e;">15</div>
<div style="position:absolute;left:414.50px;top:484.16px;width:24px;text-align:center;white-space:nowrap;font-family:'Liberation Sans';font-size:8.2px;color:#d9d9d9;">16</div>
<div style="position:absolute;left:431.70px;top:484.16px;width:24px;text-align:center;white-space:nowrap;font-family:'Liberation Sans';font-size:8.2px;color:#d9d9d9;">17</div>
<div style="position:absolute;left:449.05px;top:484.16px;width:24px;text-align:center;white-space:nowrap;font-family:'Liberation Sans';font-size:8.2px;color:#2e2e2e;">18</div>
<div style="position:absolute;left:466.30px;top:484.16px;width:24px;text-align:center;white-space:nowrap;font-family:'Liberation Sans';font-size:8.2px;color:#2e2e2e;">19</div>
<div style="position:absolute;left:483.50px;top:484.16px;width:24px;text-align:center;white-space:nowrap;font-family:'Liberation Sans';font-size:8.2px;color:#2e2e2e;">20</div>
<div style="position:absolute;left:500.70px;top:484.16px;width:24px;text-align:center;white-space:nowrap;font-family:'Liberation Sans';font-size:8.2px;color:#2e2e2e;">21</div>
<div style="position:absolute;left:518.00px;top:484.16px;width:24px;text-align:center;white-space:nowrap;font-family:'Liberation Sans';font-size:8.2px;color:#2e2e2e;">22</div>
<div style="position:absolute;left:535.40px;top:484.16px;width:24px;text-align:center;white-space:nowrap;font-family:'Liberation Sans';font-size:8.2px;color:#d9d9d9;">23</div>
<div style="position:absolute;left:552.65px;top:484.16px;width:24px;text-align:center;white-space:nowrap;font-family:'Liberation Sans';font-size:8.2px;color:#d9d9d9;">24</div>
<div style="position:absolute;left:569.75px;top:484.16px;width:24px;text-align:center;white-space:nowrap;font-family:'Liberation Sans';font-size:8.2px;color:#2e2e2e;">25</div>
<div style="position:absolute;left:586.90px;top:484.16px;width:24px;text-align:center;white-space:nowrap;font-family:'Liberation Sans';font-size:8.2px;color:#2e2e2e;">26</div>
<div style="position:absolute;left:604.05px;top:484.16px;width:24px;text-align:center;white-space:nowrap;font-family:'Liberation Sans';font-size:8.2px;color:#2e2e2e;">27</div>
<div style="position:absolute;left:621.30px;top:484.16px;width:24px;text-align:center;white-space:nowrap;font-family:'Liberation Sans';font-size:8.2px;color:#2e2e2e;">28</div>
<div style="position:absolute;left:638.55px;top:484.16px;width:24px;text-align:center;white-space:nowrap;font-family:'Liberation Sans';font-size:8.2px;color:#2e2e2e;">29</div>
<div style="position:absolute;left:655.80px;top:484.16px;width:24px;text-align:center;white-space:nowrap;font-family:'Liberation Sans';font-size:8.2px;color:#d9d9d9;">30</div>
<div style="position:absolute;left:673.20px;top:484.16px;width:24px;text-align:center;white-space:nowrap;font-family:'Liberation Sans';font-size:8.2px;color:#d9d9d9;">31</div>
<div style="position:absolute;left:180.50px;top:496.87000000000006px;width:24px;text-align:center;white-space:nowrap;font-family:'Liberation Sans';font-size:8.2px;color:#74aa64;">9</div>
<div style="position:absolute;left:216.85px;top:496.87000000000006px;width:24px;text-align:center;white-space:nowrap;font-family:'Liberation Sans';font-size:8.2px;color:#74aa64;">9</div>
<div style="position:absolute;left:230.35px;top:496.87000000000006px;width:24px;text-align:center;white-space:nowrap;font-family:'Liberation Sans';font-size:8.2px;color:#74aa64;">9</div>
<div style="position:absolute;left:244.35px;top:496.87000000000006px;width:24px;text-align:center;white-space:nowrap;font-family:'Liberation Sans';font-size:8.2px;color:#74aa64;">9</div>
<div style="position:absolute;left:259.30px;top:496.87000000000006px;width:24px;text-align:center;white-space:nowrap;font-family:'Liberation Sans';font-size:8.2px;color:#74aa64;">9</div>
<div style="position:absolute;left:276.35px;top:496.87000000000006px;width:24px;text-align:center;white-space:nowrap;font-family:'Liberation Sans';font-size:8.2px;color:#74aa64;">9</div>
<div style="position:absolute;left:328.35px;top:496.87000000000006px;width:24px;text-align:center;white-space:nowrap;font-family:'Liberation Sans';font-size:8.2px;color:#74aa64;">9</div>
<div style="position:absolute;left:345.45px;top:496.87000000000006px;width:24px;text-align:center;white-space:nowrap;font-family:'Liberation Sans';font-size:8.2px;color:#74aa64;">9</div>
<div style="position:absolute;left:362.60px;top:496.87000000000006px;width:24px;text-align:center;white-space:nowrap;font-family:'Liberation Sans';font-size:8.2px;color:#74aa64;">9</div>
<div style="position:absolute;left:379.85px;top:496.87000000000006px;width:24px;text-align:center;white-space:nowrap;font-family:'Liberation Sans';font-size:8.2px;color:#74aa64;">9</div>
<div style="position:absolute;left:397.25px;top:496.87000000000006px;width:24px;text-align:center;white-space:nowrap;font-family:'Liberation Sans';font-size:8.2px;color:#74aa64;">9</div>
<div style="position:absolute;left:449.05px;top:496.87000000000006px;width:24px;text-align:center;white-space:nowrap;font-family:'Liberation Sans';font-size:8.2px;color:#74aa64;">9</div>
<div style="position:absolute;left:466.30px;top:496.87000000000006px;width:24px;text-align:center;white-space:nowrap;font-family:'Liberation Sans';font-size:8.2px;color:#74aa64;">9</div>
<div style="position:absolute;left:483.50px;top:496.87000000000006px;width:24px;text-align:center;white-space:nowrap;font-family:'Liberation Sans';font-size:8.2px;color:#74aa64;">9</div>
<div style="position:absolute;left:500.70px;top:496.87000000000006px;width:24px;text-align:center;white-space:nowrap;font-family:'Liberation Sans';font-size:8.2px;color:#74aa64;">9</div>
<div style="position:absolute;left:518.00px;top:496.87000000000006px;width:24px;text-align:center;white-space:nowrap;font-family:'Liberation Sans';font-size:8.2px;color:#74aa64;">9</div>
<div style="position:absolute;left:569.75px;top:496.87000000000006px;width:24px;text-align:center;white-space:nowrap;font-family:'Liberation Sans';font-size:8.2px;color:#74aa64;">9</div>
<div style="position:absolute;left:586.90px;top:496.87000000000006px;width:24px;text-align:center;white-space:nowrap;font-family:'Liberation Sans';font-size:8.2px;color:#74aa64;">9</div>
<div style="position:absolute;left:604.05px;top:496.87000000000006px;width:24px;text-align:center;white-space:nowrap;font-family:'Liberation Sans';font-size:8.2px;color:#74aa64;">9</div>
<div style="position:absolute;left:621.30px;top:496.87000000000006px;width:24px;text-align:center;white-space:nowrap;font-family:'Liberation Sans';font-size:8.2px;color:#74aa64;">9</div>
<div style="position:absolute;left:638.55px;top:496.87000000000006px;width:24px;text-align:center;white-space:nowrap;font-family:'Liberation Sans';font-size:8.2px;color:#74aa64;">9</div>
<div style="position:absolute;left:791.9px;top:201.1px;width:1px;height:306.0px;background:#aab6e0"></div>
<div style="position:absolute;left:25.3px;top:507.0px;width:767.1px;height:14.5px;background:#0a2068"></div>
<div style="position:absolute;left:25.3px;top:506.6px;width:767.1px;height:1px;background:#000a30"></div>
<div style="position:absolute;left:25.3px;top:520.6px;width:767.1px;height:1.0px;background:#000a30"></div>
<svg style="position:absolute;left:0;top:0" width="800" height="520"><polygon points="792.4,503.6 792.4,507 789,507" fill="#3b4a80"/></svg>
<div style="position:absolute;left:1014.2px;top:176.4px;width:15.799999999999955px;height:366.6px;background:#dcdcdc"></div>
<div style="position:absolute;left:1016.6px;top:177.8px;width:10.8px;height:10.6px;background:#fff;border:1px solid #c8c8c8;box-sizing:border-box"></div>
<div style="position:absolute;left:1016.7px;top:249.3px;width:11px;height:272px;background:#fff;border:1px solid #c8c8c8;box-sizing:border-box"></div>
<div style="position:absolute;left:1016.6px;top:532px;width:10.8px;height:11px;background:#fff;border:1px solid #c8c8c8;box-sizing:border-box"></div>
<svg style="position:absolute;left:0;top:0" width="1036" height="587"><polygon points="1019.5,184.5 1024.5,184.5 1022,181.8" fill="#555"/><polygon points="1019.5,535.8 1024.5,535.8 1022,538.5" fill="#555"/></svg>
<div style="position:absolute;left:6px;top:543px;width:1024px;height:21px;background:#e6e6e6"></div>
<div style="position:absolute;left:6px;top:543px;width:1024px;height:0.8px;background:#c6c6c6"></div>
<div style="position:absolute;left:81.1px;top:543px;width:49px;height:18.5px;background:#fff;border-left:1px solid #cfcfcf;border-right:1px solid #cfcfcf;box-sizing:border-box"></div>
<div style="position:absolute;left:81.6px;top:559.8px;width:48px;height:1.8px;background:#217346"></div>
<div style="position:absolute;left:90px;top:547.4px;white-space:nowrap;font-family:'Liberation Sans';-webkit-text-stroke:0.15px currentColor;font-size:9.6px;font-weight:700;color:#217346;-webkit-text-stroke:0;">Sheet1</div>
<svg style="position:absolute;left:0;top:0" width="1036" height="587">
 <polygon points="29.5,550.5 29.5,555.5 26.8,553" fill="#b8b8b8"/>
 <polygon points="48.2,550.5 48.2,555.5 51,553" fill="#b8b8b8"/>
 <circle cx="160.6" cy="553.2" r="5.6" fill="none" stroke="#666" stroke-width="1"/>
 <path d="M157.6,553.2 L163.6,553.2 M160.6,550.2 L160.6,556.2" stroke="#666" stroke-width="1.2"/>
 <g fill="#999"><rect x="620" y="550" width="1" height="1"/><rect x="620" y="553.3" width="1" height="1"/><rect x="620" y="556.6" width="1" height="1"/></g>
</svg>
<div style="position:absolute;left:633px;top:548px;width:381px;height:11.4px;background:#fff;border:1px solid #c8c8c8;box-sizing:border-box"></div>
<div style="position:absolute;left:633px;top:548px;width:11px;height:11.4px;background:#fff;border:1px solid #c8c8c8;box-sizing:border-box"></div>
<div style="position:absolute;left:995.4px;top:548px;width:8px;height:11.4px;background:#dcdcdc"></div>
<div style="position:absolute;left:1003px;top:548px;width:11px;height:11.4px;background:#fff;border:1px solid #c8c8c8;box-sizing:border-box"></div>
<svg style="position:absolute;left:0;top:0" width="1036" height="587">
 <polygon points="640,551 640,556 637.3,553.5" fill="#555"/>
 <polygon points="1007.5,551 1007.5,556 1010.2,553.5" fill="#555"/>
</svg>
<div style="position:absolute;left:6px;top:564px;width:1024px;height:16px;background:#f0f0f0"></div>
<div style="position:absolute;left:6px;top:563.6px;width:1024px;height:0.8px;background:#d6d6d6"></div>
<div style="position:absolute;left:11.8px;top:567.1px;white-space:nowrap;font-family:'Liberation Sans';-webkit-text-stroke:0.15px currentColor;font-size:8px;color:#444;">Ready</div>
<div style="position:absolute;left:811.4px;top:564px;width:27.6px;height:16px;background:#c9c9c9"></div>
<svg style="position:absolute;left:0;top:0" width="1036" height="587">
 <rect x="50" y="567.5" width="9" height="9" fill="none" stroke="#888" stroke-width="0.9"/><rect x="50" y="567.5" width="3.5" height="3" fill="#666"/><line x1="50" y1="572" x2="59" y2="572" stroke="#888" stroke-width="0.7"/><line x1="54.5" y1="567.5" x2="54.5" y2="576.5" stroke="#888" stroke-width="0.7"/>
 <g fill="none" stroke="#666" stroke-width="0.9"><rect x="820.5" y="567.5" width="9" height="9"/><line x1="823.5" y1="567.5" x2="823.5" y2="576.5"/><line x1="826.5" y1="567.5" x2="826.5" y2="576.5"/><line x1="820.5" y1="570.5" x2="829.5" y2="570.5"/><line x1="820.5" y1="573.5" x2="829.5" y2="573.5"/></g>
 <g fill="none" stroke="#666" stroke-width="0.9"><rect x="848.5" y="567.5" width="10" height="9"/><rect x="851" y="569" width="5" height="6"/></g>
 <g fill="none" stroke="#666" stroke-width="0.9"><rect x="877.5" y="567.5" width="10" height="9"/><polyline points="880.5,567.5 880.5,572 884.5,572 884.5,567.5"/></g>
 <line x1="900" y1="572" x2="904.8" y2="572" stroke="#555" stroke-width="1.3"/>
 <line x1="908" y1="572" x2="982" y2="572" stroke="#aaa" stroke-width="0.8"/>
 <rect x="937.8" y="567.5" width="3" height="9" fill="#555"/>
 <line x1="945.8" y1="570.5" x2="945.8" y2="573.5" stroke="#aaa" stroke-width="0.8"/>
 <path d="M986,572 L991.8,572 M988.9,569 L988.9,575" stroke="#555" stroke-width="1.3"/>
</svg>
<div style="position:absolute;left:1002.7px;top:568.2px;white-space:nowrap;font-family:'Liberation Sans';-webkit-text-stroke:0.15px currentColor;font-size:8.6px;color:#555;">85%</div>
</body></html>
